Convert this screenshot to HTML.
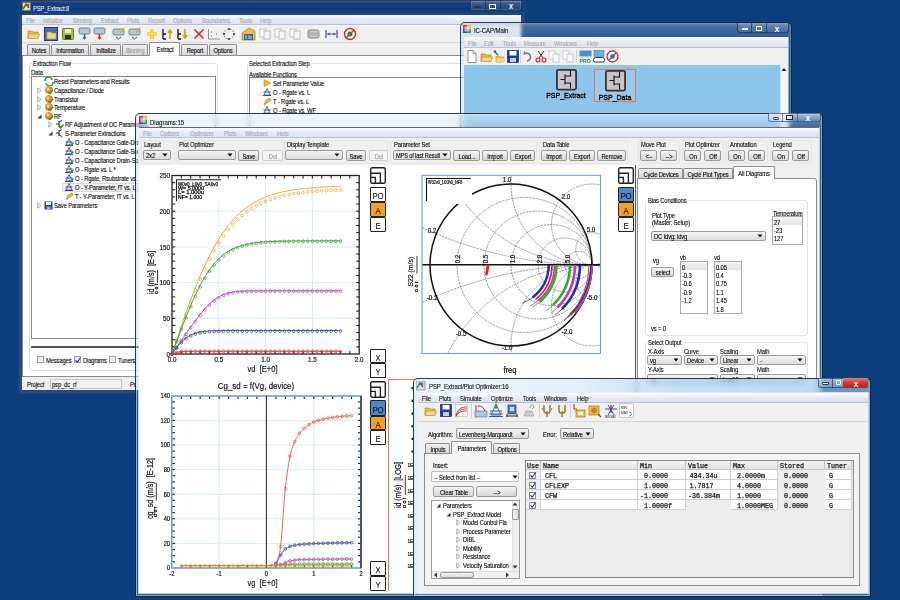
<!DOCTYPE html>
<html><head><meta charset="utf-8"><style>
*{margin:0;padding:0;box-sizing:border-box}
html,body{width:900px;height:600px;overflow:hidden}
body{position:relative;background:#0c3e7d;font-family:"Liberation Sans", sans-serif;font-size:7px;color:#000}
.a{position:absolute}
.t{position:absolute;white-space:nowrap;line-height:1;-webkit-text-stroke:0.1px currentColor}
</style></head><body>
<div class="a" style="left:0px;top:0px;width:900px;height:600px;background:#0c3e7d;"></div><div class="a" style="left:18px;top:0px;width:507px;height:394px;border:1px solid #2b3e5e;border-radius:5px 5px 0 0;background:linear-gradient(#3a5a8c 0px,#173f7a 2px,#0f3a78 8px,#1a4686 13px,#214b88 16px);"></div><svg class="a" style="left:22px;top:2px;" width="10" height="10" viewBox="0 0 10 10"><rect x="0.5" y="0.5" width="8" height="8" fill="#e8e0c0" stroke="#7a6a40" stroke-width="0.6"/><path d="M1 7 L4 2 L7 6" stroke="#2a7a3a" stroke-width="1.5" fill="none"/><circle cx="6" cy="3" r="1.5" fill="#d04030"/></svg><div class="t" style="left:33.0px;top:5.6px;font-size:6.48px;color:#e8eef8;letter-spacing:-0.05px;transform:scaleX(0.87);transform-origin:0 50%;">PSP_Extract:8</div><div class="a" style="left:470px;top:1px;width:52px;height:10px;border:1px solid rgba(20,40,70,0.7);border-top:none;border-radius:0 0 3px 3px;background:linear-gradient(rgba(255,255,255,0.18),rgba(255,255,255,0.05));box-shadow:inset 0 0 0 0.5px rgba(255,255,255,0.3);"></div><div class="a" style="left:485px;top:1px;width:1px;height:10px;background:rgba(20,40,70,0.6);"></div><div class="a" style="left:500px;top:1px;width:1px;height:10px;background:rgba(20,40,70,0.6);"></div><div class="a" style="left:474px;top:6px;width:7px;height:2px;background:#fff;border:0.5px solid #334;"></div><div class="a" style="left:489px;top:4px;width:7px;height:5px;border:1.5px solid #fff;"></div><div class="t" style="left:311.0px;width:400px;text-align:center;top:4.1px;font-size:6.70px;color:#fff;font-weight:bold;letter-spacing:-0.15px;transform:scaleX(0.87);transform-origin:50% 50%;">X</div><div class="a" style="left:22px;top:15px;width:499px;height:375px;background:#f0f0f0;"></div><div class="a" style="left:22px;top:15px;width:499px;height:10px;background:linear-gradient(#fdfdfe,#e9ecf5 45%,#dce1ee);border-bottom:1px solid #b9c3d6;"></div><div class="t" style="left:26.0px;top:18.1px;font-size:6.70px;color:#a6a8ae;letter-spacing:-0.15px;transform:scaleX(0.87);transform-origin:0 50%;">File</div><div class="t" style="left:43.0px;top:18.1px;font-size:6.70px;color:#a6a8ae;letter-spacing:-0.15px;transform:scaleX(0.87);transform-origin:0 50%;">Initialize</div><div class="t" style="left:73.0px;top:18.1px;font-size:6.70px;color:#a6a8ae;letter-spacing:-0.15px;transform:scaleX(0.87);transform-origin:0 50%;">Binning</div><div class="t" style="left:101.0px;top:18.1px;font-size:6.70px;color:#a6a8ae;letter-spacing:-0.15px;transform:scaleX(0.87);transform-origin:0 50%;">Extract</div><div class="t" style="left:127.0px;top:18.1px;font-size:6.70px;color:#a6a8ae;letter-spacing:-0.15px;transform:scaleX(0.87);transform-origin:0 50%;">Plots</div><div class="t" style="left:148.0px;top:18.1px;font-size:6.70px;color:#a6a8ae;letter-spacing:-0.15px;transform:scaleX(0.87);transform-origin:0 50%;">Report</div><div class="t" style="left:173.0px;top:18.1px;font-size:6.70px;color:#a6a8ae;letter-spacing:-0.15px;transform:scaleX(0.87);transform-origin:0 50%;">Options</div><div class="t" style="left:202.0px;top:18.1px;font-size:6.70px;color:#a6a8ae;letter-spacing:-0.15px;transform:scaleX(0.87);transform-origin:0 50%;">Boundaries</div><div class="t" style="left:239.0px;top:18.1px;font-size:6.70px;color:#a6a8ae;letter-spacing:-0.15px;transform:scaleX(0.87);transform-origin:0 50%;">Tools</div><div class="t" style="left:260.0px;top:18.1px;font-size:6.70px;color:#a6a8ae;letter-spacing:-0.15px;transform:scaleX(0.87);transform-origin:0 50%;">Help</div><svg class="a" style="left:27px;top:28px;" width="13" height="12" viewBox="0 0 13 12"><path d="M1 3 L5 3 L6 4 L11 4 L11 10 L1 10 Z" fill="#e9b94a" stroke="#a87a1e" stroke-width="0.6"/><path d="M2 6 L12.5 6 L11 10.5 L1 10.5 Z" fill="#f6d27a" stroke="#b68a2a" stroke-width="0.6"/></svg><svg class="a" style="left:44px;top:27px;" width="14" height="14" viewBox="0 0 14 14"><rect x="0" y="0" width="14" height="14" fill="#1c3a8a"/><rect x="1" y="1" width="12" height="12" fill="#4a6ab8"/><path d="M3 5 L7 5 L8 6 L12 6 L12 12 L3 12 Z" fill="#f6d27a" stroke="#b68a2a" stroke-width="0.6"/></svg><svg class="a" style="left:62px;top:28px;" width="12" height="12" viewBox="0 0 12 12"><rect x="0.5" y="0.5" width="11" height="11" rx="1" fill="#a8c040" stroke="#4a5a10" stroke-width="0.8"/><rect x="3" y="1" width="6" height="4" fill="#e8f0c0"/><rect x="3" y="7" width="6" height="4" fill="#2a3a10"/></svg><svg class="a" style="left:78px;top:27px;" width="14" height="14" viewBox="0 0 14 14"><rect x="1" y="1" width="11" height="6" rx="1.5" fill="#b8c8d8" stroke="#506070" stroke-width="0.7"/><path d="M6.5 7 L6.5 12" stroke="#2060c0" stroke-width="1.5"/><path d="M4.5 10 L6.5 13 L8.5 10 Z" fill="#2060c0"/></svg><svg class="a" style="left:93px;top:27px;" width="14" height="14" viewBox="0 0 14 14"><rect x="1" y="1" width="11" height="6" rx="1.5" fill="#b8c8d8" stroke="#506070" stroke-width="0.7"/><path d="M6.5 7 L6.5 12" stroke="#d02020" stroke-width="1.5"/><path d="M4.5 10 L6.5 13 L8.5 10 Z" fill="#d02020"/></svg><svg class="a" style="left:112px;top:27px;" width="14" height="14" viewBox="0 0 14 14"><rect x="1" y="2" width="11" height="6" rx="1.5" fill="#b8c8d8" stroke="#506070" stroke-width="0.7"/><path d="M4 10 L6.5 12 L9 10" stroke="#304080" stroke-width="1" fill="none"/><path d="M8 6 L12 1" stroke="#d0b020" stroke-width="1.5"/></svg><svg class="a" style="left:128px;top:27px;" width="14" height="14" viewBox="0 0 14 14"><rect x="1" y="2" width="11" height="6" rx="1.5" fill="#b8c8d8" stroke="#506070" stroke-width="0.7"/><path d="M4 10 L6.5 12 L9 10" stroke="#304080" stroke-width="1" fill="none"/><path d="M8 6 L12 1" stroke="#d0b020" stroke-width="1.5"/></svg><svg class="a" style="left:146px;top:28px;" width="12" height="12" viewBox="0 0 12 12"><path d="M6 1 L6 11 M1 6 L11 6" stroke="#e8c820" stroke-width="3.5"/><path d="M6 1 L6 11 M1 6 L11 6" stroke="#f8e040" stroke-width="2"/></svg><svg class="a" style="left:161px;top:28px;" width="13" height="13" viewBox="0 0 13 13"><path d="M2 1 L2 11 M2 6 L5 6 M2 11 L5 11" stroke="#111" stroke-width="1.3" fill="none"/><path d="M9 2 L9 11 M7 5 L9 2 L11 5" stroke="#c8a810" stroke-width="1.6" fill="none"/></svg><svg class="a" style="left:176px;top:28px;" width="13" height="13" viewBox="0 0 13 13"><path d="M2 1 L2 11 M2 6 L5 6 M2 11 L5 11" stroke="#111" stroke-width="1.3" fill="none"/><path d="M9 1 L9 10 M7 7 L9 10 L11 7" stroke="#c8a810" stroke-width="1.6" fill="none"/></svg><svg class="a" style="left:193px;top:28px;" width="12" height="12" viewBox="0 0 12 12"><path d="M1.5 1.5 L10.5 10.5 M10.5 1.5 L1.5 10.5" stroke="#e02020" stroke-width="1.5"/></svg><svg class="a" style="left:207px;top:28px;" width="14" height="12" viewBox="0 0 14 12"><path d="M1.5 1 L1.5 11 L13 11" stroke="#777" stroke-width="0.8" fill="none"/><path d="M4 4 L6 4 M4 8 L6 8 M9 6 L11 6" stroke="#555" stroke-width="1" stroke-dasharray="1 1"/></svg><svg class="a" style="left:222px;top:27px;" width="14" height="14" viewBox="0 0 14 14"><circle cx="7" cy="7" r="5" fill="none" stroke="#666" stroke-width="1" stroke-dasharray="1.5 1.5"/><circle cx="7" cy="2" r="1" fill="#333"/><circle cx="2" cy="7" r="1" fill="#333"/><circle cx="12" cy="7" r="1" fill="#333"/><circle cx="7" cy="12" r="1" fill="#333"/></svg><svg class="a" style="left:241px;top:27px;" width="15" height="14" viewBox="0 0 15 14"><path d="M1 6 L8 1 L14 4 L14 13 L1 13 Z" fill="#f0c030" stroke="#8a6a10" stroke-width="0.6"/><rect x="3" y="7" width="9" height="6" fill="#3060b8"/><path d="M5 8 L5 12 M8 8 L8 12 M10 9 L10 12" stroke="#fff" stroke-width="0.8"/></svg><svg class="a" style="left:259px;top:28px;" width="13" height="12" viewBox="0 0 13 12"><rect x="1" y="1" width="6" height="8" fill="#fff" stroke="#aaa" stroke-width="0.7"/><rect x="5" y="3" width="6" height="8" fill="#f4f4f4" stroke="#aaa" stroke-width="0.7"/></svg><svg class="a" style="left:274px;top:28px;" width="13" height="12" viewBox="0 0 13 12"><rect x="1" y="1" width="6" height="8" fill="#fff" stroke="#aaa" stroke-width="0.7"/><rect x="5" y="3" width="6" height="8" fill="#f4f4f4" stroke="#aaa" stroke-width="0.7"/></svg><svg class="a" style="left:289px;top:28px;" width="13" height="12" viewBox="0 0 13 12"><rect x="1" y="1" width="6" height="8" fill="#fff" stroke="#aaa" stroke-width="0.7"/><rect x="5" y="3" width="6" height="8" fill="#f4f4f4" stroke="#aaa" stroke-width="0.7"/></svg><svg class="a" style="left:307px;top:28px;" width="13" height="12" viewBox="0 0 13 12"><rect x="1" y="2" width="11" height="8" rx="2" fill="#c8c8c8" stroke="#777" stroke-width="0.8"/><path d="M2 5 L11 5 M2 7 L11 7" stroke="#888" stroke-width="0.6"/></svg><svg class="a" style="left:325px;top:28px;" width="13" height="12" viewBox="0 0 13 12"><path d="M1 2 L1 10 M12 2 L12 10" stroke="#3050b0" stroke-width="1.2"/><path d="M2 6 L11 6" stroke="#3050b0" stroke-width="0.9"/><path d="M2.5 6 L4.5 4.5 L4.5 7.5 Z M10.5 6 L8.5 4.5 L8.5 7.5 Z" fill="#3050b0"/></svg><svg class="a" style="left:343px;top:27px;" width="14" height="14" viewBox="0 0 14 14"><circle cx="7" cy="7" r="5.5" fill="#fff" stroke="#d82020" stroke-width="1.4"/><path d="M3 11 L11 3" stroke="#d82020" stroke-width="1.4"/><circle cx="7" cy="7" r="2.5" fill="#2a8a3a"/></svg><div class="a" style="left:40px;top:28px;width:1px;height:12px;background:#d8d8d8;border-right:1px solid #fff;"></div><div class="a" style="left:60px;top:28px;width:1px;height:12px;background:#d8d8d8;border-right:1px solid #fff;"></div><div class="a" style="left:109px;top:28px;width:1px;height:12px;background:#d8d8d8;border-right:1px solid #fff;"></div><div class="a" style="left:143px;top:28px;width:1px;height:12px;background:#d8d8d8;border-right:1px solid #fff;"></div><div class="a" style="left:238px;top:28px;width:1px;height:12px;background:#d8d8d8;border-right:1px solid #fff;"></div><div class="a" style="left:257px;top:28px;width:1px;height:12px;background:#d8d8d8;border-right:1px solid #fff;"></div><div class="a" style="left:305px;top:28px;width:1px;height:12px;background:#d8d8d8;border-right:1px solid #fff;"></div><div class="a" style="left:322px;top:28px;width:1px;height:12px;background:#d8d8d8;border-right:1px solid #fff;"></div><div class="a" style="left:341px;top:28px;width:1px;height:12px;background:#d8d8d8;border-right:1px solid #fff;"></div><div class="a" style="left:22px;top:42px;width:499px;height:1px;background:#dadada;"></div><div class="a" style="left:22px;top:55px;width:499px;height:322px;background:#fff;border:1px solid #8c8e94;"></div><div class="a" style="left:27px;top:44px;width:23px;height:11px;background:linear-gradient(#f2f2f2,#e3e3e3 50%,#d7d7d7);border:1px solid #8c8e94;border-bottom:none;border-radius:2px 2px 0 0;"></div><div class="t" style="left:-161.5px;width:400px;text-align:center;top:48.1px;font-size:6.70px;color:#000;letter-spacing:-0.15px;transform:scaleX(0.87);transform-origin:50% 50%;">Notes</div><div class="a" style="left:51px;top:44px;width:38px;height:11px;background:linear-gradient(#f2f2f2,#e3e3e3 50%,#d7d7d7);border:1px solid #8c8e94;border-bottom:none;border-radius:2px 2px 0 0;"></div><div class="t" style="left:-130.0px;width:400px;text-align:center;top:48.1px;font-size:6.70px;color:#000;letter-spacing:-0.15px;transform:scaleX(0.87);transform-origin:50% 50%;">Information</div><div class="a" style="left:90px;top:44px;width:31px;height:11px;background:linear-gradient(#f2f2f2,#e3e3e3 50%,#d7d7d7);border:1px solid #8c8e94;border-bottom:none;border-radius:2px 2px 0 0;"></div><div class="t" style="left:-94.5px;width:400px;text-align:center;top:48.1px;font-size:6.70px;color:#000;letter-spacing:-0.15px;transform:scaleX(0.87);transform-origin:50% 50%;">Initialize</div><div class="a" style="left:122px;top:44px;width:26px;height:11px;background:linear-gradient(#f2f2f2,#e3e3e3 50%,#d7d7d7);border:1px solid #8c8e94;border-bottom:none;border-radius:2px 2px 0 0;"></div><div class="t" style="left:-65.0px;width:400px;text-align:center;top:48.1px;font-size:6.70px;color:#9a9a9a;letter-spacing:-0.15px;transform:scaleX(0.87);transform-origin:50% 50%;">Binning</div><div class="a" style="left:149px;top:42px;width:31px;height:14px;background:#fff;border:1px solid #8c8e94;border-bottom:none;border-radius:2px 2px 0 0;"></div><div class="t" style="left:-35.5px;width:400px;text-align:center;top:47.1px;font-size:6.70px;color:#000;letter-spacing:-0.15px;transform:scaleX(0.87);transform-origin:50% 50%;">Extract</div><div class="a" style="left:181px;top:44px;width:27px;height:11px;background:linear-gradient(#f2f2f2,#e3e3e3 50%,#d7d7d7);border:1px solid #8c8e94;border-bottom:none;border-radius:2px 2px 0 0;"></div><div class="t" style="left:-5.5px;width:400px;text-align:center;top:48.1px;font-size:6.70px;color:#000;letter-spacing:-0.15px;transform:scaleX(0.87);transform-origin:50% 50%;">Report</div><div class="a" style="left:209px;top:44px;width:28px;height:11px;background:linear-gradient(#f2f2f2,#e3e3e3 50%,#d7d7d7);border:1px solid #8c8e94;border-bottom:none;border-radius:2px 2px 0 0;"></div><div class="t" style="left:23.0px;width:400px;text-align:center;top:48.1px;font-size:6.70px;color:#000;letter-spacing:-0.15px;transform:scaleX(0.87);transform-origin:50% 50%;">Options</div><div class="a" style="left:29px;top:63px;width:189px;height:308px;border:1px solid #d5dfe5;border-radius:3px;"></div><div class="a" style="left:32px;top:60px;width:39px;height:6px;background:#fff;"></div><div class="t" style="left:33.0px;top:61.1px;font-size:6.70px;color:#000;letter-spacing:-0.15px;transform:scaleX(0.87);transform-origin:0 50%;">Extraction Flow</div><div class="t" style="left:31.0px;top:70.1px;font-size:6.70px;color:#000;letter-spacing:-0.15px;transform:scaleX(0.87);transform-origin:0 50%;">Data</div><div class="a" style="left:31px;top:76px;width:185px;height:263px;background:#fff;border:1px solid #828790;"></div><svg class="a" style="left:43.5px;top:77px;" width="10" height="9" viewBox="0 0 10 9"><path d="M1 4 A3.5 3.5 0 0 1 8 3" stroke="#30a030" stroke-width="1.6" fill="none"/><path d="M9 5 A3.5 3.5 0 0 1 2 6" stroke="#30a030" stroke-width="1.6" fill="none"/></svg><div class="t" style="left:54.0px;top:79.1px;font-size:6.70px;color:#000;letter-spacing:-0.15px;transform:scaleX(0.87);transform-origin:0 50%;">Reset Parameters and Results</div><svg class="a" style="left:37px;top:87px;" width="5" height="7" viewBox="0 0 5 7"><path d="M0.8 0.8 L4 3.5 L0.8 6.2 Z" fill="none" stroke="#909090" stroke-width="0.8"/></svg><svg class="a" style="left:44.5px;top:86px;" width="9" height="9" viewBox="0 0 9 9"><circle cx="4" cy="4" r="3.6" fill="#f08a30" stroke="#c05a10" stroke-width="0.5"/><circle cx="3" cy="3" r="1.4" fill="#ffd0a0"/><path d="M3.5 6 L5 7.5 L8 4" stroke="#20a020" stroke-width="1.4" fill="none"/></svg><div class="t" style="left:54.0px;top:88.1px;font-size:6.70px;color:#000;letter-spacing:-0.15px;transform:scaleX(0.87);transform-origin:0 50%;">Capacitance / Diode</div><svg class="a" style="left:37px;top:95.5px;" width="5" height="7" viewBox="0 0 5 7"><path d="M0.8 0.8 L4 3.5 L0.8 6.2 Z" fill="none" stroke="#909090" stroke-width="0.8"/></svg><svg class="a" style="left:44.5px;top:94.5px;" width="9" height="9" viewBox="0 0 9 9"><circle cx="4" cy="4" r="3.6" fill="#f08a30" stroke="#c05a10" stroke-width="0.5"/><circle cx="3" cy="3" r="1.4" fill="#ffd0a0"/><path d="M3.5 6 L5 7.5 L8 4" stroke="#20a020" stroke-width="1.4" fill="none"/></svg><div class="t" style="left:54.0px;top:96.6px;font-size:6.70px;color:#000;letter-spacing:-0.15px;transform:scaleX(0.87);transform-origin:0 50%;">Transistor</div><svg class="a" style="left:37px;top:104px;" width="5" height="7" viewBox="0 0 5 7"><path d="M0.8 0.8 L4 3.5 L0.8 6.2 Z" fill="none" stroke="#909090" stroke-width="0.8"/></svg><svg class="a" style="left:44.5px;top:103px;" width="9" height="9" viewBox="0 0 9 9"><circle cx="4" cy="4" r="3.6" fill="#f08a30" stroke="#c05a10" stroke-width="0.5"/><circle cx="3" cy="3" r="1.4" fill="#ffd0a0"/><path d="M3.5 6 L5 7.5 L8 4" stroke="#20a020" stroke-width="1.4" fill="none"/></svg><div class="t" style="left:54.0px;top:105.1px;font-size:6.70px;color:#000;letter-spacing:-0.15px;transform:scaleX(0.87);transform-origin:0 50%;">Temperature</div><svg class="a" style="left:36.5px;top:113.5px;" width="5" height="5" viewBox="0 0 5 5"><path d="M4.5 0.5 L4.5 4.5 L0.5 4.5 Z" fill="#333"/></svg><svg class="a" style="left:44.5px;top:111.5px;" width="9" height="9" viewBox="0 0 9 9"><circle cx="4" cy="4" r="3.6" fill="#f08a30" stroke="#c05a10" stroke-width="0.5"/><circle cx="3" cy="3" r="1.4" fill="#ffd0a0"/><path d="M3.5 6 L5 7.5 L8 4" stroke="#20a020" stroke-width="1.4" fill="none"/></svg><div class="t" style="left:54.0px;top:113.6px;font-size:6.70px;color:#000;letter-spacing:-0.15px;transform:scaleX(0.87);transform-origin:0 50%;">RF</div><svg class="a" style="left:48px;top:121px;" width="5" height="7" viewBox="0 0 5 7"><path d="M0.8 0.8 L4 3.5 L0.8 6.2 Z" fill="none" stroke="#909090" stroke-width="0.8"/></svg><svg class="a" style="left:55px;top:120px;" width="9" height="9" viewBox="0 0 9 9"><path d="M1 4 L4 4 M4 1 L4 7 M4 2 L7 0.5 M4 6 L7 7.5" stroke="#222" stroke-width="1" fill="none"/><path d="M4 6 L5.5 8 L8.5 4.5" stroke="#20a020" stroke-width="1.3" fill="none"/></svg><div class="t" style="left:64.5px;top:122.1px;font-size:6.70px;color:#000;letter-spacing:-0.15px;transform:scaleX(0.87);transform-origin:0 50%;">RF Adjustment of DC Parameters</div><svg class="a" style="left:47.5px;top:130.5px;" width="5" height="5" viewBox="0 0 5 5"><path d="M4.5 0.5 L4.5 4.5 L0.5 4.5 Z" fill="#333"/></svg><svg class="a" style="left:55px;top:128.5px;" width="9" height="9" viewBox="0 0 9 9"><path d="M1 4 L4 4 M4 1 L4 7 M4 2 L7 0.5 M4 6 L7 7.5" stroke="#222" stroke-width="1" fill="none"/></svg><div class="t" style="left:64.5px;top:130.6px;font-size:6.70px;color:#000;letter-spacing:-0.15px;transform:scaleX(0.87);transform-origin:0 50%;">S-Parameter Extractions</div><svg class="a" style="left:65px;top:138px;" width="9" height="9" viewBox="0 0 9 9"><path d="M4 0.5 L1 7 L7 7 Z" fill="none" stroke="#3040b0" stroke-width="0.8"/><path d="M0.5 4 L7.5 4 M0 7.5 L8 7.5" stroke="#3040b0" stroke-width="1"/><path d="M4 6 L5.5 8 L8.5 4.5" stroke="#20a020" stroke-width="1.3" fill="none"/></svg><div class="t" style="left:75.0px;top:140.1px;font-size:6.70px;color:#000;letter-spacing:-0.15px;transform:scaleX(0.87);transform-origin:0 50%;">O - Capacitance Gate-Drain</div><svg class="a" style="left:65px;top:147px;" width="9" height="9" viewBox="0 0 9 9"><path d="M4 0.5 L1 7 L7 7 Z" fill="none" stroke="#3040b0" stroke-width="0.8"/><path d="M0.5 4 L7.5 4 M0 7.5 L8 7.5" stroke="#3040b0" stroke-width="1"/><path d="M4 6 L5.5 8 L8.5 4.5" stroke="#20a020" stroke-width="1.3" fill="none"/></svg><div class="t" style="left:75.0px;top:149.1px;font-size:6.70px;color:#000;letter-spacing:-0.15px;transform:scaleX(0.87);transform-origin:0 50%;">O - Capacitance Gate-Source</div><svg class="a" style="left:65px;top:156px;" width="9" height="9" viewBox="0 0 9 9"><path d="M4 0.5 L1 7 L7 7 Z" fill="none" stroke="#3040b0" stroke-width="0.8"/><path d="M0.5 4 L7.5 4 M0 7.5 L8 7.5" stroke="#3040b0" stroke-width="1"/><path d="M4 6 L5.5 8 L8.5 4.5" stroke="#20a020" stroke-width="1.3" fill="none"/></svg><div class="t" style="left:75.0px;top:158.1px;font-size:6.70px;color:#000;letter-spacing:-0.15px;transform:scaleX(0.87);transform-origin:0 50%;">O - Capacitance Drain-Source</div><svg class="a" style="left:65px;top:165px;" width="9" height="9" viewBox="0 0 9 9"><path d="M4 0.5 L1 7 L7 7 Z" fill="none" stroke="#3040b0" stroke-width="0.8"/><path d="M0.5 4 L7.5 4 M0 7.5 L8 7.5" stroke="#3040b0" stroke-width="1"/><path d="M4 6 L5.5 8 L8.5 4.5" stroke="#20a020" stroke-width="1.3" fill="none"/></svg><div class="t" style="left:75.0px;top:167.1px;font-size:6.70px;color:#000;letter-spacing:-0.15px;transform:scaleX(0.87);transform-origin:0 50%;">O - Rgate vs. L *</div><svg class="a" style="left:65px;top:174px;" width="9" height="9" viewBox="0 0 9 9"><path d="M4 0.5 L1 7 L7 7 Z" fill="none" stroke="#3040b0" stroke-width="0.8"/><path d="M0.5 4 L7.5 4 M0 7.5 L8 7.5" stroke="#3040b0" stroke-width="1"/><path d="M4 6 L5.5 8 L8.5 4.5" stroke="#20a020" stroke-width="1.3" fill="none"/></svg><div class="t" style="left:75.0px;top:176.1px;font-size:6.70px;color:#000;letter-spacing:-0.15px;transform:scaleX(0.87);transform-origin:0 50%;">O - Rgate, Rsubstrate vs. f</div><div class="a" style="left:62px;top:183px;width:78px;height:8.5px;background:#f0f0f0;border:1px solid #d8d8d8;"></div><svg class="a" style="left:65px;top:183px;" width="9" height="9" viewBox="0 0 9 9"><path d="M4 0.5 L1 7 L7 7 Z" fill="none" stroke="#3040b0" stroke-width="0.8"/><path d="M0.5 4 L7.5 4 M0 7.5 L8 7.5" stroke="#3040b0" stroke-width="1"/></svg><div class="t" style="left:75.0px;top:185.1px;font-size:6.70px;color:#000;letter-spacing:-0.15px;transform:scaleX(0.87);transform-origin:0 50%;">O - Y-Parameter, fT vs. L</div><svg class="a" style="left:65px;top:192px;" width="9" height="9" viewBox="0 0 9 9"><path d="M1 8 L3 3 L7 1 L8 3 L4 6 Z" fill="#e8c030" stroke="#a08010" stroke-width="0.6"/></svg><div class="t" style="left:75.0px;top:194.1px;font-size:6.70px;color:#000;letter-spacing:-0.15px;transform:scaleX(0.87);transform-origin:0 50%;">T - Y-Parameter, fT vs. L</div><svg class="a" style="left:37px;top:202px;" width="5" height="7" viewBox="0 0 5 7"><path d="M0.8 0.8 L4 3.5 L0.8 6.2 Z" fill="none" stroke="#909090" stroke-width="0.8"/></svg><svg class="a" style="left:44px;top:201px;" width="9" height="9" viewBox="0 0 9 9"><rect x="0.5" y="0.5" width="8" height="8" fill="#2040a0"/><rect x="2" y="1" width="5" height="3" fill="#fff"/><rect x="2.5" y="5.5" width="4" height="3" fill="#a0b0d0"/></svg><div class="t" style="left:54.0px;top:203.1px;font-size:6.70px;color:#000;letter-spacing:-0.15px;transform:scaleX(0.87);transform-origin:0 50%;">Save Parameters</div><div class="a" style="left:31px;top:346px;width:185px;height:1.5px;background:#5a5050;"></div><div class="a" style="left:37px;top:356.0px;width:7px;height:7.0px;border:1px solid #9a9a9a;background:linear-gradient(#e8e8e8,#fafafa);"></div><div class="t" style="left:46.0px;top:357.6px;font-size:6.70px;color:#000;letter-spacing:-0.15px;transform:scaleX(0.87);transform-origin:0 50%;">Messages</div><div class="a" style="left:74px;top:356.0px;width:7px;height:7.0px;border:1px solid #9a9a9a;background:linear-gradient(#e8e8e8,#fafafa);"></div><svg class="a" style="left:74px;top:355.5px;" width="8" height="8" viewBox="0 0 8 8"><path d="M1.5 4 L3.2 6.2 L6.5 1.5" stroke="#2a3a8a" stroke-width="1.1" fill="none"/></svg><div class="t" style="left:82.5px;top:357.6px;font-size:6.70px;color:#000;letter-spacing:-0.15px;transform:scaleX(0.87);transform-origin:0 50%;">Diagrams</div><div class="a" style="left:108.5px;top:356.0px;width:7.0px;height:7.0px;border:1px solid #9a9a9a;background:linear-gradient(#e8e8e8,#fafafa);"></div><div class="t" style="left:117.5px;top:357.6px;font-size:6.70px;color:#000;letter-spacing:-0.15px;transform:scaleX(0.87);transform-origin:0 50%;">Tuners</div><div class="a" style="left:247px;top:63px;width:268px;height:308px;border:1px solid #d5dfe5;border-radius:3px;"></div><div class="a" style="left:248px;top:60px;width:64px;height:6px;background:#fff;"></div><div class="t" style="left:249.0px;top:61.1px;font-size:6.70px;color:#000;letter-spacing:-0.15px;transform:scaleX(0.87);transform-origin:0 50%;">Selected Extraction Step</div><div class="t" style="left:249.0px;top:72.1px;font-size:6.70px;color:#000;letter-spacing:-0.15px;transform:scaleX(0.87);transform-origin:0 50%;">Available Functions</div><div class="a" style="left:249px;top:77px;width:266px;height:262px;background:#fff;border:1px solid #828790;"></div><svg class="a" style="left:263px;top:79px;" width="9" height="8" viewBox="0 0 9 8"><path d="M1 0.5 L8 4 L1 7.5 Z" fill="#e8c020" stroke="#a08010" stroke-width="0.5"/></svg><div class="t" style="left:272.5px;top:81.1px;font-size:6.70px;color:#000;letter-spacing:-0.15px;transform:scaleX(0.87);transform-origin:0 50%;">Set Parameter Value</div><svg class="a" style="left:262.5px;top:88px;" width="9" height="9" viewBox="0 0 9 9"><path d="M4 0.5 L1 7 L7 7 Z" fill="none" stroke="#3040b0" stroke-width="0.8"/><path d="M0.5 4 L7.5 4 M0 7.5 L8 7.5" stroke="#3040b0" stroke-width="1"/></svg><div class="t" style="left:272.5px;top:90.1px;font-size:6.70px;color:#000;letter-spacing:-0.15px;transform:scaleX(0.87);transform-origin:0 50%;">O - Rgate vs. L</div><svg class="a" style="left:262.5px;top:97px;" width="9" height="9" viewBox="0 0 9 9"><path d="M1 8 L3 3 L7 1 L8 3 L4 6 Z" fill="#e8c030" stroke="#a08010" stroke-width="0.6"/></svg><div class="t" style="left:272.5px;top:99.1px;font-size:6.70px;color:#000;letter-spacing:-0.15px;transform:scaleX(0.87);transform-origin:0 50%;">T - Rgate vs. L</div><svg class="a" style="left:262.5px;top:106px;" width="9" height="9" viewBox="0 0 9 9"><path d="M4 0.5 L1 7 L7 7 Z" fill="none" stroke="#3040b0" stroke-width="0.8"/><path d="M0.5 4 L7.5 4 M0 7.5 L8 7.5" stroke="#3040b0" stroke-width="1"/></svg><div class="t" style="left:272.5px;top:108.1px;font-size:6.70px;color:#000;letter-spacing:-0.15px;transform:scaleX(0.87);transform-origin:0 50%;">O - Rgate vs. WF</div><div class="t" style="left:27.0px;top:381.6px;font-size:6.70px;color:#000;letter-spacing:-0.15px;transform:scaleX(0.87);transform-origin:0 50%;">Project</div><div class="a" style="left:50px;top:379px;width:72px;height:10px;background:#f4f4f4;border:1px solid #c8c8c8;"></div><div class="t" style="left:52.0px;top:382.1px;font-size:6.70px;color:#000;letter-spacing:-0.15px;transform:scaleX(0.87);transform-origin:0 50%;">psp_dc_rf</div><div class="t" style="left:130.0px;top:381.6px;font-size:6.70px;color:#000;letter-spacing:-0.15px;transform:scaleX(0.87);transform-origin:0 50%;">Pr</div><div class="a" style="left:460px;top:22px;width:332px;height:118px;border:1px solid rgba(15,25,45,0.8);border-radius:5px 5px 0 0;background:rgba(120,170,225,0.2);box-shadow:inset 0 0 0 1px rgba(200,225,250,0.35);"></div><div class="a" style="left:461px;top:23px;width:330px;height:14px;backdrop-filter:blur(1.5px);-webkit-backdrop-filter:blur(1.5px);background:linear-gradient(rgba(255,255,255,0.2),rgba(255,255,255,0.05));border-radius:4px 4px 0 0;"></div><div class="a" style="left:463px;top:36.5px;width:326px;height:103.5px;border:1px solid rgba(230,240,250,0.6);"></div><svg class="a" style="left:463px;top:25px;" width="10" height="10" viewBox="0 0 10 10"><rect x="0" y="0" width="4" height="4" fill="#e03030"/><rect x="4" y="0" width="4" height="4" fill="#f0c020"/><rect x="0" y="4" width="4" height="4" fill="#3050c0"/><rect x="4" y="4" width="4" height="4" fill="#30a040"/><rect x="1.5" y="1.5" width="5" height="5" fill="#fff" opacity="0.6"/></svg><div class="t" style="left:474.0px;top:28.0px;font-size:6.93px;color:#111;letter-spacing:-0.1px;transform:scaleX(0.87);transform-origin:0 50%;">IC-CAP/Main</div><div class="a" style="left:737px;top:23px;width:52px;height:10px;border:1px solid rgba(20,40,70,0.7);border-top:none;border-radius:0 0 3px 3px;background:linear-gradient(rgba(255,255,255,0.18),rgba(255,255,255,0.05));"></div><div class="a" style="left:751px;top:23px;width:1px;height:10px;background:rgba(20,40,70,0.6);"></div><div class="a" style="left:766px;top:23px;width:1px;height:10px;background:rgba(20,40,70,0.6);"></div><div class="a" style="left:742px;top:28px;width:6px;height:2px;background:#fff;"></div><div class="a" style="left:756px;top:25.5px;width:6px;height:5.0px;border:1.5px solid #fff;"></div><div class="t" style="left:577.0px;width:400px;text-align:center;top:25.7px;font-size:7.82px;color:#fff;font-weight:bold;letter-spacing:-0.15px;transform:scaleX(0.87);transform-origin:50% 50%;">X</div><div class="a" style="left:464px;top:37px;width:324px;height:103px;background:#f0f0f0;"></div><div class="a" style="left:464px;top:37px;width:324px;height:11px;background:linear-gradient(#fdfdfe,#e9ecf5 45%,#dce1ee);border-bottom:1px solid #b9c3d6;"></div><div class="t" style="left:468.0px;top:40.6px;font-size:6.70px;color:#a6a8ae;letter-spacing:-0.15px;transform:scaleX(0.87);transform-origin:0 50%;">File</div><div class="t" style="left:484.0px;top:40.6px;font-size:6.70px;color:#a6a8ae;letter-spacing:-0.15px;transform:scaleX(0.87);transform-origin:0 50%;">Edit</div><div class="t" style="left:503.0px;top:40.6px;font-size:6.70px;color:#a6a8ae;letter-spacing:-0.15px;transform:scaleX(0.87);transform-origin:0 50%;">Tools</div><div class="t" style="left:524.0px;top:40.6px;font-size:6.70px;color:#a6a8ae;letter-spacing:-0.15px;transform:scaleX(0.87);transform-origin:0 50%;">Measure</div><div class="t" style="left:554.0px;top:40.6px;font-size:6.70px;color:#a6a8ae;letter-spacing:-0.15px;transform:scaleX(0.87);transform-origin:0 50%;">Windows</div><div class="t" style="left:587.0px;top:40.6px;font-size:6.70px;color:#a6a8ae;letter-spacing:-0.15px;transform:scaleX(0.87);transform-origin:0 50%;">Help</div><svg class="a" style="left:467px;top:50px;" width="10" height="13" viewBox="0 0 10 13"><path d="M1 0.5 L6 0.5 L9 3.5 L9 12.5 L1 12.5 Z" fill="#fff" stroke="#666" stroke-width="0.7"/><path d="M6 0.5 L6 3.5 L9 3.5" fill="none" stroke="#666" stroke-width="0.6"/></svg><svg class="a" style="left:480px;top:51px;" width="13" height="12" viewBox="0 0 13 12"><path d="M1 3 L5 3 L6 4 L11 4 L11 10 L1 10 Z" fill="#e9b94a" stroke="#a87a1e" stroke-width="0.6"/><path d="M2 6 L12.5 6 L11 10.5 L1 10.5 Z" fill="#f6d27a" stroke="#b68a2a" stroke-width="0.6"/></svg><svg class="a" style="left:493px;top:50px;" width="13" height="13" viewBox="0 0 13 13"><path d="M3 6 L6 6 L7 7 L11 7 L11 12 L3 12 Z" fill="#e9b94a" stroke="#a87a1e" stroke-width="0.5"/><path d="M4 8 L12.5 8 L11 12.5 L3 12.5 Z" fill="#f6d27a"/><path d="M1 1 L5 5" stroke="#208040" stroke-width="1.2"/><circle cx="2" cy="1.5" r="1.2" fill="#d03030"/></svg><svg class="a" style="left:507px;top:50px;" width="12" height="13" viewBox="0 0 12 13"><rect x="0.5" y="0.5" width="11" height="12" fill="#1c3aa0" stroke="#0a1a60" stroke-width="0.6"/><rect x="2.5" y="1" width="7" height="4.5" fill="#fff"/><rect x="3" y="8" width="6" height="4" fill="#c8d0e0"/></svg><div class="a" style="left:520px;top:50px;width:1px;height:13px;background:#d0d0d0;"></div><svg class="a" style="left:523px;top:50px;" width="11" height="13" viewBox="0 0 11 13"><path d="M3 3 A4 4 0 1 1 4 11" fill="none" stroke="#708090" stroke-width="1.6"/><path d="M1 1 L4 4 L0.5 5 Z" fill="#708090"/></svg><svg class="a" style="left:535px;top:50px;" width="12" height="13" viewBox="0 0 12 13"><path d="M3 1 L8 8 M9 1 L4 8" stroke="#333" stroke-width="1"/><circle cx="3" cy="10" r="2" fill="none" stroke="#d02020" stroke-width="1.1"/><circle cx="9" cy="10" r="2" fill="none" stroke="#d02020" stroke-width="1.1"/></svg><svg class="a" style="left:548px;top:50px;" width="13" height="13" viewBox="0 0 13 13"><rect x="1" y="1" width="6" height="8" fill="#fff" stroke="#bbb" stroke-width="0.7"/><rect x="5" y="4" width="6" height="8" fill="#f6f6f6" stroke="#bbb" stroke-width="0.7"/></svg><svg class="a" style="left:562px;top:50px;" width="13" height="13" viewBox="0 0 13 13"><rect x="1" y="1" width="6" height="8" fill="#fff" stroke="#bbb" stroke-width="0.7"/><rect x="5" y="4" width="6" height="8" fill="#f6f6f6" stroke="#bbb" stroke-width="0.7"/></svg><div class="a" style="left:576px;top:50px;width:1px;height:13px;background:#d0d0d0;"></div><svg class="a" style="left:579px;top:50px;" width="13" height="13" viewBox="0 0 13 13"><rect x="0.5" y="0.5" width="12" height="6" fill="#4a90d0"/><text transform="translate(0.5,12.5) scale(0.86,1)" font-size="6" font-weight="bold" fill="#208a30" font-family="Liberation Sans">PRO</text></svg><svg class="a" style="left:593px;top:50px;" width="12" height="13" viewBox="0 0 12 13"><rect x="1" y="0.5" width="10" height="6" fill="#6ab0e0" stroke="#3a6a9a" stroke-width="0.5"/><rect x="0.5" y="7.5" width="11" height="4.5" rx="2" fill="#fff" stroke="#222" stroke-width="0.9"/></svg><svg class="a" style="left:606px;top:50px;" width="13" height="13" viewBox="0 0 13 13"><circle cx="6.5" cy="6.5" r="5.5" fill="#fff" stroke="#d82020" stroke-width="1.3"/><path d="M3 10 L10 3" stroke="#d82020" stroke-width="1.3"/><circle cx="6.5" cy="6.5" r="2.3" fill="#3060c0"/></svg><div class="a" style="left:464px;top:65px;width:316px;height:75px;background:#8dc4ea;"></div><div class="a" style="left:780px;top:65px;width:8px;height:75px;background:#f4f4f4;border-left:1px solid #e0e0e0;"></div><svg class="a" style="left:781px;top:67px;" width="6" height="5" viewBox="0 0 6 5"><path d="M0.5 4 L3 1 L5.5 4 Z" fill="#222"/></svg><svg class="a" style="left:556px;top:69px;" width="21" height="22" viewBox="0 0 21 22"><rect x="0.9" y="0.9" width="19.2" height="19.7" rx="1.5" fill="#c6c6c6" stroke="#3a3030" stroke-width="1.8"/><path d="M4.5 10.5 L9 10.5 M9 5.5 L9 15.5 M9 7 L14.5 7 L14.5 1.5 M9 14 L14.5 14 L14.5 19.5" stroke="#111" stroke-width="1.1" fill="none"/></svg><div class="t" style="left:366.0px;width:400px;text-align:center;top:91.9px;font-size:8.04px;color:#000;letter-spacing:0.0px;transform:scaleX(0.87);transform-origin:50% 50%;-webkit-text-stroke:0.35px #000;">PSP_Extract</div><div class="a" style="left:594px;top:69px;width:42px;height:33px;border:1px solid #e07a5a;background:#98cbee;"></div><svg class="a" style="left:605px;top:70px;" width="21" height="22" viewBox="0 0 21 22"><rect x="0.9" y="0.9" width="19.2" height="19.7" rx="1.5" fill="#c6c6c6" stroke="#3a3030" stroke-width="1.8"/><path d="M4.5 10.5 L9 10.5 M9 5.5 L9 15.5 M9 7 L14.5 7 L14.5 1.5 M9 14 L14.5 14 L14.5 19.5" stroke="#111" stroke-width="1.1" fill="none"/></svg><div class="t" style="left:415.0px;width:400px;text-align:center;top:93.9px;font-size:8.04px;color:#000;letter-spacing:0.0px;transform:scaleX(0.87);transform-origin:50% 50%;-webkit-text-stroke:0.35px #000;">PSP_Data</div><div class="a" style="left:135px;top:113px;width:688px;height:483.5px;border:1px solid rgba(15,25,45,0.85);border-radius:5px 5px 0 0;background:rgba(150,195,235,0.22);box-shadow:inset 0 0 0 1px rgba(220,235,250,0.55);"></div><div class="a" style="left:136px;top:114px;width:686px;height:13px;backdrop-filter:blur(2.5px);-webkit-backdrop-filter:blur(2.5px);background:linear-gradient(rgba(255,255,255,0.35),rgba(255,255,255,0.1));border-radius:4px 4px 0 0;"></div><div class="a" style="left:138px;top:127px;width:682px;height:467px;border:1px solid rgba(230,240,250,0.8);"></div><svg class="a" style="left:139px;top:116px;" width="10" height="10" viewBox="0 0 10 10"><rect x="0" y="0" width="4" height="4" fill="#e03030"/><rect x="4" y="0" width="4" height="4" fill="#f0c020"/><rect x="0" y="4" width="4" height="4" fill="#3050c0"/><rect x="4" y="4" width="4" height="4" fill="#30a040"/><rect x="1.5" y="1.5" width="5" height="5" fill="#fff" opacity="0.6"/></svg><div class="t" style="left:150.0px;top:118.5px;font-size:7.04px;color:#111;letter-spacing:-0.05px;transform:scaleX(0.87);transform-origin:0 50%;">Diagrams:15</div><div class="a" style="left:768px;top:113px;width:53px;height:9px;border:1px solid rgba(30,50,80,0.6);border-top:none;border-radius:0 0 3px 3px;background:linear-gradient(rgba(255,255,255,0.35),rgba(255,255,255,0.08));"></div><div class="a" style="left:782px;top:113px;width:1px;height:9px;background:rgba(30,50,80,0.5);"></div><div class="a" style="left:797px;top:113px;width:1px;height:9px;background:rgba(30,50,80,0.5);"></div><div class="a" style="left:773px;top:117px;width:6px;height:2.5px;background:#fff;border:0.5px solid #445;border-radius:1px;"></div><div class="a" style="left:786px;top:115px;width:7px;height:5px;border:1.3px solid #223;background:rgba(255,255,255,0.5);"></div><div class="t" style="left:608.0px;width:400px;text-align:center;top:115.2px;font-size:7.82px;color:#fff;font-weight:bold;letter-spacing:-0.15px;transform:scaleX(0.87);transform-origin:50% 50%;">X</div><div class="a" style="left:139px;top:127px;width:680px;height:466px;background:#fff;border-top:1px solid #6a6a6a;"></div><div class="a" style="left:139px;top:128px;width:680px;height:10px;background:linear-gradient(#fdfdfe,#e9ecf5 45%,#dce1ee);border-bottom:1px solid #b9c3d6;"></div><div class="t" style="left:143.0px;top:131.1px;font-size:6.70px;color:#a6a8ae;letter-spacing:-0.15px;transform:scaleX(0.87);transform-origin:0 50%;">File</div><div class="t" style="left:160.0px;top:131.1px;font-size:6.70px;color:#a6a8ae;letter-spacing:-0.15px;transform:scaleX(0.87);transform-origin:0 50%;">Options</div><div class="t" style="left:190.0px;top:131.1px;font-size:6.70px;color:#a6a8ae;letter-spacing:-0.15px;transform:scaleX(0.87);transform-origin:0 50%;">Optimizer</div><div class="t" style="left:224.0px;top:131.1px;font-size:6.70px;color:#a6a8ae;letter-spacing:-0.15px;transform:scaleX(0.87);transform-origin:0 50%;">Plots</div><div class="t" style="left:245.0px;top:131.1px;font-size:6.70px;color:#a6a8ae;letter-spacing:-0.15px;transform:scaleX(0.87);transform-origin:0 50%;">Windows</div><div class="t" style="left:277.0px;top:131.1px;font-size:6.70px;color:#a6a8ae;letter-spacing:-0.15px;transform:scaleX(0.87);transform-origin:0 50%;">Help</div><div class="a" style="left:139px;top:138px;width:680px;height:27px;background:#f0f0f0;"></div><div class="a" style="left:141px;top:140px;width:34px;height:24px;border:1px solid #e4e4e4;border-radius:3px;"></div><div class="t" style="left:144.0px;top:141.7px;font-size:6.70px;color:#000;letter-spacing:-0.15px;transform:scaleX(0.87);transform-origin:0 50%;">Layout</div><div class="a" style="left:143px;top:150px;width:28px;height:10px;border:1px solid #9a9a9a;border-radius:2px;background:linear-gradient(#f6f6f6,#e8e8e8 50%,#dcdcdc);"></div><div class="t" style="left:146.0px;top:153.1px;font-size:6.70px;color:#000;letter-spacing:-0.15px;transform:scaleX(0.87);transform-origin:0 50%;">2x2</div><svg class="a" style="left:162px;top:153.0px" width="6" height="4"><path d="M0.5 0.5 L5.5 0.5 L3 3.5 Z" fill="#000"/></svg><div class="a" style="left:176px;top:140px;width:107px;height:24px;border:1px solid #e4e4e4;border-radius:3px;"></div><div class="t" style="left:179.0px;top:141.7px;font-size:6.70px;color:#000;letter-spacing:-0.15px;transform:scaleX(0.87);transform-origin:0 50%;">Plot Optimizer</div><div class="a" style="left:178px;top:150px;width:58px;height:10px;border:1px solid #9a9a9a;border-radius:2px;background:linear-gradient(#f6f6f6,#e8e8e8 50%,#dcdcdc);"></div><svg class="a" style="left:227px;top:153.0px" width="6" height="4"><path d="M0.5 0.5 L5.5 0.5 L3 3.5 Z" fill="#000"/></svg><div class="a" style="left:238px;top:150px;width:21px;height:11px;border:1px solid #9a9a9a;border-radius:2px;background:linear-gradient(#f4f4f4,#e6e6e6 50%,#d8d8d8);"></div><div class="t" style="left:48.5px;width:400px;text-align:center;top:153.6px;font-size:6.70px;color:#000;letter-spacing:-0.15px;transform:scaleX(0.87);transform-origin:50% 50%;">Save</div><div class="a" style="left:262px;top:150px;width:21px;height:11px;border:1px solid #cfcfcf;border-radius:2px;background:#f4f4f4;"></div><div class="t" style="left:72.5px;width:400px;text-align:center;top:153.6px;font-size:6.70px;color:#9a9a9a;letter-spacing:-0.15px;transform:scaleX(0.87);transform-origin:50% 50%;">Del</div><div class="a" style="left:284px;top:140px;width:104px;height:24px;border:1px solid #e4e4e4;border-radius:3px;"></div><div class="t" style="left:287.0px;top:141.7px;font-size:6.70px;color:#000;letter-spacing:-0.15px;transform:scaleX(0.87);transform-origin:0 50%;">Display Template</div><div class="a" style="left:285px;top:150px;width:58px;height:10px;border:1px solid #9a9a9a;border-radius:2px;background:linear-gradient(#f6f6f6,#e8e8e8 50%,#dcdcdc);"></div><svg class="a" style="left:334px;top:153.0px" width="6" height="4"><path d="M0.5 0.5 L5.5 0.5 L3 3.5 Z" fill="#000"/></svg><div class="a" style="left:346px;top:150px;width:20px;height:11px;border:1px solid #9a9a9a;border-radius:2px;background:linear-gradient(#f4f4f4,#e6e6e6 50%,#d8d8d8);"></div><div class="t" style="left:156.0px;width:400px;text-align:center;top:153.6px;font-size:6.70px;color:#000;letter-spacing:-0.15px;transform:scaleX(0.87);transform-origin:50% 50%;">Save</div><div class="a" style="left:369px;top:150px;width:19px;height:11px;border:1px solid #cfcfcf;border-radius:2px;background:#f4f4f4;"></div><div class="t" style="left:178.5px;width:400px;text-align:center;top:153.6px;font-size:6.70px;color:#9a9a9a;letter-spacing:-0.15px;transform:scaleX(0.87);transform-origin:50% 50%;">Del</div><div class="a" style="left:390px;top:140px;width:147px;height:24px;border:1px solid #e4e4e4;border-radius:3px;"></div><div class="t" style="left:394.0px;top:141.7px;font-size:6.70px;color:#000;letter-spacing:-0.15px;transform:scaleX(0.87);transform-origin:0 50%;">Parameter Set</div><div class="a" style="left:393px;top:150px;width:58px;height:10px;border:1px solid #9a9a9a;border-radius:2px;background:linear-gradient(#f6f6f6,#e8e8e8 50%,#dcdcdc);"></div><svg class="a" style="left:442px;top:153.0px" width="6" height="4"><path d="M0.5 0.5 L5.5 0.5 L3 3.5 Z" fill="#000"/></svg><div class="t" style="left:395.5px;top:153.1px;font-size:6.48px;color:#000;letter-spacing:-0.15px;transform:scaleX(0.87);transform-origin:0 50%;">MPS of last Result</div><div class="a" style="left:453px;top:150px;width:27px;height:11px;border:1px solid #9a9a9a;border-radius:2px;background:linear-gradient(#f4f4f4,#e6e6e6 50%,#d8d8d8);"></div><div class="t" style="left:266.5px;width:400px;text-align:center;top:153.6px;font-size:6.70px;color:#000;letter-spacing:-0.15px;transform:scaleX(0.87);transform-origin:50% 50%;">Load...</div><div class="a" style="left:482px;top:150px;width:26px;height:11px;border:1px solid #9a9a9a;border-radius:2px;background:linear-gradient(#f4f4f4,#e6e6e6 50%,#d8d8d8);"></div><div class="t" style="left:295.0px;width:400px;text-align:center;top:153.6px;font-size:6.70px;color:#000;letter-spacing:-0.15px;transform:scaleX(0.87);transform-origin:50% 50%;">Import</div><div class="a" style="left:510px;top:150px;width:25px;height:11px;border:1px solid #9a9a9a;border-radius:2px;background:linear-gradient(#f4f4f4,#e6e6e6 50%,#d8d8d8);"></div><div class="t" style="left:322.5px;width:400px;text-align:center;top:153.6px;font-size:6.70px;color:#000;letter-spacing:-0.15px;transform:scaleX(0.87);transform-origin:50% 50%;">Export</div><div class="a" style="left:539px;top:140px;width:89px;height:24px;border:1px solid #e4e4e4;border-radius:3px;"></div><div class="t" style="left:543.0px;top:141.7px;font-size:6.70px;color:#000;letter-spacing:-0.15px;transform:scaleX(0.87);transform-origin:0 50%;">Data Table</div><div class="a" style="left:541px;top:150px;width:26px;height:11px;border:1px solid #9a9a9a;border-radius:2px;background:linear-gradient(#f4f4f4,#e6e6e6 50%,#d8d8d8);"></div><div class="t" style="left:354.0px;width:400px;text-align:center;top:153.6px;font-size:6.70px;color:#000;letter-spacing:-0.15px;transform:scaleX(0.87);transform-origin:50% 50%;">Import</div><div class="a" style="left:569px;top:150px;width:26px;height:11px;border:1px solid #9a9a9a;border-radius:2px;background:linear-gradient(#f4f4f4,#e6e6e6 50%,#d8d8d8);"></div><div class="t" style="left:382.0px;width:400px;text-align:center;top:153.6px;font-size:6.70px;color:#000;letter-spacing:-0.15px;transform:scaleX(0.87);transform-origin:50% 50%;">Export</div><div class="a" style="left:597px;top:150px;width:29px;height:11px;border:1px solid #9a9a9a;border-radius:2px;background:linear-gradient(#f4f4f4,#e6e6e6 50%,#d8d8d8);"></div><div class="t" style="left:411.5px;width:400px;text-align:center;top:153.6px;font-size:6.70px;color:#000;letter-spacing:-0.15px;transform:scaleX(0.87);transform-origin:50% 50%;">Remove</div><div class="a" style="left:638px;top:140px;width:42px;height:24px;border:1px solid #e4e4e4;border-radius:3px;"></div><div class="t" style="left:641.0px;top:141.7px;font-size:6.70px;color:#000;letter-spacing:-0.15px;transform:scaleX(0.87);transform-origin:0 50%;">Move Plot</div><div class="a" style="left:640px;top:150px;width:17px;height:11px;border:1px solid #9a9a9a;border-radius:2px;background:linear-gradient(#f4f4f4,#e6e6e6 50%,#d8d8d8);"></div><div class="t" style="left:448.5px;width:400px;text-align:center;top:153.6px;font-size:6.70px;color:#000;letter-spacing:-0.15px;transform:scaleX(0.87);transform-origin:50% 50%;">&lt;--</div><div class="a" style="left:660px;top:150px;width:17px;height:11px;border:1px solid #9a9a9a;border-radius:2px;background:linear-gradient(#f4f4f4,#e6e6e6 50%,#d8d8d8);"></div><div class="t" style="left:468.5px;width:400px;text-align:center;top:153.6px;font-size:6.70px;color:#000;letter-spacing:-0.15px;transform:scaleX(0.87);transform-origin:50% 50%;">--&gt;</div><div class="a" style="left:682px;top:140px;width:42px;height:24px;border:1px solid #e4e4e4;border-radius:3px;"></div><div class="t" style="left:685.0px;top:141.7px;font-size:6.70px;color:#000;letter-spacing:-0.15px;transform:scaleX(0.87);transform-origin:0 50%;">Plot Optimizer</div><div class="a" style="left:684px;top:150px;width:17px;height:11px;border:1px solid #9a9a9a;border-radius:2px;background:linear-gradient(#f4f4f4,#e6e6e6 50%,#d8d8d8);"></div><div class="t" style="left:492.5px;width:400px;text-align:center;top:153.6px;font-size:6.70px;color:#000;letter-spacing:-0.15px;transform:scaleX(0.87);transform-origin:50% 50%;">On</div><div class="a" style="left:704px;top:150px;width:17px;height:11px;border:1px solid #9a9a9a;border-radius:2px;background:linear-gradient(#f4f4f4,#e6e6e6 50%,#d8d8d8);"></div><div class="t" style="left:512.5px;width:400px;text-align:center;top:153.6px;font-size:6.70px;color:#000;letter-spacing:-0.15px;transform:scaleX(0.87);transform-origin:50% 50%;">Off</div><div class="a" style="left:726px;top:140px;width:42px;height:24px;border:1px solid #e4e4e4;border-radius:3px;"></div><div class="t" style="left:730.0px;top:141.7px;font-size:6.70px;color:#000;letter-spacing:-0.15px;transform:scaleX(0.87);transform-origin:0 50%;">Annotation</div><div class="a" style="left:728px;top:150px;width:17px;height:11px;border:1px solid #9a9a9a;border-radius:2px;background:linear-gradient(#f4f4f4,#e6e6e6 50%,#d8d8d8);"></div><div class="t" style="left:536.5px;width:400px;text-align:center;top:153.6px;font-size:6.70px;color:#000;letter-spacing:-0.15px;transform:scaleX(0.87);transform-origin:50% 50%;">On</div><div class="a" style="left:748px;top:150px;width:17px;height:11px;border:1px solid #9a9a9a;border-radius:2px;background:linear-gradient(#f4f4f4,#e6e6e6 50%,#d8d8d8);"></div><div class="t" style="left:556.5px;width:400px;text-align:center;top:153.6px;font-size:6.70px;color:#000;letter-spacing:-0.15px;transform:scaleX(0.87);transform-origin:50% 50%;">Off</div><div class="a" style="left:770px;top:140px;width:42px;height:24px;border:1px solid #e4e4e4;border-radius:3px;"></div><div class="t" style="left:773.0px;top:141.7px;font-size:6.70px;color:#000;letter-spacing:-0.15px;transform:scaleX(0.87);transform-origin:0 50%;">Legend</div><div class="a" style="left:772px;top:150px;width:17px;height:11px;border:1px solid #9a9a9a;border-radius:2px;background:linear-gradient(#f4f4f4,#e6e6e6 50%,#d8d8d8);"></div><div class="t" style="left:580.5px;width:400px;text-align:center;top:153.6px;font-size:6.70px;color:#000;letter-spacing:-0.15px;transform:scaleX(0.87);transform-origin:50% 50%;">On</div><div class="a" style="left:792px;top:150px;width:17px;height:11px;border:1px solid #9a9a9a;border-radius:2px;background:linear-gradient(#f4f4f4,#e6e6e6 50%,#d8d8d8);"></div><div class="t" style="left:600.5px;width:400px;text-align:center;top:153.6px;font-size:6.70px;color:#000;letter-spacing:-0.15px;transform:scaleX(0.87);transform-origin:50% 50%;">Off</div><svg class="a" style="left:0;top:0" width="900" height="600" viewBox="0 0 900 600"><line x1="218.80" y1="175.5" x2="218.80" y2="354" stroke="#a9d3f2" stroke-width="0.8" stroke-dasharray="1.5 1"/><line x1="265.60" y1="175.5" x2="265.60" y2="354" stroke="#a9d3f2" stroke-width="0.8" stroke-dasharray="1.5 1"/><line x1="312.40" y1="175.5" x2="312.40" y2="354" stroke="#a9d3f2" stroke-width="0.8" stroke-dasharray="1.5 1"/><line x1="172" y1="318.30" x2="359.2" y2="318.30" stroke="#a9d3f2" stroke-width="0.8" stroke-dasharray="1.5 1"/><line x1="172" y1="282.60" x2="359.2" y2="282.60" stroke="#a9d3f2" stroke-width="0.8" stroke-dasharray="1.5 1"/><line x1="172" y1="246.90" x2="359.2" y2="246.90" stroke="#a9d3f2" stroke-width="0.8" stroke-dasharray="1.5 1"/><line x1="172" y1="211.20" x2="359.2" y2="211.20" stroke="#a9d3f2" stroke-width="0.8" stroke-dasharray="1.5 1"/><line x1="181.36" y1="175.5" x2="181.36" y2="178.5" stroke="#222" stroke-width="1.1"/><line x1="181.36" y1="354" x2="181.36" y2="351" stroke="#222" stroke-width="1.1"/><line x1="190.72" y1="175.5" x2="190.72" y2="178.5" stroke="#222" stroke-width="1.1"/><line x1="190.72" y1="354" x2="190.72" y2="351" stroke="#222" stroke-width="1.1"/><line x1="200.08" y1="175.5" x2="200.08" y2="178.5" stroke="#222" stroke-width="1.1"/><line x1="200.08" y1="354" x2="200.08" y2="351" stroke="#222" stroke-width="1.1"/><line x1="209.44" y1="175.5" x2="209.44" y2="178.5" stroke="#222" stroke-width="1.1"/><line x1="209.44" y1="354" x2="209.44" y2="351" stroke="#222" stroke-width="1.1"/><line x1="218.80" y1="175.5" x2="218.80" y2="178.5" stroke="#222" stroke-width="1.1"/><line x1="218.80" y1="354" x2="218.80" y2="351" stroke="#222" stroke-width="1.1"/><line x1="228.16" y1="175.5" x2="228.16" y2="178.5" stroke="#222" stroke-width="1.1"/><line x1="228.16" y1="354" x2="228.16" y2="351" stroke="#222" stroke-width="1.1"/><line x1="237.52" y1="175.5" x2="237.52" y2="178.5" stroke="#222" stroke-width="1.1"/><line x1="237.52" y1="354" x2="237.52" y2="351" stroke="#222" stroke-width="1.1"/><line x1="246.88" y1="175.5" x2="246.88" y2="178.5" stroke="#222" stroke-width="1.1"/><line x1="246.88" y1="354" x2="246.88" y2="351" stroke="#222" stroke-width="1.1"/><line x1="256.24" y1="175.5" x2="256.24" y2="178.5" stroke="#222" stroke-width="1.1"/><line x1="256.24" y1="354" x2="256.24" y2="351" stroke="#222" stroke-width="1.1"/><line x1="265.60" y1="175.5" x2="265.60" y2="178.5" stroke="#222" stroke-width="1.1"/><line x1="265.60" y1="354" x2="265.60" y2="351" stroke="#222" stroke-width="1.1"/><line x1="274.96" y1="175.5" x2="274.96" y2="178.5" stroke="#222" stroke-width="1.1"/><line x1="274.96" y1="354" x2="274.96" y2="351" stroke="#222" stroke-width="1.1"/><line x1="284.32" y1="175.5" x2="284.32" y2="178.5" stroke="#222" stroke-width="1.1"/><line x1="284.32" y1="354" x2="284.32" y2="351" stroke="#222" stroke-width="1.1"/><line x1="293.68" y1="175.5" x2="293.68" y2="178.5" stroke="#222" stroke-width="1.1"/><line x1="293.68" y1="354" x2="293.68" y2="351" stroke="#222" stroke-width="1.1"/><line x1="303.04" y1="175.5" x2="303.04" y2="178.5" stroke="#222" stroke-width="1.1"/><line x1="303.04" y1="354" x2="303.04" y2="351" stroke="#222" stroke-width="1.1"/><line x1="312.40" y1="175.5" x2="312.40" y2="178.5" stroke="#222" stroke-width="1.1"/><line x1="312.40" y1="354" x2="312.40" y2="351" stroke="#222" stroke-width="1.1"/><line x1="321.76" y1="175.5" x2="321.76" y2="178.5" stroke="#222" stroke-width="1.1"/><line x1="321.76" y1="354" x2="321.76" y2="351" stroke="#222" stroke-width="1.1"/><line x1="331.12" y1="175.5" x2="331.12" y2="178.5" stroke="#222" stroke-width="1.1"/><line x1="331.12" y1="354" x2="331.12" y2="351" stroke="#222" stroke-width="1.1"/><line x1="340.48" y1="175.5" x2="340.48" y2="178.5" stroke="#222" stroke-width="1.1"/><line x1="340.48" y1="354" x2="340.48" y2="351" stroke="#222" stroke-width="1.1"/><line x1="349.84" y1="175.5" x2="349.84" y2="178.5" stroke="#222" stroke-width="1.1"/><line x1="349.84" y1="354" x2="349.84" y2="351" stroke="#222" stroke-width="1.1"/><line x1="172" y1="346.86" x2="175.2" y2="346.86" stroke="#222" stroke-width="1.1"/><line x1="359.2" y1="346.86" x2="356.2" y2="346.86" stroke="#222" stroke-width="1.1"/><line x1="172" y1="339.72" x2="175.2" y2="339.72" stroke="#222" stroke-width="1.1"/><line x1="359.2" y1="339.72" x2="356.2" y2="339.72" stroke="#222" stroke-width="1.1"/><line x1="172" y1="332.58" x2="175.2" y2="332.58" stroke="#222" stroke-width="1.1"/><line x1="359.2" y1="332.58" x2="356.2" y2="332.58" stroke="#222" stroke-width="1.1"/><line x1="172" y1="325.44" x2="175.2" y2="325.44" stroke="#222" stroke-width="1.1"/><line x1="359.2" y1="325.44" x2="356.2" y2="325.44" stroke="#222" stroke-width="1.1"/><line x1="172" y1="318.30" x2="175.2" y2="318.30" stroke="#222" stroke-width="1.1"/><line x1="359.2" y1="318.30" x2="356.2" y2="318.30" stroke="#222" stroke-width="1.1"/><line x1="172" y1="311.16" x2="175.2" y2="311.16" stroke="#222" stroke-width="1.1"/><line x1="359.2" y1="311.16" x2="356.2" y2="311.16" stroke="#222" stroke-width="1.1"/><line x1="172" y1="304.02" x2="175.2" y2="304.02" stroke="#222" stroke-width="1.1"/><line x1="359.2" y1="304.02" x2="356.2" y2="304.02" stroke="#222" stroke-width="1.1"/><line x1="172" y1="296.88" x2="175.2" y2="296.88" stroke="#222" stroke-width="1.1"/><line x1="359.2" y1="296.88" x2="356.2" y2="296.88" stroke="#222" stroke-width="1.1"/><line x1="172" y1="289.74" x2="175.2" y2="289.74" stroke="#222" stroke-width="1.1"/><line x1="359.2" y1="289.74" x2="356.2" y2="289.74" stroke="#222" stroke-width="1.1"/><line x1="172" y1="282.60" x2="175.2" y2="282.60" stroke="#222" stroke-width="1.1"/><line x1="359.2" y1="282.60" x2="356.2" y2="282.60" stroke="#222" stroke-width="1.1"/><line x1="172" y1="275.46" x2="175.2" y2="275.46" stroke="#222" stroke-width="1.1"/><line x1="359.2" y1="275.46" x2="356.2" y2="275.46" stroke="#222" stroke-width="1.1"/><line x1="172" y1="268.32" x2="175.2" y2="268.32" stroke="#222" stroke-width="1.1"/><line x1="359.2" y1="268.32" x2="356.2" y2="268.32" stroke="#222" stroke-width="1.1"/><line x1="172" y1="261.18" x2="175.2" y2="261.18" stroke="#222" stroke-width="1.1"/><line x1="359.2" y1="261.18" x2="356.2" y2="261.18" stroke="#222" stroke-width="1.1"/><line x1="172" y1="254.04" x2="175.2" y2="254.04" stroke="#222" stroke-width="1.1"/><line x1="359.2" y1="254.04" x2="356.2" y2="254.04" stroke="#222" stroke-width="1.1"/><line x1="172" y1="246.90" x2="175.2" y2="246.90" stroke="#222" stroke-width="1.1"/><line x1="359.2" y1="246.90" x2="356.2" y2="246.90" stroke="#222" stroke-width="1.1"/><line x1="172" y1="239.76" x2="175.2" y2="239.76" stroke="#222" stroke-width="1.1"/><line x1="359.2" y1="239.76" x2="356.2" y2="239.76" stroke="#222" stroke-width="1.1"/><line x1="172" y1="232.62" x2="175.2" y2="232.62" stroke="#222" stroke-width="1.1"/><line x1="359.2" y1="232.62" x2="356.2" y2="232.62" stroke="#222" stroke-width="1.1"/><line x1="172" y1="225.48" x2="175.2" y2="225.48" stroke="#222" stroke-width="1.1"/><line x1="359.2" y1="225.48" x2="356.2" y2="225.48" stroke="#222" stroke-width="1.1"/><line x1="172" y1="218.34" x2="175.2" y2="218.34" stroke="#222" stroke-width="1.1"/><line x1="359.2" y1="218.34" x2="356.2" y2="218.34" stroke="#222" stroke-width="1.1"/><line x1="172" y1="211.20" x2="175.2" y2="211.20" stroke="#222" stroke-width="1.1"/><line x1="359.2" y1="211.20" x2="356.2" y2="211.20" stroke="#222" stroke-width="1.1"/><line x1="172" y1="204.06" x2="175.2" y2="204.06" stroke="#222" stroke-width="1.1"/><line x1="359.2" y1="204.06" x2="356.2" y2="204.06" stroke="#222" stroke-width="1.1"/><line x1="172" y1="196.92" x2="175.2" y2="196.92" stroke="#222" stroke-width="1.1"/><line x1="359.2" y1="196.92" x2="356.2" y2="196.92" stroke="#222" stroke-width="1.1"/><line x1="172" y1="189.78" x2="175.2" y2="189.78" stroke="#222" stroke-width="1.1"/><line x1="359.2" y1="189.78" x2="356.2" y2="189.78" stroke="#222" stroke-width="1.1"/><line x1="172" y1="182.64" x2="175.2" y2="182.64" stroke="#222" stroke-width="1.1"/><line x1="359.2" y1="182.64" x2="356.2" y2="182.64" stroke="#222" stroke-width="1.1"/><rect x="172" y="175.5" width="187.2" height="178.5" fill="none" stroke="#222" stroke-width="1.3"/><polyline points="172.00,354.00 173.87,348.39 175.74,342.78 177.62,337.21 179.49,331.66 181.36,326.17 183.23,320.74 185.10,315.38 186.98,310.10 188.85,304.91 190.72,299.82 192.59,294.84 194.46,289.98 196.34,285.23 198.21,280.62 200.08,276.13 201.95,271.78 203.82,267.57 205.70,263.50 207.57,259.58 209.44,255.80 211.31,252.16 213.18,248.67 215.06,245.32 216.93,242.11 218.80,239.04 220.67,236.10 222.54,233.30 224.42,230.63 226.29,228.09 228.16,225.67 230.03,223.37 231.90,221.18 233.78,219.11 235.65,217.15 237.52,215.29 239.39,213.53 241.26,211.86 243.14,210.28 245.01,208.80 246.88,207.39 248.75,206.07 250.62,204.81 252.50,203.64 254.37,202.53 256.24,201.48 258.11,200.49 259.98,199.57 261.86,198.70 263.73,197.88 265.60,197.10 267.47,196.38 269.34,195.70 271.22,195.06 273.09,194.46 274.96,193.90 276.83,193.37 278.70,192.87 280.58,192.40 282.45,191.97 284.32,191.56 286.19,191.17 288.06,190.81 289.94,190.47 291.81,190.16 293.68,189.86 295.55,189.58 297.42,189.32 299.30,189.08 301.17,188.85 303.04,188.64 304.91,188.43 306.78,188.25 308.66,188.07 310.53,187.91 312.40,187.75 314.27,187.61 316.14,187.47 318.02,187.34 319.89,187.23 321.76,187.12 323.63,187.01 325.50,186.91 327.38,186.82 329.25,186.74 331.12,186.66 332.99,186.58 334.86,186.51 336.74,186.45 338.61,186.39 340.48,186.33" fill="none" stroke="#f39a1e" stroke-width="0.9"/><circle cx="172.00" cy="354.00" r="1.4" fill="none" stroke="#f39a1e" stroke-width="0.7"/><circle cx="176.68" cy="340.55" r="1.4" fill="none" stroke="#f39a1e" stroke-width="0.7"/><circle cx="181.36" cy="327.29" r="1.4" fill="none" stroke="#f39a1e" stroke-width="0.7"/><circle cx="186.04" cy="314.37" r="1.4" fill="none" stroke="#f39a1e" stroke-width="0.7"/><circle cx="190.72" cy="301.94" r="1.4" fill="none" stroke="#f39a1e" stroke-width="0.7"/><circle cx="195.40" cy="290.14" r="1.4" fill="none" stroke="#f39a1e" stroke-width="0.7"/><circle cx="200.08" cy="279.06" r="1.4" fill="none" stroke="#f39a1e" stroke-width="0.7"/><circle cx="204.76" cy="268.77" r="1.4" fill="none" stroke="#f39a1e" stroke-width="0.7"/><circle cx="209.44" cy="259.31" r="1.4" fill="none" stroke="#f39a1e" stroke-width="0.7"/><circle cx="214.12" cy="250.70" r="1.4" fill="none" stroke="#f39a1e" stroke-width="0.7"/><circle cx="218.80" cy="242.93" r="1.4" fill="none" stroke="#f39a1e" stroke-width="0.7"/><circle cx="223.48" cy="235.96" r="1.4" fill="none" stroke="#f39a1e" stroke-width="0.7"/><circle cx="228.16" cy="229.77" r="1.4" fill="none" stroke="#f39a1e" stroke-width="0.7"/><circle cx="232.84" cy="224.29" r="1.4" fill="none" stroke="#f39a1e" stroke-width="0.7"/><circle cx="237.52" cy="219.47" r="1.4" fill="none" stroke="#f39a1e" stroke-width="0.7"/><circle cx="242.20" cy="215.25" r="1.4" fill="none" stroke="#f39a1e" stroke-width="0.7"/><circle cx="246.88" cy="211.57" r="1.4" fill="none" stroke="#f39a1e" stroke-width="0.7"/><circle cx="251.56" cy="208.38" r="1.4" fill="none" stroke="#f39a1e" stroke-width="0.7"/><circle cx="256.24" cy="205.61" r="1.4" fill="none" stroke="#f39a1e" stroke-width="0.7"/><circle cx="260.92" cy="203.22" r="1.4" fill="none" stroke="#f39a1e" stroke-width="0.7"/><circle cx="265.60" cy="201.17" r="1.4" fill="none" stroke="#f39a1e" stroke-width="0.7"/><circle cx="270.28" cy="199.40" r="1.4" fill="none" stroke="#f39a1e" stroke-width="0.7"/><circle cx="274.96" cy="197.88" r="1.4" fill="none" stroke="#f39a1e" stroke-width="0.7"/><circle cx="279.64" cy="196.59" r="1.4" fill="none" stroke="#f39a1e" stroke-width="0.7"/><circle cx="284.32" cy="195.47" r="1.4" fill="none" stroke="#f39a1e" stroke-width="0.7"/><circle cx="289.00" cy="194.52" r="1.4" fill="none" stroke="#f39a1e" stroke-width="0.7"/><circle cx="293.68" cy="193.71" r="1.4" fill="none" stroke="#f39a1e" stroke-width="0.7"/><circle cx="298.36" cy="193.02" r="1.4" fill="none" stroke="#f39a1e" stroke-width="0.7"/><circle cx="303.04" cy="192.43" r="1.4" fill="none" stroke="#f39a1e" stroke-width="0.7"/><circle cx="307.72" cy="191.93" r="1.4" fill="none" stroke="#f39a1e" stroke-width="0.7"/><circle cx="312.40" cy="191.50" r="1.4" fill="none" stroke="#f39a1e" stroke-width="0.7"/><circle cx="317.08" cy="191.13" r="1.4" fill="none" stroke="#f39a1e" stroke-width="0.7"/><circle cx="321.76" cy="190.82" r="1.4" fill="none" stroke="#f39a1e" stroke-width="0.7"/><circle cx="326.44" cy="190.56" r="1.4" fill="none" stroke="#f39a1e" stroke-width="0.7"/><circle cx="331.12" cy="190.34" r="1.4" fill="none" stroke="#f39a1e" stroke-width="0.7"/><circle cx="335.80" cy="190.15" r="1.4" fill="none" stroke="#f39a1e" stroke-width="0.7"/><circle cx="340.48" cy="189.98" r="1.4" fill="none" stroke="#f39a1e" stroke-width="0.7"/><polyline points="172.00,354.00 173.87,348.97 175.74,343.95 177.62,338.94 179.49,333.97 181.36,329.04 183.23,324.17 185.10,319.37 186.98,314.67 188.85,310.07 190.72,305.60 192.59,301.26 194.46,297.07 196.34,293.04 198.21,289.18 200.08,285.50 201.95,282.00 203.82,278.69 205.70,275.57 207.57,272.63 209.44,269.88 211.31,267.32 213.18,264.94 215.06,262.72 216.93,260.68 218.80,258.80 220.67,257.07 222.54,255.48 224.42,254.03 226.29,252.70 228.16,251.50 230.03,250.40 231.90,249.41 233.78,248.51 235.65,247.70 237.52,246.96 239.39,246.30 241.26,245.71 243.14,245.18 245.01,244.70 246.88,244.27 248.75,243.89 250.62,243.54 252.50,243.24 254.37,242.96 256.24,242.72 258.11,242.50 259.98,242.31 261.86,242.14 263.73,241.99 265.60,241.85 267.47,241.73 269.34,241.63 271.22,241.53 273.09,241.45 274.96,241.38 276.83,241.31 278.70,241.25 280.58,241.20 282.45,241.16 284.32,241.12 286.19,241.08 288.06,241.05 289.94,241.02 291.81,241.00 293.68,240.98 295.55,240.96 297.42,240.95 299.30,240.93 301.17,240.92 303.04,240.91 304.91,240.90 306.78,240.89 308.66,240.88 310.53,240.88 312.40,240.87 314.27,240.87 316.14,240.86 318.02,240.86 319.89,240.85 321.76,240.85 323.63,240.85 325.50,240.85 327.38,240.84 329.25,240.84 331.12,240.84 332.99,240.84 334.86,240.84 336.74,240.84 338.61,240.84 340.48,240.84" fill="none" stroke="#2f9e2f" stroke-width="0.9"/><circle cx="172.00" cy="354.00" r="1.4" fill="none" stroke="#2f9e2f" stroke-width="0.7"/><circle cx="176.68" cy="341.73" r="1.4" fill="none" stroke="#2f9e2f" stroke-width="0.7"/><circle cx="181.36" cy="329.60" r="1.4" fill="none" stroke="#2f9e2f" stroke-width="0.7"/><circle cx="186.04" cy="317.82" r="1.4" fill="none" stroke="#2f9e2f" stroke-width="0.7"/><circle cx="190.72" cy="306.61" r="1.4" fill="none" stroke="#2f9e2f" stroke-width="0.7"/><circle cx="195.40" cy="296.21" r="1.4" fill="none" stroke="#2f9e2f" stroke-width="0.7"/><circle cx="200.08" cy="286.78" r="1.4" fill="none" stroke="#2f9e2f" stroke-width="0.7"/><circle cx="204.76" cy="278.43" r="1.4" fill="none" stroke="#2f9e2f" stroke-width="0.7"/><circle cx="209.44" cy="271.20" r="1.4" fill="none" stroke="#2f9e2f" stroke-width="0.7"/><circle cx="214.12" cy="265.08" r="1.4" fill="none" stroke="#2f9e2f" stroke-width="0.7"/><circle cx="218.80" cy="260.00" r="1.4" fill="none" stroke="#2f9e2f" stroke-width="0.7"/><circle cx="223.48" cy="255.85" r="1.4" fill="none" stroke="#2f9e2f" stroke-width="0.7"/><circle cx="228.16" cy="252.51" r="1.4" fill="none" stroke="#2f9e2f" stroke-width="0.7"/><circle cx="232.84" cy="249.87" r="1.4" fill="none" stroke="#2f9e2f" stroke-width="0.7"/><circle cx="237.52" cy="247.80" r="1.4" fill="none" stroke="#2f9e2f" stroke-width="0.7"/><circle cx="242.20" cy="246.19" r="1.4" fill="none" stroke="#2f9e2f" stroke-width="0.7"/><circle cx="246.88" cy="244.95" r="1.4" fill="none" stroke="#2f9e2f" stroke-width="0.7"/><circle cx="251.56" cy="244.00" r="1.4" fill="none" stroke="#2f9e2f" stroke-width="0.7"/><circle cx="256.24" cy="243.28" r="1.4" fill="none" stroke="#2f9e2f" stroke-width="0.7"/><circle cx="260.92" cy="242.74" r="1.4" fill="none" stroke="#2f9e2f" stroke-width="0.7"/><circle cx="265.60" cy="242.34" r="1.4" fill="none" stroke="#2f9e2f" stroke-width="0.7"/><circle cx="270.28" cy="242.04" r="1.4" fill="none" stroke="#2f9e2f" stroke-width="0.7"/><circle cx="274.96" cy="241.81" r="1.4" fill="none" stroke="#2f9e2f" stroke-width="0.7"/><circle cx="279.64" cy="241.64" r="1.4" fill="none" stroke="#2f9e2f" stroke-width="0.7"/><circle cx="284.32" cy="241.52" r="1.4" fill="none" stroke="#2f9e2f" stroke-width="0.7"/><circle cx="289.00" cy="241.43" r="1.4" fill="none" stroke="#2f9e2f" stroke-width="0.7"/><circle cx="293.68" cy="241.36" r="1.4" fill="none" stroke="#2f9e2f" stroke-width="0.7"/><circle cx="298.36" cy="241.32" r="1.4" fill="none" stroke="#2f9e2f" stroke-width="0.7"/><circle cx="303.04" cy="241.28" r="1.4" fill="none" stroke="#2f9e2f" stroke-width="0.7"/><circle cx="307.72" cy="241.25" r="1.4" fill="none" stroke="#2f9e2f" stroke-width="0.7"/><circle cx="312.40" cy="241.24" r="1.4" fill="none" stroke="#2f9e2f" stroke-width="0.7"/><circle cx="317.08" cy="241.22" r="1.4" fill="none" stroke="#2f9e2f" stroke-width="0.7"/><circle cx="321.76" cy="241.21" r="1.4" fill="none" stroke="#2f9e2f" stroke-width="0.7"/><circle cx="326.44" cy="241.21" r="1.4" fill="none" stroke="#2f9e2f" stroke-width="0.7"/><circle cx="331.12" cy="241.20" r="1.4" fill="none" stroke="#2f9e2f" stroke-width="0.7"/><circle cx="335.80" cy="241.20" r="1.4" fill="none" stroke="#2f9e2f" stroke-width="0.7"/><circle cx="340.48" cy="241.19" r="1.4" fill="none" stroke="#2f9e2f" stroke-width="0.7"/><polyline points="172.00,354.00 173.87,351.29 175.74,348.59 177.62,345.88 179.49,343.18 181.36,340.47 183.23,337.77 185.10,335.08 186.98,332.40 188.85,329.73 190.72,327.09 192.59,324.47 194.46,321.90 196.34,319.37 198.21,316.90 200.08,314.50 201.95,312.19 203.82,309.97 205.70,307.87 207.57,305.89 209.44,304.03 211.31,302.32 213.18,300.75 215.06,299.32 216.93,298.04 218.80,296.90 220.67,295.90 222.54,295.03 224.42,294.28 226.29,293.64 228.16,293.10 230.03,292.65 231.90,292.27 233.78,291.96 235.65,291.71 237.52,291.51 239.39,291.35 241.26,291.23 243.14,291.13 245.01,291.05 246.88,290.99 248.75,290.94 250.62,290.91 252.50,290.88 254.37,290.86 256.24,290.85 258.11,290.84 259.98,290.83 261.86,290.82 263.73,290.82 265.60,290.82 267.47,290.82 269.34,290.81 271.22,290.81 273.09,290.81 274.96,290.81 276.83,290.81 278.70,290.81 280.58,290.81 282.45,290.81 284.32,290.81 286.19,290.81 288.06,290.81 289.94,290.81 291.81,290.81 293.68,290.81 295.55,290.81 297.42,290.81 299.30,290.81 301.17,290.81 303.04,290.81 304.91,290.81 306.78,290.81 308.66,290.81 310.53,290.81 312.40,290.81 314.27,290.81 316.14,290.81 318.02,290.81 319.89,290.81 321.76,290.81 323.63,290.81 325.50,290.81 327.38,290.81 329.25,290.81 331.12,290.81 332.99,290.81 334.86,290.81 336.74,290.81 338.61,290.81 340.48,290.81" fill="none" stroke="#b03cb0" stroke-width="0.9"/><circle cx="172.00" cy="354.00" r="1.4" fill="none" stroke="#b03cb0" stroke-width="0.7"/><circle cx="176.68" cy="347.40" r="1.4" fill="none" stroke="#b03cb0" stroke-width="0.7"/><circle cx="181.36" cy="340.81" r="1.4" fill="none" stroke="#b03cb0" stroke-width="0.7"/><circle cx="186.04" cy="334.25" r="1.4" fill="none" stroke="#b03cb0" stroke-width="0.7"/><circle cx="190.72" cy="327.75" r="1.4" fill="none" stroke="#b03cb0" stroke-width="0.7"/><circle cx="195.40" cy="321.43" r="1.4" fill="none" stroke="#b03cb0" stroke-width="0.7"/><circle cx="200.08" cy="315.42" r="1.4" fill="none" stroke="#b03cb0" stroke-width="0.7"/><circle cx="204.76" cy="309.89" r="1.4" fill="none" stroke="#b03cb0" stroke-width="0.7"/><circle cx="209.44" cy="305.02" r="1.4" fill="none" stroke="#b03cb0" stroke-width="0.7"/><circle cx="214.12" cy="300.96" r="1.4" fill="none" stroke="#b03cb0" stroke-width="0.7"/><circle cx="218.80" cy="297.76" r="1.4" fill="none" stroke="#b03cb0" stroke-width="0.7"/><circle cx="223.48" cy="295.39" r="1.4" fill="none" stroke="#b03cb0" stroke-width="0.7"/><circle cx="228.16" cy="293.75" r="1.4" fill="none" stroke="#b03cb0" stroke-width="0.7"/><circle cx="232.84" cy="292.67" r="1.4" fill="none" stroke="#b03cb0" stroke-width="0.7"/><circle cx="237.52" cy="292.00" r="1.4" fill="none" stroke="#b03cb0" stroke-width="0.7"/><circle cx="242.20" cy="291.61" r="1.4" fill="none" stroke="#b03cb0" stroke-width="0.7"/><circle cx="246.88" cy="291.39" r="1.4" fill="none" stroke="#b03cb0" stroke-width="0.7"/><circle cx="251.56" cy="291.28" r="1.4" fill="none" stroke="#b03cb0" stroke-width="0.7"/><circle cx="256.24" cy="291.22" r="1.4" fill="none" stroke="#b03cb0" stroke-width="0.7"/><circle cx="260.92" cy="291.19" r="1.4" fill="none" stroke="#b03cb0" stroke-width="0.7"/><circle cx="265.60" cy="291.18" r="1.4" fill="none" stroke="#b03cb0" stroke-width="0.7"/><circle cx="270.28" cy="291.17" r="1.4" fill="none" stroke="#b03cb0" stroke-width="0.7"/><circle cx="274.96" cy="291.17" r="1.4" fill="none" stroke="#b03cb0" stroke-width="0.7"/><circle cx="279.64" cy="291.17" r="1.4" fill="none" stroke="#b03cb0" stroke-width="0.7"/><circle cx="284.32" cy="291.17" r="1.4" fill="none" stroke="#b03cb0" stroke-width="0.7"/><circle cx="289.00" cy="291.17" r="1.4" fill="none" stroke="#b03cb0" stroke-width="0.7"/><circle cx="293.68" cy="291.17" r="1.4" fill="none" stroke="#b03cb0" stroke-width="0.7"/><circle cx="298.36" cy="291.17" r="1.4" fill="none" stroke="#b03cb0" stroke-width="0.7"/><circle cx="303.04" cy="291.17" r="1.4" fill="none" stroke="#b03cb0" stroke-width="0.7"/><circle cx="307.72" cy="291.17" r="1.4" fill="none" stroke="#b03cb0" stroke-width="0.7"/><circle cx="312.40" cy="291.17" r="1.4" fill="none" stroke="#b03cb0" stroke-width="0.7"/><circle cx="317.08" cy="291.17" r="1.4" fill="none" stroke="#b03cb0" stroke-width="0.7"/><circle cx="321.76" cy="291.17" r="1.4" fill="none" stroke="#b03cb0" stroke-width="0.7"/><circle cx="326.44" cy="291.17" r="1.4" fill="none" stroke="#b03cb0" stroke-width="0.7"/><circle cx="331.12" cy="291.17" r="1.4" fill="none" stroke="#b03cb0" stroke-width="0.7"/><circle cx="335.80" cy="291.17" r="1.4" fill="none" stroke="#b03cb0" stroke-width="0.7"/><circle cx="340.48" cy="291.17" r="1.4" fill="none" stroke="#b03cb0" stroke-width="0.7"/><polyline points="172.00,354.00 173.87,351.39 175.74,348.85 177.62,346.42 179.49,344.17 181.36,342.11 183.23,340.27 185.10,338.65 186.98,337.25 188.85,336.06 190.72,335.05 192.59,334.20 194.46,333.50 196.34,332.92 198.21,332.45 200.08,332.06 201.95,331.75 203.82,331.49 205.70,331.29 207.57,331.12 209.44,330.98 211.31,330.88 213.18,330.79 215.06,330.72 216.93,330.66 218.80,330.62 220.67,330.58 222.54,330.55 224.42,330.53 226.29,330.51 228.16,330.50 230.03,330.49 231.90,330.48 233.78,330.47 235.65,330.46 237.52,330.46 239.39,330.45 241.26,330.45 243.14,330.45 245.01,330.45 246.88,330.44 248.75,330.44 250.62,330.44 252.50,330.44 254.37,330.44 256.24,330.44 258.11,330.44 259.98,330.44 261.86,330.44 263.73,330.44 265.60,330.44 267.47,330.44 269.34,330.44 271.22,330.44 273.09,330.44 274.96,330.44 276.83,330.44 278.70,330.44 280.58,330.44 282.45,330.44 284.32,330.44 286.19,330.44 288.06,330.44 289.94,330.44 291.81,330.44 293.68,330.44 295.55,330.44 297.42,330.44 299.30,330.44 301.17,330.44 303.04,330.44 304.91,330.44 306.78,330.44 308.66,330.44 310.53,330.44 312.40,330.44 314.27,330.44 316.14,330.44 318.02,330.44 319.89,330.44 321.76,330.44 323.63,330.44 325.50,330.44 327.38,330.44 329.25,330.44 331.12,330.44 332.99,330.44 334.86,330.44 336.74,330.44 338.61,330.44 340.48,330.44" fill="none" stroke="#2a3aa8" stroke-width="0.9"/><circle cx="172.00" cy="354.00" r="1.4" fill="none" stroke="#2a3aa8" stroke-width="0.7"/><circle cx="176.68" cy="347.93" r="1.4" fill="none" stroke="#2a3aa8" stroke-width="0.7"/><circle cx="181.36" cy="342.66" r="1.4" fill="none" stroke="#2a3aa8" stroke-width="0.7"/><circle cx="186.04" cy="338.61" r="1.4" fill="none" stroke="#2a3aa8" stroke-width="0.7"/><circle cx="190.72" cy="335.80" r="1.4" fill="none" stroke="#2a3aa8" stroke-width="0.7"/><circle cx="195.40" cy="333.97" r="1.4" fill="none" stroke="#2a3aa8" stroke-width="0.7"/><circle cx="200.08" cy="332.83" r="1.4" fill="none" stroke="#2a3aa8" stroke-width="0.7"/><circle cx="204.76" cy="332.14" r="1.4" fill="none" stroke="#2a3aa8" stroke-width="0.7"/><circle cx="209.44" cy="331.73" r="1.4" fill="none" stroke="#2a3aa8" stroke-width="0.7"/><circle cx="214.12" cy="331.49" r="1.4" fill="none" stroke="#2a3aa8" stroke-width="0.7"/><circle cx="218.80" cy="331.35" r="1.4" fill="none" stroke="#2a3aa8" stroke-width="0.7"/><circle cx="223.48" cy="331.27" r="1.4" fill="none" stroke="#2a3aa8" stroke-width="0.7"/><circle cx="228.16" cy="331.22" r="1.4" fill="none" stroke="#2a3aa8" stroke-width="0.7"/><circle cx="232.84" cy="331.19" r="1.4" fill="none" stroke="#2a3aa8" stroke-width="0.7"/><circle cx="237.52" cy="331.17" r="1.4" fill="none" stroke="#2a3aa8" stroke-width="0.7"/><circle cx="242.20" cy="331.16" r="1.4" fill="none" stroke="#2a3aa8" stroke-width="0.7"/><circle cx="246.88" cy="331.16" r="1.4" fill="none" stroke="#2a3aa8" stroke-width="0.7"/><circle cx="251.56" cy="331.16" r="1.4" fill="none" stroke="#2a3aa8" stroke-width="0.7"/><circle cx="256.24" cy="331.15" r="1.4" fill="none" stroke="#2a3aa8" stroke-width="0.7"/><circle cx="260.92" cy="331.15" r="1.4" fill="none" stroke="#2a3aa8" stroke-width="0.7"/><circle cx="265.60" cy="331.15" r="1.4" fill="none" stroke="#2a3aa8" stroke-width="0.7"/><circle cx="270.28" cy="331.15" r="1.4" fill="none" stroke="#2a3aa8" stroke-width="0.7"/><circle cx="274.96" cy="331.15" r="1.4" fill="none" stroke="#2a3aa8" stroke-width="0.7"/><circle cx="279.64" cy="331.15" r="1.4" fill="none" stroke="#2a3aa8" stroke-width="0.7"/><circle cx="284.32" cy="331.15" r="1.4" fill="none" stroke="#2a3aa8" stroke-width="0.7"/><circle cx="289.00" cy="331.15" r="1.4" fill="none" stroke="#2a3aa8" stroke-width="0.7"/><circle cx="293.68" cy="331.15" r="1.4" fill="none" stroke="#2a3aa8" stroke-width="0.7"/><circle cx="298.36" cy="331.15" r="1.4" fill="none" stroke="#2a3aa8" stroke-width="0.7"/><circle cx="303.04" cy="331.15" r="1.4" fill="none" stroke="#2a3aa8" stroke-width="0.7"/><circle cx="307.72" cy="331.15" r="1.4" fill="none" stroke="#2a3aa8" stroke-width="0.7"/><circle cx="312.40" cy="331.15" r="1.4" fill="none" stroke="#2a3aa8" stroke-width="0.7"/><circle cx="317.08" cy="331.15" r="1.4" fill="none" stroke="#2a3aa8" stroke-width="0.7"/><circle cx="321.76" cy="331.15" r="1.4" fill="none" stroke="#2a3aa8" stroke-width="0.7"/><circle cx="326.44" cy="331.15" r="1.4" fill="none" stroke="#2a3aa8" stroke-width="0.7"/><circle cx="331.12" cy="331.15" r="1.4" fill="none" stroke="#2a3aa8" stroke-width="0.7"/><circle cx="335.80" cy="331.15" r="1.4" fill="none" stroke="#2a3aa8" stroke-width="0.7"/><circle cx="340.48" cy="331.15" r="1.4" fill="none" stroke="#2a3aa8" stroke-width="0.7"/><polyline points="172.00,354.00 173.87,353.34 175.74,352.75 177.62,352.28 179.49,351.93 181.36,351.70 183.23,351.54 185.10,351.45 186.98,351.38 188.85,351.35 190.72,351.32 192.59,351.31 194.46,351.30 196.34,351.29 198.21,351.29 200.08,351.29 201.95,351.29 203.82,351.29 205.70,351.29 207.57,351.29 209.44,351.29 211.31,351.29 213.18,351.29 215.06,351.29 216.93,351.29 218.80,351.29 220.67,351.29 222.54,351.29 224.42,351.29 226.29,351.29 228.16,351.29 230.03,351.29 231.90,351.29 233.78,351.29 235.65,351.29 237.52,351.29 239.39,351.29 241.26,351.29 243.14,351.29 245.01,351.29 246.88,351.29 248.75,351.29 250.62,351.29 252.50,351.29 254.37,351.29 256.24,351.29 258.11,351.29 259.98,351.29 261.86,351.29 263.73,351.29 265.60,351.29 267.47,351.29 269.34,351.29 271.22,351.29 273.09,351.29 274.96,351.29 276.83,351.29 278.70,351.29 280.58,351.29 282.45,351.29 284.32,351.29 286.19,351.29 288.06,351.29 289.94,351.29 291.81,351.29 293.68,351.29 295.55,351.29 297.42,351.29 299.30,351.29 301.17,351.29 303.04,351.29 304.91,351.29 306.78,351.29 308.66,351.29 310.53,351.29 312.40,351.29 314.27,351.29 316.14,351.29 318.02,351.29 319.89,351.29 321.76,351.29 323.63,351.29 325.50,351.29 327.38,351.29 329.25,351.29 331.12,351.29 332.99,351.29 334.86,351.29 336.74,351.29 338.61,351.29 340.48,351.29" fill="none" stroke="#e02a2a" stroke-width="0.9"/><circle cx="172.00" cy="354.00" r="1.4" fill="none" stroke="#e02a2a" stroke-width="0.7"/><circle cx="176.68" cy="352.52" r="1.4" fill="none" stroke="#e02a2a" stroke-width="0.7"/><circle cx="181.36" cy="351.72" r="1.4" fill="none" stroke="#e02a2a" stroke-width="0.7"/><circle cx="186.04" cy="351.42" r="1.4" fill="none" stroke="#e02a2a" stroke-width="0.7"/><circle cx="190.72" cy="351.33" r="1.4" fill="none" stroke="#e02a2a" stroke-width="0.7"/><circle cx="195.40" cy="351.30" r="1.4" fill="none" stroke="#e02a2a" stroke-width="0.7"/><circle cx="200.08" cy="351.29" r="1.4" fill="none" stroke="#e02a2a" stroke-width="0.7"/><circle cx="204.76" cy="351.29" r="1.4" fill="none" stroke="#e02a2a" stroke-width="0.7"/><circle cx="209.44" cy="351.29" r="1.4" fill="none" stroke="#e02a2a" stroke-width="0.7"/><circle cx="214.12" cy="351.29" r="1.4" fill="none" stroke="#e02a2a" stroke-width="0.7"/><circle cx="218.80" cy="351.29" r="1.4" fill="none" stroke="#e02a2a" stroke-width="0.7"/><circle cx="223.48" cy="351.29" r="1.4" fill="none" stroke="#e02a2a" stroke-width="0.7"/><circle cx="228.16" cy="351.29" r="1.4" fill="none" stroke="#e02a2a" stroke-width="0.7"/><circle cx="232.84" cy="351.29" r="1.4" fill="none" stroke="#e02a2a" stroke-width="0.7"/><circle cx="237.52" cy="351.29" r="1.4" fill="none" stroke="#e02a2a" stroke-width="0.7"/><circle cx="242.20" cy="351.29" r="1.4" fill="none" stroke="#e02a2a" stroke-width="0.7"/><circle cx="246.88" cy="351.29" r="1.4" fill="none" stroke="#e02a2a" stroke-width="0.7"/><circle cx="251.56" cy="351.29" r="1.4" fill="none" stroke="#e02a2a" stroke-width="0.7"/><circle cx="256.24" cy="351.29" r="1.4" fill="none" stroke="#e02a2a" stroke-width="0.7"/><circle cx="260.92" cy="351.29" r="1.4" fill="none" stroke="#e02a2a" stroke-width="0.7"/><circle cx="265.60" cy="351.29" r="1.4" fill="none" stroke="#e02a2a" stroke-width="0.7"/><circle cx="270.28" cy="351.29" r="1.4" fill="none" stroke="#e02a2a" stroke-width="0.7"/><circle cx="274.96" cy="351.29" r="1.4" fill="none" stroke="#e02a2a" stroke-width="0.7"/><circle cx="279.64" cy="351.29" r="1.4" fill="none" stroke="#e02a2a" stroke-width="0.7"/><circle cx="284.32" cy="351.29" r="1.4" fill="none" stroke="#e02a2a" stroke-width="0.7"/><circle cx="289.00" cy="351.29" r="1.4" fill="none" stroke="#e02a2a" stroke-width="0.7"/><circle cx="293.68" cy="351.29" r="1.4" fill="none" stroke="#e02a2a" stroke-width="0.7"/><circle cx="298.36" cy="351.29" r="1.4" fill="none" stroke="#e02a2a" stroke-width="0.7"/><circle cx="303.04" cy="351.29" r="1.4" fill="none" stroke="#e02a2a" stroke-width="0.7"/><circle cx="307.72" cy="351.29" r="1.4" fill="none" stroke="#e02a2a" stroke-width="0.7"/><circle cx="312.40" cy="351.29" r="1.4" fill="none" stroke="#e02a2a" stroke-width="0.7"/><circle cx="317.08" cy="351.29" r="1.4" fill="none" stroke="#e02a2a" stroke-width="0.7"/><circle cx="321.76" cy="351.29" r="1.4" fill="none" stroke="#e02a2a" stroke-width="0.7"/><circle cx="326.44" cy="351.29" r="1.4" fill="none" stroke="#e02a2a" stroke-width="0.7"/><circle cx="331.12" cy="351.29" r="1.4" fill="none" stroke="#e02a2a" stroke-width="0.7"/><circle cx="335.80" cy="351.29" r="1.4" fill="none" stroke="#e02a2a" stroke-width="0.7"/><circle cx="340.48" cy="351.29" r="1.4" fill="none" stroke="#e02a2a" stroke-width="0.7"/><rect x="176" y="179" width="46" height="22" fill="#fff"/><path d="M176.5 201 L176.5 179.8 L221 179.8" fill="none" stroke="#222" stroke-width="1.1"/><text transform="translate(178,185.5)" font-size="4.8" font-family="Liberation Sans" fill="#111" stroke="#111" stroke-width="0.25" textLength="40" lengthAdjust="spacingAndGlyphs">W0v0_L0v0_SA0v0</text><text transform="translate(178,189.9)" font-size="4.8" font-family="Liberation Sans" fill="#111" stroke="#111" stroke-width="0.25" textLength="26" lengthAdjust="spacingAndGlyphs">W= 5.000u</text><text transform="translate(178,194.3)" font-size="4.8" font-family="Liberation Sans" fill="#111" stroke="#111" stroke-width="0.25" textLength="26" lengthAdjust="spacingAndGlyphs">L= 1.000u</text><text transform="translate(178,198.7)" font-size="4.8" font-family="Liberation Sans" fill="#111" stroke="#111" stroke-width="0.25" textLength="24" lengthAdjust="spacingAndGlyphs">NF= 1.000</text><text transform="translate(170,178.1) scale(0.86,1)" font-size="7.4" text-anchor="end" font-family="Liberation Sans" fill="#111" stroke="#111" stroke-width="0.2">250</text><text transform="translate(170,213.8) scale(0.86,1)" font-size="7.4" text-anchor="end" font-family="Liberation Sans" fill="#111" stroke="#111" stroke-width="0.2">200</text><text transform="translate(170,249.5) scale(0.86,1)" font-size="7.4" text-anchor="end" font-family="Liberation Sans" fill="#111" stroke="#111" stroke-width="0.2">150</text><text transform="translate(170,285.2) scale(0.86,1)" font-size="7.4" text-anchor="end" font-family="Liberation Sans" fill="#111" stroke="#111" stroke-width="0.2">100</text><text transform="translate(170,320.9) scale(0.86,1)" font-size="7.4" text-anchor="end" font-family="Liberation Sans" fill="#111" stroke="#111" stroke-width="0.2">50</text><text transform="translate(170,356.6) scale(0.86,1)" font-size="7.4" text-anchor="end" font-family="Liberation Sans" fill="#111" stroke="#111" stroke-width="0.2">0</text><text transform="translate(172.0,362) scale(0.86,1)" font-size="7.3" text-anchor="middle" font-family="Liberation Sans" fill="#111" stroke="#111" stroke-width="0.2">0.0</text><text transform="translate(218.8,362) scale(0.86,1)" font-size="7.3" text-anchor="middle" font-family="Liberation Sans" fill="#111" stroke="#111" stroke-width="0.2">0.5</text><text transform="translate(265.6,362) scale(0.86,1)" font-size="7.3" text-anchor="middle" font-family="Liberation Sans" fill="#111" stroke="#111" stroke-width="0.2">1.0</text><text transform="translate(312.4,362) scale(0.86,1)" font-size="7.3" text-anchor="middle" font-family="Liberation Sans" fill="#111" stroke="#111" stroke-width="0.2">1.5</text><text transform="translate(359.2,362) scale(0.86,1)" font-size="7.3" text-anchor="middle" font-family="Liberation Sans" fill="#111" stroke="#111" stroke-width="0.2">2.0</text><text transform="translate(262.5,372) scale(0.86,1)" font-size="8.8" text-anchor="middle" font-family="Liberation Sans" fill="#111" stroke="#111" stroke-width="0.15" xml:space="preserve">vd  [E+0]</text><line x1="219.10" y1="396" x2="219.10" y2="568" stroke="#a9d3f2" stroke-width="0.8" stroke-dasharray="1.5 1"/><line x1="313.70" y1="396" x2="313.70" y2="568" stroke="#a9d3f2" stroke-width="0.8" stroke-dasharray="1.5 1"/><line x1="171.8" y1="543.40" x2="361" y2="543.40" stroke="#a9d3f2" stroke-width="0.8" stroke-dasharray="1.5 1"/><line x1="171.8" y1="518.80" x2="361" y2="518.80" stroke="#a9d3f2" stroke-width="0.8" stroke-dasharray="1.5 1"/><line x1="171.8" y1="494.20" x2="361" y2="494.20" stroke="#a9d3f2" stroke-width="0.8" stroke-dasharray="1.5 1"/><line x1="171.8" y1="469.60" x2="361" y2="469.60" stroke="#a9d3f2" stroke-width="0.8" stroke-dasharray="1.5 1"/><line x1="171.8" y1="445.00" x2="361" y2="445.00" stroke="#a9d3f2" stroke-width="0.8" stroke-dasharray="1.5 1"/><line x1="171.8" y1="420.40" x2="361" y2="420.40" stroke="#a9d3f2" stroke-width="0.8" stroke-dasharray="1.5 1"/><line x1="181.26" y1="396" x2="181.26" y2="399" stroke="#222" stroke-width="1.1"/><line x1="181.26" y1="568" x2="181.26" y2="565" stroke="#222" stroke-width="1.1"/><line x1="190.72" y1="396" x2="190.72" y2="399" stroke="#222" stroke-width="1.1"/><line x1="190.72" y1="568" x2="190.72" y2="565" stroke="#222" stroke-width="1.1"/><line x1="200.18" y1="396" x2="200.18" y2="399" stroke="#222" stroke-width="1.1"/><line x1="200.18" y1="568" x2="200.18" y2="565" stroke="#222" stroke-width="1.1"/><line x1="209.64" y1="396" x2="209.64" y2="399" stroke="#222" stroke-width="1.1"/><line x1="209.64" y1="568" x2="209.64" y2="565" stroke="#222" stroke-width="1.1"/><line x1="219.10" y1="396" x2="219.10" y2="399" stroke="#222" stroke-width="1.1"/><line x1="219.10" y1="568" x2="219.10" y2="565" stroke="#222" stroke-width="1.1"/><line x1="228.56" y1="396" x2="228.56" y2="399" stroke="#222" stroke-width="1.1"/><line x1="228.56" y1="568" x2="228.56" y2="565" stroke="#222" stroke-width="1.1"/><line x1="238.02" y1="396" x2="238.02" y2="399" stroke="#222" stroke-width="1.1"/><line x1="238.02" y1="568" x2="238.02" y2="565" stroke="#222" stroke-width="1.1"/><line x1="247.48" y1="396" x2="247.48" y2="399" stroke="#222" stroke-width="1.1"/><line x1="247.48" y1="568" x2="247.48" y2="565" stroke="#222" stroke-width="1.1"/><line x1="256.94" y1="396" x2="256.94" y2="399" stroke="#222" stroke-width="1.1"/><line x1="256.94" y1="568" x2="256.94" y2="565" stroke="#222" stroke-width="1.1"/><line x1="266.40" y1="396" x2="266.40" y2="399" stroke="#222" stroke-width="1.1"/><line x1="266.40" y1="568" x2="266.40" y2="565" stroke="#222" stroke-width="1.1"/><line x1="275.86" y1="396" x2="275.86" y2="399" stroke="#222" stroke-width="1.1"/><line x1="275.86" y1="568" x2="275.86" y2="565" stroke="#222" stroke-width="1.1"/><line x1="285.32" y1="396" x2="285.32" y2="399" stroke="#222" stroke-width="1.1"/><line x1="285.32" y1="568" x2="285.32" y2="565" stroke="#222" stroke-width="1.1"/><line x1="294.78" y1="396" x2="294.78" y2="399" stroke="#222" stroke-width="1.1"/><line x1="294.78" y1="568" x2="294.78" y2="565" stroke="#222" stroke-width="1.1"/><line x1="304.24" y1="396" x2="304.24" y2="399" stroke="#222" stroke-width="1.1"/><line x1="304.24" y1="568" x2="304.24" y2="565" stroke="#222" stroke-width="1.1"/><line x1="313.70" y1="396" x2="313.70" y2="399" stroke="#222" stroke-width="1.1"/><line x1="313.70" y1="568" x2="313.70" y2="565" stroke="#222" stroke-width="1.1"/><line x1="323.16" y1="396" x2="323.16" y2="399" stroke="#222" stroke-width="1.1"/><line x1="323.16" y1="568" x2="323.16" y2="565" stroke="#222" stroke-width="1.1"/><line x1="332.62" y1="396" x2="332.62" y2="399" stroke="#222" stroke-width="1.1"/><line x1="332.62" y1="568" x2="332.62" y2="565" stroke="#222" stroke-width="1.1"/><line x1="342.08" y1="396" x2="342.08" y2="399" stroke="#222" stroke-width="1.1"/><line x1="342.08" y1="568" x2="342.08" y2="565" stroke="#222" stroke-width="1.1"/><line x1="351.54" y1="396" x2="351.54" y2="399" stroke="#222" stroke-width="1.1"/><line x1="351.54" y1="568" x2="351.54" y2="565" stroke="#222" stroke-width="1.1"/><line x1="171.8" y1="561.85" x2="175.0" y2="561.85" stroke="#222" stroke-width="1.1"/><line x1="361" y1="561.85" x2="358" y2="561.85" stroke="#222" stroke-width="1.1"/><line x1="171.8" y1="555.70" x2="175.0" y2="555.70" stroke="#222" stroke-width="1.1"/><line x1="361" y1="555.70" x2="358" y2="555.70" stroke="#222" stroke-width="1.1"/><line x1="171.8" y1="549.55" x2="175.0" y2="549.55" stroke="#222" stroke-width="1.1"/><line x1="361" y1="549.55" x2="358" y2="549.55" stroke="#222" stroke-width="1.1"/><line x1="171.8" y1="543.40" x2="175.0" y2="543.40" stroke="#222" stroke-width="1.1"/><line x1="361" y1="543.40" x2="358" y2="543.40" stroke="#222" stroke-width="1.1"/><line x1="171.8" y1="537.25" x2="175.0" y2="537.25" stroke="#222" stroke-width="1.1"/><line x1="361" y1="537.25" x2="358" y2="537.25" stroke="#222" stroke-width="1.1"/><line x1="171.8" y1="531.10" x2="175.0" y2="531.10" stroke="#222" stroke-width="1.1"/><line x1="361" y1="531.10" x2="358" y2="531.10" stroke="#222" stroke-width="1.1"/><line x1="171.8" y1="524.95" x2="175.0" y2="524.95" stroke="#222" stroke-width="1.1"/><line x1="361" y1="524.95" x2="358" y2="524.95" stroke="#222" stroke-width="1.1"/><line x1="171.8" y1="518.80" x2="175.0" y2="518.80" stroke="#222" stroke-width="1.1"/><line x1="361" y1="518.80" x2="358" y2="518.80" stroke="#222" stroke-width="1.1"/><line x1="171.8" y1="512.65" x2="175.0" y2="512.65" stroke="#222" stroke-width="1.1"/><line x1="361" y1="512.65" x2="358" y2="512.65" stroke="#222" stroke-width="1.1"/><line x1="171.8" y1="506.50" x2="175.0" y2="506.50" stroke="#222" stroke-width="1.1"/><line x1="361" y1="506.50" x2="358" y2="506.50" stroke="#222" stroke-width="1.1"/><line x1="171.8" y1="500.35" x2="175.0" y2="500.35" stroke="#222" stroke-width="1.1"/><line x1="361" y1="500.35" x2="358" y2="500.35" stroke="#222" stroke-width="1.1"/><line x1="171.8" y1="494.20" x2="175.0" y2="494.20" stroke="#222" stroke-width="1.1"/><line x1="361" y1="494.20" x2="358" y2="494.20" stroke="#222" stroke-width="1.1"/><line x1="171.8" y1="488.05" x2="175.0" y2="488.05" stroke="#222" stroke-width="1.1"/><line x1="361" y1="488.05" x2="358" y2="488.05" stroke="#222" stroke-width="1.1"/><line x1="171.8" y1="481.90" x2="175.0" y2="481.90" stroke="#222" stroke-width="1.1"/><line x1="361" y1="481.90" x2="358" y2="481.90" stroke="#222" stroke-width="1.1"/><line x1="171.8" y1="475.75" x2="175.0" y2="475.75" stroke="#222" stroke-width="1.1"/><line x1="361" y1="475.75" x2="358" y2="475.75" stroke="#222" stroke-width="1.1"/><line x1="171.8" y1="469.60" x2="175.0" y2="469.60" stroke="#222" stroke-width="1.1"/><line x1="361" y1="469.60" x2="358" y2="469.60" stroke="#222" stroke-width="1.1"/><line x1="171.8" y1="463.45" x2="175.0" y2="463.45" stroke="#222" stroke-width="1.1"/><line x1="361" y1="463.45" x2="358" y2="463.45" stroke="#222" stroke-width="1.1"/><line x1="171.8" y1="457.30" x2="175.0" y2="457.30" stroke="#222" stroke-width="1.1"/><line x1="361" y1="457.30" x2="358" y2="457.30" stroke="#222" stroke-width="1.1"/><line x1="171.8" y1="451.15" x2="175.0" y2="451.15" stroke="#222" stroke-width="1.1"/><line x1="361" y1="451.15" x2="358" y2="451.15" stroke="#222" stroke-width="1.1"/><line x1="171.8" y1="445.00" x2="175.0" y2="445.00" stroke="#222" stroke-width="1.1"/><line x1="361" y1="445.00" x2="358" y2="445.00" stroke="#222" stroke-width="1.1"/><line x1="171.8" y1="438.85" x2="175.0" y2="438.85" stroke="#222" stroke-width="1.1"/><line x1="361" y1="438.85" x2="358" y2="438.85" stroke="#222" stroke-width="1.1"/><line x1="171.8" y1="432.70" x2="175.0" y2="432.70" stroke="#222" stroke-width="1.1"/><line x1="361" y1="432.70" x2="358" y2="432.70" stroke="#222" stroke-width="1.1"/><line x1="171.8" y1="426.55" x2="175.0" y2="426.55" stroke="#222" stroke-width="1.1"/><line x1="361" y1="426.55" x2="358" y2="426.55" stroke="#222" stroke-width="1.1"/><line x1="171.8" y1="420.40" x2="175.0" y2="420.40" stroke="#222" stroke-width="1.1"/><line x1="361" y1="420.40" x2="358" y2="420.40" stroke="#222" stroke-width="1.1"/><line x1="171.8" y1="414.25" x2="175.0" y2="414.25" stroke="#222" stroke-width="1.1"/><line x1="361" y1="414.25" x2="358" y2="414.25" stroke="#222" stroke-width="1.1"/><line x1="171.8" y1="408.10" x2="175.0" y2="408.10" stroke="#222" stroke-width="1.1"/><line x1="361" y1="408.10" x2="358" y2="408.10" stroke="#222" stroke-width="1.1"/><line x1="171.8" y1="401.95" x2="175.0" y2="401.95" stroke="#222" stroke-width="1.1"/><line x1="361" y1="401.95" x2="358" y2="401.95" stroke="#222" stroke-width="1.1"/><rect x="171.8" y="396" width="189.2" height="172" fill="none" stroke="#6a9ee0" stroke-width="1.6"/><line x1="361" y1="396" x2="361" y2="568" stroke="#333" stroke-width="1.4"/><line x1="266.40" y1="396" x2="266.40" y2="568" stroke="#333" stroke-width="1.1"/><polyline points="181.26,565.54 181.73,565.54 182.21,565.54 182.68,565.54 183.15,565.54 183.62,565.54 184.10,565.54 184.57,565.54 185.04,565.54 185.52,565.54 185.99,565.54 186.46,565.54 186.94,565.54 187.41,565.54 187.88,565.54 188.35,565.54 188.83,565.54 189.30,565.54 189.77,565.54 190.25,565.54 190.72,565.54 191.19,565.54 191.67,565.54 192.14,565.54 192.61,565.54 193.08,565.54 193.56,565.54 194.03,565.54 194.50,565.54 194.98,565.54 195.45,565.54 195.92,565.54 196.40,565.54 196.87,565.54 197.34,565.54 197.81,565.54 198.29,565.54 198.76,565.54 199.23,565.54 199.71,565.54 200.18,565.54 200.65,565.54 201.13,565.54 201.60,565.54 202.07,565.54 202.54,565.54 203.02,565.54 203.49,565.54 203.96,565.54 204.44,565.54 204.91,565.54 205.38,565.54 205.86,565.54 206.33,565.54 206.80,565.54 207.27,565.54 207.75,565.54 208.22,565.54 208.69,565.54 209.17,565.54 209.64,565.54 210.11,565.54 210.59,565.54 211.06,565.54 211.53,565.54 212.00,565.54 212.48,565.54 212.95,565.54 213.42,565.54 213.90,565.54 214.37,565.54 214.84,565.54 215.32,565.54 215.79,565.54 216.26,565.54 216.73,565.54 217.21,565.54 217.68,565.54 218.15,565.54 218.63,565.54 219.10,565.54 219.57,565.54 220.05,565.54 220.52,565.54 220.99,565.54 221.46,565.54 221.94,565.54 222.41,565.54 222.88,565.54 223.36,565.54 223.83,565.54 224.30,565.54 224.78,565.54 225.25,565.54 225.72,565.54 226.19,565.54 226.67,565.54 227.14,565.54 227.61,565.54 228.09,565.54 228.56,565.54 229.03,565.54 229.51,565.54 229.98,565.54 230.45,565.54 230.92,565.54 231.40,565.54 231.87,565.54 232.34,565.54 232.82,565.54 233.29,565.54 233.76,565.54 234.24,565.54 234.71,565.54 235.18,565.54 235.65,565.54 236.13,565.54 236.60,565.54 237.07,565.54 237.55,565.54 238.02,565.54 238.49,565.54 238.97,565.54 239.44,565.54 239.91,565.54 240.38,565.54 240.86,565.54 241.33,565.54 241.80,565.54 242.28,565.54 242.75,565.54 243.22,565.54 243.70,565.54 244.17,565.54 244.64,565.54 245.11,565.54 245.59,565.54 246.06,565.54 246.53,565.54 247.01,565.54 247.48,565.54 247.95,565.54 248.43,565.54 248.90,565.54 249.37,565.54 249.84,565.54 250.32,565.54 250.79,565.54 251.26,565.54 251.74,565.54 252.21,565.54 252.68,565.54 253.16,565.54 253.63,565.54 254.10,565.54 254.57,565.54 255.05,565.54 255.52,565.54 255.99,565.54 256.47,565.54 256.94,565.54 257.41,565.54 257.89,565.54 258.36,565.54 258.83,565.54 259.31,565.54 259.78,565.54 260.25,565.54 260.72,565.54 261.20,565.54 261.67,565.54 262.14,565.54 262.62,565.54 263.09,565.54 263.56,565.54 264.03,565.54 264.51,565.54 264.98,565.54 265.45,565.54 265.93,565.54 266.40,565.54 266.87,565.54 267.35,565.54 267.82,565.54 268.29,565.54 268.76,565.54 269.24,565.54 269.71,565.54 270.18,565.54 270.66,565.54 271.13,565.54 271.60,565.54 272.08,565.54 272.55,565.54 273.02,565.54 273.49,565.54 273.97,565.53 274.44,565.51 274.91,565.47 275.39,565.43 275.86,565.38 276.33,565.32 276.81,565.26 277.28,565.20 277.75,565.13 278.22,565.07 278.70,565.00 279.17,564.94 279.64,564.89 280.12,564.84 280.59,564.80 281.06,564.77 281.54,564.73 282.01,564.70 282.48,564.66 282.95,564.63 283.43,564.60 283.90,564.57 284.37,564.54 284.85,564.51 285.32,564.48 285.79,564.45 286.27,564.43 286.74,564.41 287.21,564.39 287.68,564.37 288.16,564.35 288.63,564.34 289.10,564.33 289.58,564.32 290.05,564.31 290.52,564.31 291.00,564.30 291.47,564.30 291.94,564.29 292.41,564.29 292.89,564.28 293.36,564.28 293.83,564.27 294.31,564.27 294.78,564.26 295.25,564.26 295.73,564.26 296.20,564.25 296.67,564.25 297.14,564.24 297.62,564.24 298.09,564.24 298.56,564.23 299.04,564.23 299.51,564.23 299.98,564.22 300.46,564.22 300.93,564.22 301.40,564.21 301.88,564.21 302.35,564.21 302.82,564.20 303.29,564.20 303.77,564.20 304.24,564.19 304.71,564.19 305.19,564.19 305.66,564.19 306.13,564.18 306.60,564.18 307.08,564.18 307.55,564.18 308.02,564.17 308.50,564.17 308.97,564.17 309.44,564.17 309.92,564.16 310.39,564.16 310.86,564.16 311.33,564.16 311.81,564.15 312.28,564.15 312.75,564.15 313.23,564.15 313.70,564.15 314.17,564.14 314.65,564.14 315.12,564.14 315.59,564.14 316.06,564.14 316.54,564.14 317.01,564.13 317.48,564.13 317.96,564.13 318.43,564.13 318.90,564.13 319.38,564.13 319.85,564.13 320.32,564.12 320.79,564.12 321.27,564.12 321.74,564.12 322.21,564.12 322.69,564.12 323.16,564.12 323.63,564.11 324.11,564.11 324.58,564.11 325.05,564.11 325.52,564.11 326.00,564.11 326.47,564.11 326.94,564.11 327.42,564.11 327.89,564.10 328.36,564.10 328.84,564.10 329.31,564.10 329.78,564.10 330.25,564.10 330.73,564.10 331.20,564.10 331.67,564.10 332.15,564.10 332.62,564.10 333.09,564.09 333.57,564.09 334.04,564.09 334.51,564.09 334.98,564.09 335.46,564.09 335.93,564.09 336.40,564.09 336.88,564.09 337.35,564.09 337.82,564.09 338.30,564.09 338.77,564.09 339.24,564.08 339.71,564.08 340.19,564.08 340.66,564.08 341.13,564.08 341.61,564.08 342.08,564.08 342.55,564.08 343.03,564.08 343.50,564.08 343.97,564.08 344.44,564.08 344.92,564.08 345.39,564.08 345.86,564.07 346.34,564.07 346.81,564.07 347.28,564.07 347.76,564.07 348.23,564.07 348.70,564.07 349.17,564.07 349.65,564.07 350.12,564.07 350.59,564.07 351.07,564.06 351.54,564.06" fill="none" stroke="#2f9e2f" stroke-width="0.9"/><circle cx="275.86" cy="565.38" r="1.4" fill="none" stroke="#2f9e2f" stroke-width="0.7"/><circle cx="280.59" cy="564.80" r="1.4" fill="none" stroke="#2f9e2f" stroke-width="0.7"/><circle cx="285.32" cy="564.48" r="1.4" fill="none" stroke="#2f9e2f" stroke-width="0.7"/><circle cx="290.05" cy="564.31" r="1.4" fill="none" stroke="#2f9e2f" stroke-width="0.7"/><circle cx="294.78" cy="564.26" r="1.4" fill="none" stroke="#2f9e2f" stroke-width="0.7"/><circle cx="299.51" cy="564.23" r="1.4" fill="none" stroke="#2f9e2f" stroke-width="0.7"/><circle cx="304.24" cy="564.19" r="1.4" fill="none" stroke="#2f9e2f" stroke-width="0.7"/><circle cx="308.97" cy="564.17" r="1.4" fill="none" stroke="#2f9e2f" stroke-width="0.7"/><circle cx="313.70" cy="564.15" r="1.4" fill="none" stroke="#2f9e2f" stroke-width="0.7"/><circle cx="318.43" cy="564.13" r="1.4" fill="none" stroke="#2f9e2f" stroke-width="0.7"/><circle cx="323.16" cy="564.12" r="1.4" fill="none" stroke="#2f9e2f" stroke-width="0.7"/><circle cx="327.89" cy="564.10" r="1.4" fill="none" stroke="#2f9e2f" stroke-width="0.7"/><circle cx="332.62" cy="564.10" r="1.4" fill="none" stroke="#2f9e2f" stroke-width="0.7"/><circle cx="337.35" cy="564.09" r="1.4" fill="none" stroke="#2f9e2f" stroke-width="0.7"/><circle cx="342.08" cy="564.08" r="1.4" fill="none" stroke="#2f9e2f" stroke-width="0.7"/><circle cx="346.81" cy="564.07" r="1.4" fill="none" stroke="#2f9e2f" stroke-width="0.7"/><circle cx="351.54" cy="564.06" r="1.4" fill="none" stroke="#2f9e2f" stroke-width="0.7"/><polyline points="181.26,565.54 181.73,565.54 182.21,565.54 182.68,565.54 183.15,565.54 183.62,565.54 184.10,565.54 184.57,565.54 185.04,565.54 185.52,565.54 185.99,565.54 186.46,565.54 186.94,565.54 187.41,565.54 187.88,565.54 188.35,565.54 188.83,565.54 189.30,565.54 189.77,565.54 190.25,565.54 190.72,565.54 191.19,565.54 191.67,565.54 192.14,565.54 192.61,565.54 193.08,565.54 193.56,565.54 194.03,565.54 194.50,565.54 194.98,565.54 195.45,565.54 195.92,565.54 196.40,565.54 196.87,565.54 197.34,565.54 197.81,565.54 198.29,565.54 198.76,565.54 199.23,565.54 199.71,565.54 200.18,565.54 200.65,565.54 201.13,565.54 201.60,565.54 202.07,565.54 202.54,565.54 203.02,565.54 203.49,565.54 203.96,565.54 204.44,565.54 204.91,565.54 205.38,565.54 205.86,565.54 206.33,565.54 206.80,565.54 207.27,565.54 207.75,565.54 208.22,565.54 208.69,565.54 209.17,565.54 209.64,565.54 210.11,565.54 210.59,565.54 211.06,565.54 211.53,565.54 212.00,565.54 212.48,565.54 212.95,565.54 213.42,565.54 213.90,565.54 214.37,565.54 214.84,565.54 215.32,565.54 215.79,565.54 216.26,565.54 216.73,565.54 217.21,565.54 217.68,565.54 218.15,565.54 218.63,565.54 219.10,565.54 219.57,565.54 220.05,565.54 220.52,565.54 220.99,565.54 221.46,565.54 221.94,565.54 222.41,565.54 222.88,565.54 223.36,565.54 223.83,565.54 224.30,565.54 224.78,565.54 225.25,565.54 225.72,565.54 226.19,565.54 226.67,565.54 227.14,565.54 227.61,565.54 228.09,565.54 228.56,565.54 229.03,565.54 229.51,565.54 229.98,565.54 230.45,565.54 230.92,565.54 231.40,565.54 231.87,565.54 232.34,565.54 232.82,565.54 233.29,565.54 233.76,565.54 234.24,565.54 234.71,565.54 235.18,565.54 235.65,565.54 236.13,565.54 236.60,565.54 237.07,565.54 237.55,565.54 238.02,565.54 238.49,565.54 238.97,565.54 239.44,565.54 239.91,565.54 240.38,565.54 240.86,565.54 241.33,565.54 241.80,565.54 242.28,565.54 242.75,565.54 243.22,565.54 243.70,565.54 244.17,565.54 244.64,565.54 245.11,565.54 245.59,565.54 246.06,565.54 246.53,565.54 247.01,565.54 247.48,565.54 247.95,565.54 248.43,565.54 248.90,565.54 249.37,565.54 249.84,565.54 250.32,565.54 250.79,565.54 251.26,565.54 251.74,565.54 252.21,565.54 252.68,565.54 253.16,565.54 253.63,565.54 254.10,565.54 254.57,565.54 255.05,565.54 255.52,565.54 255.99,565.54 256.47,565.54 256.94,565.54 257.41,565.54 257.89,565.54 258.36,565.54 258.83,565.54 259.31,565.54 259.78,565.54 260.25,565.54 260.72,565.54 261.20,565.54 261.67,565.54 262.14,565.54 262.62,565.54 263.09,565.54 263.56,565.54 264.03,565.54 264.51,565.54 264.98,565.54 265.45,565.54 265.93,565.54 266.40,565.54 266.87,565.54 267.35,565.54 267.82,565.54 268.29,565.54 268.76,565.54 269.24,565.54 269.71,565.54 270.18,565.54 270.66,565.54 271.13,565.54 271.60,565.54 272.08,565.54 272.55,565.54 273.02,565.54 273.49,565.54 273.97,565.54 274.44,565.54 274.91,565.54 275.39,565.54 275.86,565.54 276.33,565.53 276.81,565.50 277.28,565.46 277.75,565.41 278.22,565.34 278.70,565.25 279.17,565.16 279.64,565.05 280.12,564.93 280.59,564.80 281.06,564.66 281.54,564.49 282.01,564.30 282.48,564.10 282.95,563.89 283.43,563.68 283.90,563.46 284.37,563.25 284.85,563.04 285.32,562.83 285.79,562.63 286.27,562.41 286.74,562.18 287.21,561.96 287.68,561.73 288.16,561.52 288.63,561.32 289.10,561.14 289.58,560.99 290.05,560.87 290.52,560.77 291.00,560.67 291.47,560.59 291.94,560.51 292.41,560.43 292.89,560.36 293.36,560.30 293.83,560.24 294.31,560.18 294.78,560.13 295.25,560.08 295.73,560.04 296.20,559.99 296.67,559.96 297.14,559.92 297.62,559.88 298.09,559.85 298.56,559.82 299.04,559.79 299.51,559.76 299.98,559.73 300.46,559.70 300.93,559.68 301.40,559.66 301.88,559.63 302.35,559.61 302.82,559.60 303.29,559.58 303.77,559.56 304.24,559.55 304.71,559.53 305.19,559.52 305.66,559.51 306.13,559.50 306.60,559.49 307.08,559.48 307.55,559.47 308.02,559.46 308.50,559.46 308.97,559.45 309.44,559.44 309.92,559.44 310.39,559.43 310.86,559.43 311.33,559.42 311.81,559.41 312.28,559.41 312.75,559.40 313.23,559.40 313.70,559.39 314.17,559.38 314.65,559.38 315.12,559.37 315.59,559.36 316.06,559.36 316.54,559.35 317.01,559.34 317.48,559.34 317.96,559.33 318.43,559.33 318.90,559.32 319.38,559.31 319.85,559.31 320.32,559.30 320.79,559.29 321.27,559.29 321.74,559.28 322.21,559.28 322.69,559.27 323.16,559.27 323.63,559.26 324.11,559.25 324.58,559.25 325.05,559.24 325.52,559.24 326.00,559.23 326.47,559.23 326.94,559.22 327.42,559.22 327.89,559.21 328.36,559.21 328.84,559.20 329.31,559.20 329.78,559.19 330.25,559.19 330.73,559.18 331.20,559.18 331.67,559.17 332.15,559.17 332.62,559.16 333.09,559.16 333.57,559.15 334.04,559.15 334.51,559.14 334.98,559.14 335.46,559.13 335.93,559.13 336.40,559.13 336.88,559.12 337.35,559.12 337.82,559.11 338.30,559.11 338.77,559.11 339.24,559.10 339.71,559.10 340.19,559.09 340.66,559.09 341.13,559.09 341.61,559.08 342.08,559.08 342.55,559.08 343.03,559.07 343.50,559.07 343.97,559.07 344.44,559.06 344.92,559.06 345.39,559.06 345.86,559.05 346.34,559.05 346.81,559.05 347.28,559.04 347.76,559.04 348.23,559.04 348.70,559.04 349.17,559.03 349.65,559.03 350.12,559.03 350.59,559.03 351.07,559.02 351.54,559.02" fill="none" stroke="#b03cb0" stroke-width="0.9"/><circle cx="275.86" cy="565.54" r="1.4" fill="none" stroke="#b03cb0" stroke-width="0.7"/><circle cx="280.59" cy="564.80" r="1.4" fill="none" stroke="#b03cb0" stroke-width="0.7"/><circle cx="285.32" cy="562.83" r="1.4" fill="none" stroke="#b03cb0" stroke-width="0.7"/><circle cx="290.05" cy="560.87" r="1.4" fill="none" stroke="#b03cb0" stroke-width="0.7"/><circle cx="294.78" cy="560.13" r="1.4" fill="none" stroke="#b03cb0" stroke-width="0.7"/><circle cx="299.51" cy="559.76" r="1.4" fill="none" stroke="#b03cb0" stroke-width="0.7"/><circle cx="304.24" cy="559.55" r="1.4" fill="none" stroke="#b03cb0" stroke-width="0.7"/><circle cx="308.97" cy="559.45" r="1.4" fill="none" stroke="#b03cb0" stroke-width="0.7"/><circle cx="313.70" cy="559.39" r="1.4" fill="none" stroke="#b03cb0" stroke-width="0.7"/><circle cx="318.43" cy="559.33" r="1.4" fill="none" stroke="#b03cb0" stroke-width="0.7"/><circle cx="323.16" cy="559.27" r="1.4" fill="none" stroke="#b03cb0" stroke-width="0.7"/><circle cx="327.89" cy="559.21" r="1.4" fill="none" stroke="#b03cb0" stroke-width="0.7"/><circle cx="332.62" cy="559.16" r="1.4" fill="none" stroke="#b03cb0" stroke-width="0.7"/><circle cx="337.35" cy="559.12" r="1.4" fill="none" stroke="#b03cb0" stroke-width="0.7"/><circle cx="342.08" cy="559.08" r="1.4" fill="none" stroke="#b03cb0" stroke-width="0.7"/><circle cx="346.81" cy="559.05" r="1.4" fill="none" stroke="#b03cb0" stroke-width="0.7"/><circle cx="351.54" cy="559.02" r="1.4" fill="none" stroke="#b03cb0" stroke-width="0.7"/><polyline points="181.26,565.54 181.73,565.54 182.21,565.54 182.68,565.54 183.15,565.54 183.62,565.54 184.10,565.54 184.57,565.54 185.04,565.54 185.52,565.54 185.99,565.54 186.46,565.54 186.94,565.54 187.41,565.54 187.88,565.54 188.35,565.54 188.83,565.54 189.30,565.54 189.77,565.54 190.25,565.54 190.72,565.54 191.19,565.54 191.67,565.54 192.14,565.54 192.61,565.54 193.08,565.54 193.56,565.54 194.03,565.54 194.50,565.54 194.98,565.54 195.45,565.54 195.92,565.54 196.40,565.54 196.87,565.54 197.34,565.54 197.81,565.54 198.29,565.54 198.76,565.54 199.23,565.54 199.71,565.54 200.18,565.54 200.65,565.54 201.13,565.54 201.60,565.54 202.07,565.54 202.54,565.54 203.02,565.54 203.49,565.54 203.96,565.54 204.44,565.54 204.91,565.54 205.38,565.54 205.86,565.54 206.33,565.54 206.80,565.54 207.27,565.54 207.75,565.54 208.22,565.54 208.69,565.54 209.17,565.54 209.64,565.54 210.11,565.54 210.59,565.54 211.06,565.54 211.53,565.54 212.00,565.54 212.48,565.54 212.95,565.54 213.42,565.54 213.90,565.54 214.37,565.54 214.84,565.54 215.32,565.54 215.79,565.54 216.26,565.54 216.73,565.54 217.21,565.54 217.68,565.54 218.15,565.54 218.63,565.54 219.10,565.54 219.57,565.54 220.05,565.54 220.52,565.54 220.99,565.54 221.46,565.54 221.94,565.54 222.41,565.54 222.88,565.54 223.36,565.54 223.83,565.54 224.30,565.54 224.78,565.54 225.25,565.54 225.72,565.54 226.19,565.54 226.67,565.54 227.14,565.54 227.61,565.54 228.09,565.54 228.56,565.54 229.03,565.54 229.51,565.54 229.98,565.54 230.45,565.54 230.92,565.54 231.40,565.54 231.87,565.54 232.34,565.54 232.82,565.54 233.29,565.54 233.76,565.54 234.24,565.54 234.71,565.54 235.18,565.54 235.65,565.54 236.13,565.54 236.60,565.54 237.07,565.54 237.55,565.54 238.02,565.54 238.49,565.54 238.97,565.54 239.44,565.54 239.91,565.54 240.38,565.54 240.86,565.54 241.33,565.54 241.80,565.54 242.28,565.54 242.75,565.54 243.22,565.54 243.70,565.54 244.17,565.54 244.64,565.54 245.11,565.54 245.59,565.54 246.06,565.54 246.53,565.54 247.01,565.54 247.48,565.54 247.95,565.54 248.43,565.54 248.90,565.54 249.37,565.54 249.84,565.54 250.32,565.54 250.79,565.54 251.26,565.54 251.74,565.54 252.21,565.54 252.68,565.54 253.16,565.54 253.63,565.54 254.10,565.54 254.57,565.54 255.05,565.54 255.52,565.54 255.99,565.54 256.47,565.54 256.94,565.54 257.41,565.54 257.89,565.54 258.36,565.54 258.83,565.54 259.31,565.54 259.78,565.54 260.25,565.54 260.72,565.54 261.20,565.54 261.67,565.54 262.14,565.54 262.62,565.54 263.09,565.54 263.56,565.54 264.03,565.54 264.51,565.54 264.98,565.54 265.45,565.54 265.93,565.54 266.40,565.54 266.87,565.54 267.35,565.54 267.82,565.54 268.29,565.54 268.76,565.54 269.24,565.54 269.71,565.54 270.18,565.54 270.66,565.54 271.13,565.54 271.60,565.54 272.08,565.54 272.55,565.53 273.02,565.51 273.49,565.45 273.97,565.35 274.44,565.17 274.91,564.91 275.39,564.55 275.86,564.06 276.33,563.41 276.81,562.63 277.28,561.75 277.75,560.79 278.22,559.79 278.70,558.78 279.17,557.77 279.64,556.80 280.12,555.90 280.59,555.09 281.06,554.34 281.54,553.62 282.01,552.92 282.48,552.25 282.95,551.61 283.43,551.00 283.90,550.43 284.37,549.89 284.85,549.39 285.32,548.93 285.79,548.53 286.27,548.17 286.74,547.85 287.21,547.57 287.68,547.33 288.16,547.11 288.63,546.91 289.10,546.72 289.58,546.53 290.05,546.35 290.52,546.18 291.00,546.02 291.47,545.89 291.94,545.77 292.41,545.66 292.89,545.56 293.36,545.48 293.83,545.40 294.31,545.32 294.78,545.25 295.25,545.17 295.73,545.10 296.20,545.03 296.67,544.96 297.14,544.90 297.62,544.83 298.09,544.77 298.56,544.71 299.04,544.65 299.51,544.59 299.98,544.53 300.46,544.48 300.93,544.43 301.40,544.38 301.88,544.33 302.35,544.29 302.82,544.25 303.29,544.21 303.77,544.17 304.24,544.14 304.71,544.11 305.19,544.07 305.66,544.04 306.13,544.01 306.60,543.98 307.08,543.95 307.55,543.93 308.02,543.90 308.50,543.87 308.97,543.85 309.44,543.82 309.92,543.80 310.39,543.77 310.86,543.75 311.33,543.73 311.81,543.70 312.28,543.68 312.75,543.66 313.23,543.64 313.70,543.62 314.17,543.60 314.65,543.58 315.12,543.56 315.59,543.54 316.06,543.52 316.54,543.50 317.01,543.48 317.48,543.47 317.96,543.45 318.43,543.43 318.90,543.42 319.38,543.40 319.85,543.38 320.32,543.37 320.79,543.35 321.27,543.34 321.74,543.32 322.21,543.31 322.69,543.29 323.16,543.28 323.63,543.26 324.11,543.25 324.58,543.23 325.05,543.22 325.52,543.20 326.00,543.19 326.47,543.18 326.94,543.16 327.42,543.15 327.89,543.14 328.36,543.12 328.84,543.11 329.31,543.10 329.78,543.08 330.25,543.07 330.73,543.06 331.20,543.05 331.67,543.03 332.15,543.02 332.62,543.01 333.09,543.00 333.57,542.99 334.04,542.97 334.51,542.96 334.98,542.95 335.46,542.94 335.93,542.93 336.40,542.92 336.88,542.91 337.35,542.90 337.82,542.89 338.30,542.88 338.77,542.87 339.24,542.86 339.71,542.85 340.19,542.84 340.66,542.83 341.13,542.82 341.61,542.81 342.08,542.80 342.55,542.79 343.03,542.78 343.50,542.78 343.97,542.77 344.44,542.76 344.92,542.75 345.39,542.74 345.86,542.74 346.34,542.73 346.81,542.72 347.28,542.72 347.76,542.71 348.23,542.70 348.70,542.70 349.17,542.69 349.65,542.68 350.12,542.68 350.59,542.67 351.07,542.67 351.54,542.66" fill="none" stroke="#2a3aa8" stroke-width="0.9"/><circle cx="275.86" cy="564.06" r="1.4" fill="none" stroke="#2a3aa8" stroke-width="0.7"/><circle cx="280.59" cy="555.09" r="1.4" fill="none" stroke="#2a3aa8" stroke-width="0.7"/><circle cx="285.32" cy="548.93" r="1.4" fill="none" stroke="#2a3aa8" stroke-width="0.7"/><circle cx="290.05" cy="546.35" r="1.4" fill="none" stroke="#2a3aa8" stroke-width="0.7"/><circle cx="294.78" cy="545.25" r="1.4" fill="none" stroke="#2a3aa8" stroke-width="0.7"/><circle cx="299.51" cy="544.59" r="1.4" fill="none" stroke="#2a3aa8" stroke-width="0.7"/><circle cx="304.24" cy="544.14" r="1.4" fill="none" stroke="#2a3aa8" stroke-width="0.7"/><circle cx="308.97" cy="543.85" r="1.4" fill="none" stroke="#2a3aa8" stroke-width="0.7"/><circle cx="313.70" cy="543.62" r="1.4" fill="none" stroke="#2a3aa8" stroke-width="0.7"/><circle cx="318.43" cy="543.43" r="1.4" fill="none" stroke="#2a3aa8" stroke-width="0.7"/><circle cx="323.16" cy="543.28" r="1.4" fill="none" stroke="#2a3aa8" stroke-width="0.7"/><circle cx="327.89" cy="543.14" r="1.4" fill="none" stroke="#2a3aa8" stroke-width="0.7"/><circle cx="332.62" cy="543.01" r="1.4" fill="none" stroke="#2a3aa8" stroke-width="0.7"/><circle cx="337.35" cy="542.90" r="1.4" fill="none" stroke="#2a3aa8" stroke-width="0.7"/><circle cx="342.08" cy="542.80" r="1.4" fill="none" stroke="#2a3aa8" stroke-width="0.7"/><circle cx="346.81" cy="542.72" r="1.4" fill="none" stroke="#2a3aa8" stroke-width="0.7"/><circle cx="351.54" cy="542.66" r="1.4" fill="none" stroke="#2a3aa8" stroke-width="0.7"/><polyline points="181.26,565.54 181.73,565.54 182.21,565.54 182.68,565.54 183.15,565.54 183.62,565.54 184.10,565.54 184.57,565.54 185.04,565.54 185.52,565.54 185.99,565.54 186.46,565.54 186.94,565.54 187.41,565.54 187.88,565.54 188.35,565.54 188.83,565.54 189.30,565.54 189.77,565.54 190.25,565.54 190.72,565.54 191.19,565.54 191.67,565.54 192.14,565.54 192.61,565.54 193.08,565.54 193.56,565.54 194.03,565.54 194.50,565.54 194.98,565.54 195.45,565.54 195.92,565.54 196.40,565.54 196.87,565.54 197.34,565.54 197.81,565.54 198.29,565.54 198.76,565.54 199.23,565.54 199.71,565.54 200.18,565.54 200.65,565.54 201.13,565.54 201.60,565.54 202.07,565.54 202.54,565.54 203.02,565.54 203.49,565.54 203.96,565.54 204.44,565.54 204.91,565.54 205.38,565.54 205.86,565.54 206.33,565.54 206.80,565.54 207.27,565.54 207.75,565.54 208.22,565.54 208.69,565.54 209.17,565.54 209.64,565.54 210.11,565.54 210.59,565.54 211.06,565.54 211.53,565.54 212.00,565.54 212.48,565.54 212.95,565.54 213.42,565.54 213.90,565.54 214.37,565.54 214.84,565.54 215.32,565.54 215.79,565.54 216.26,565.54 216.73,565.54 217.21,565.54 217.68,565.54 218.15,565.54 218.63,565.54 219.10,565.54 219.57,565.54 220.05,565.54 220.52,565.54 220.99,565.54 221.46,565.54 221.94,565.54 222.41,565.54 222.88,565.54 223.36,565.54 223.83,565.54 224.30,565.54 224.78,565.54 225.25,565.54 225.72,565.54 226.19,565.54 226.67,565.54 227.14,565.54 227.61,565.54 228.09,565.54 228.56,565.54 229.03,565.54 229.51,565.54 229.98,565.54 230.45,565.54 230.92,565.54 231.40,565.54 231.87,565.54 232.34,565.54 232.82,565.54 233.29,565.54 233.76,565.54 234.24,565.54 234.71,565.54 235.18,565.54 235.65,565.54 236.13,565.54 236.60,565.54 237.07,565.54 237.55,565.54 238.02,565.54 238.49,565.54 238.97,565.54 239.44,565.54 239.91,565.54 240.38,565.54 240.86,565.54 241.33,565.54 241.80,565.54 242.28,565.54 242.75,565.54 243.22,565.54 243.70,565.54 244.17,565.54 244.64,565.54 245.11,565.54 245.59,565.54 246.06,565.54 246.53,565.54 247.01,565.54 247.48,565.54 247.95,565.54 248.43,565.54 248.90,565.54 249.37,565.54 249.84,565.54 250.32,565.54 250.79,565.54 251.26,565.54 251.74,565.54 252.21,565.54 252.68,565.54 253.16,565.54 253.63,565.54 254.10,565.54 254.57,565.54 255.05,565.54 255.52,565.54 255.99,565.54 256.47,565.54 256.94,565.54 257.41,565.54 257.89,565.54 258.36,565.54 258.83,565.54 259.31,565.54 259.78,565.54 260.25,565.54 260.72,565.54 261.20,565.54 261.67,565.54 262.14,565.54 262.62,565.54 263.09,565.54 263.56,565.54 264.03,565.54 264.51,565.54 264.98,565.54 265.45,565.54 265.93,565.54 266.40,565.54 266.87,565.54 267.35,565.54 267.82,565.54 268.29,565.54 268.76,565.54 269.24,565.54 269.71,565.54 270.18,565.54 270.66,565.54 271.13,565.54 271.60,565.53 272.08,565.50 272.55,565.46 273.02,565.36 273.49,565.22 273.97,565.00 274.44,564.69 274.91,564.28 275.39,563.75 275.86,563.08 276.33,562.18 276.81,561.33 277.28,560.44 277.75,559.44 278.22,558.24 278.70,556.77 279.17,554.94 279.64,552.67 280.12,549.87 280.59,546.48 281.06,542.24 281.54,537.13 282.01,531.33 282.48,525.06 282.95,518.50 283.43,511.87 283.90,505.35 284.37,499.16 284.85,493.49 285.32,488.54 285.79,484.18 286.27,480.13 286.74,476.36 287.21,472.86 287.68,469.59 288.16,466.54 288.63,463.69 289.10,461.01 289.58,458.48 290.05,456.07 290.52,453.86 291.00,451.92 291.47,450.20 291.94,448.67 292.41,447.30 292.89,446.05 293.36,444.88 293.83,443.77 294.31,442.67 294.78,441.56 295.25,440.46 295.73,439.45 296.20,438.51 296.67,437.64 297.14,436.83 297.62,436.06 298.09,435.34 298.56,434.64 299.04,433.97 299.51,433.31 299.98,432.69 300.46,432.12 300.93,431.59 301.40,431.10 301.88,430.64 302.35,430.20 302.82,429.78 303.29,429.36 303.77,428.94 304.24,428.52 304.71,428.09 305.19,427.67 305.66,427.26 306.13,426.86 306.60,426.47 307.08,426.09 307.55,425.73 308.02,425.37 308.50,425.03 308.97,424.70 309.44,424.39 309.92,424.09 310.39,423.79 310.86,423.51 311.33,423.24 311.81,422.99 312.28,422.75 312.75,422.52 313.23,422.31 313.70,422.12 314.17,421.94 314.65,421.76 315.12,421.58 315.59,421.41 316.06,421.24 316.54,421.08 317.01,420.91 317.48,420.75 317.96,420.60 318.43,420.45 318.90,420.30 319.38,420.16 319.85,420.02 320.32,419.89 320.79,419.76 321.27,419.63 321.74,419.51 322.21,419.39 322.69,419.28 323.16,419.17 323.63,419.07 324.11,418.96 324.58,418.86 325.05,418.77 325.52,418.67 326.00,418.58 326.47,418.48 326.94,418.39 327.42,418.31 327.89,418.22 328.36,418.14 328.84,418.06 329.31,417.98 329.78,417.90 330.25,417.82 330.73,417.74 331.20,417.67 331.67,417.60 332.15,417.53 332.62,417.46 333.09,417.39 333.57,417.32 334.04,417.26 334.51,417.19 334.98,417.13 335.46,417.07 335.93,417.01 336.40,416.95 336.88,416.89 337.35,416.83 337.82,416.78 338.30,416.72 338.77,416.67 339.24,416.62 339.71,416.56 340.19,416.52 340.66,416.47 341.13,416.42 341.61,416.38 342.08,416.33 342.55,416.29 343.03,416.25 343.50,416.21 343.97,416.17 344.44,416.13 344.92,416.10 345.39,416.06 345.86,416.03 346.34,416.00 346.81,415.97 347.28,415.94 347.76,415.91 348.23,415.88 348.70,415.86 349.17,415.83 349.65,415.81 350.12,415.79 350.59,415.77 351.07,415.74 351.54,415.73" fill="none" stroke="#f0502a" stroke-width="0.9"/><circle cx="271.13" cy="565.54" r="1.4" fill="none" stroke="#f0502a" stroke-width="0.7"/><circle cx="275.86" cy="563.08" r="1.4" fill="none" stroke="#f0502a" stroke-width="0.7"/><circle cx="280.59" cy="546.48" r="1.4" fill="none" stroke="#f0502a" stroke-width="0.7"/><circle cx="285.32" cy="488.54" r="1.4" fill="none" stroke="#f0502a" stroke-width="0.7"/><circle cx="290.05" cy="456.07" r="1.4" fill="none" stroke="#f0502a" stroke-width="0.7"/><circle cx="294.78" cy="441.56" r="1.4" fill="none" stroke="#f0502a" stroke-width="0.7"/><circle cx="299.51" cy="433.31" r="1.4" fill="none" stroke="#f0502a" stroke-width="0.7"/><circle cx="304.24" cy="428.52" r="1.4" fill="none" stroke="#f0502a" stroke-width="0.7"/><circle cx="308.97" cy="424.70" r="1.4" fill="none" stroke="#f0502a" stroke-width="0.7"/><circle cx="313.70" cy="422.12" r="1.4" fill="none" stroke="#f0502a" stroke-width="0.7"/><circle cx="318.43" cy="420.45" r="1.4" fill="none" stroke="#f0502a" stroke-width="0.7"/><circle cx="323.16" cy="419.17" r="1.4" fill="none" stroke="#f0502a" stroke-width="0.7"/><circle cx="327.89" cy="418.22" r="1.4" fill="none" stroke="#f0502a" stroke-width="0.7"/><circle cx="332.62" cy="417.46" r="1.4" fill="none" stroke="#f0502a" stroke-width="0.7"/><circle cx="337.35" cy="416.83" r="1.4" fill="none" stroke="#f0502a" stroke-width="0.7"/><circle cx="342.08" cy="416.33" r="1.4" fill="none" stroke="#f0502a" stroke-width="0.7"/><circle cx="346.81" cy="415.97" r="1.4" fill="none" stroke="#f0502a" stroke-width="0.7"/><circle cx="351.54" cy="415.73" r="1.4" fill="none" stroke="#f0502a" stroke-width="0.7"/><polyline points="181.26,565.79 181.73,565.79 182.21,565.79 182.68,565.79 183.15,565.79 183.62,565.79 184.10,565.79 184.57,565.79 185.04,565.79 185.52,565.79 185.99,565.79 186.46,565.79 186.94,565.79 187.41,565.79 187.88,565.79 188.35,565.79 188.83,565.79 189.30,565.79 189.77,565.79 190.25,565.79 190.72,565.79 191.19,565.79 191.67,565.79 192.14,565.79 192.61,565.79 193.08,565.79 193.56,565.79 194.03,565.79 194.50,565.79 194.98,565.79 195.45,565.79 195.92,565.79 196.40,565.79 196.87,565.79 197.34,565.79 197.81,565.79 198.29,565.79 198.76,565.79 199.23,565.79 199.71,565.79 200.18,565.79 200.65,565.79 201.13,565.79 201.60,565.79 202.07,565.79 202.54,565.79 203.02,565.79 203.49,565.79 203.96,565.79 204.44,565.79 204.91,565.79 205.38,565.79 205.86,565.79 206.33,565.79 206.80,565.79 207.27,565.79 207.75,565.79 208.22,565.79 208.69,565.79 209.17,565.79 209.64,565.79 210.11,565.79 210.59,565.79 211.06,565.79 211.53,565.79 212.00,565.79 212.48,565.79 212.95,565.79 213.42,565.79 213.90,565.79 214.37,565.79 214.84,565.79 215.32,565.79 215.79,565.79 216.26,565.79 216.73,565.79 217.21,565.79 217.68,565.79 218.15,565.79 218.63,565.79 219.10,565.79 219.57,565.79 220.05,565.79 220.52,565.79 220.99,565.79 221.46,565.79 221.94,565.79 222.41,565.79 222.88,565.79 223.36,565.79 223.83,565.79 224.30,565.79 224.78,565.79 225.25,565.79 225.72,565.79 226.19,565.79 226.67,565.79 227.14,565.79 227.61,565.79 228.09,565.79 228.56,565.79 229.03,565.79 229.51,565.79 229.98,565.79 230.45,565.79 230.92,565.79 231.40,565.79 231.87,565.79 232.34,565.79 232.82,565.79 233.29,565.79 233.76,565.79 234.24,565.79 234.71,565.79 235.18,565.79 235.65,565.79 236.13,565.79 236.60,565.79 237.07,565.79 237.55,565.79 238.02,565.79 238.49,565.79 238.97,565.79 239.44,565.79 239.91,565.79 240.38,565.79 240.86,565.79 241.33,565.79 241.80,565.79 242.28,565.79 242.75,565.79 243.22,565.79 243.70,565.79 244.17,565.79 244.64,565.79 245.11,565.79 245.59,565.79 246.06,565.79 246.53,565.79 247.01,565.79 247.48,565.79 247.95,565.79 248.43,565.79 248.90,565.79 249.37,565.79 249.84,565.79 250.32,565.79 250.79,565.79 251.26,565.79 251.74,565.79 252.21,565.79 252.68,565.79 253.16,565.79 253.63,565.79 254.10,565.79 254.57,565.79 255.05,565.79 255.52,565.79 255.99,565.79 256.47,565.79 256.94,565.79 257.41,565.79 257.89,565.79 258.36,565.79 258.83,565.79 259.31,565.79 259.78,565.79 260.25,565.79 260.72,565.79 261.20,565.79 261.67,565.79 262.14,565.79 262.62,565.79 263.09,565.79 263.56,565.79 264.03,565.79 264.51,565.79 264.98,565.79 265.45,565.79 265.93,565.79 266.40,565.79 266.87,565.79 267.35,565.79 267.82,565.79 268.29,565.79 268.76,565.79 269.24,565.79 269.71,565.79 270.18,565.79 270.66,565.79 271.13,565.79 271.60,565.79 272.08,565.79 272.55,565.79 273.02,565.79 273.49,565.79 273.97,565.79 274.44,565.79 274.91,565.79 275.39,565.79 275.86,565.79 276.33,565.79 276.81,565.79 277.28,565.79 277.75,565.79 278.22,565.79 278.70,565.79 279.17,565.79 279.64,565.79 280.12,565.79 280.59,565.79 281.06,565.79 281.54,565.79 282.01,565.79 282.48,565.79 282.95,565.79 283.43,565.79 283.90,565.79 284.37,565.79 284.85,565.79 285.32,565.79 285.79,565.79 286.27,565.79 286.74,565.79 287.21,565.79 287.68,565.79 288.16,565.79 288.63,565.79 289.10,565.79 289.58,565.79 290.05,565.79 290.52,565.79 291.00,565.79 291.47,565.79 291.94,565.79 292.41,565.79 292.89,565.79 293.36,565.79 293.83,565.79 294.31,565.79 294.78,565.79 295.25,565.79 295.73,565.79 296.20,565.79 296.67,565.79 297.14,565.79 297.62,565.79 298.09,565.79 298.56,565.79 299.04,565.79 299.51,565.79 299.98,565.79 300.46,565.79 300.93,565.79 301.40,565.79 301.88,565.79 302.35,565.79 302.82,565.79 303.29,565.79 303.77,565.79 304.24,565.79 304.71,565.79 305.19,565.79 305.66,565.79 306.13,565.79 306.60,565.79 307.08,565.79 307.55,565.79 308.02,565.79 308.50,565.79 308.97,565.79 309.44,565.79 309.92,565.79 310.39,565.79 310.86,565.79 311.33,565.79 311.81,565.79 312.28,565.79 312.75,565.79 313.23,565.79 313.70,565.79 314.17,565.79 314.65,565.79 315.12,565.79 315.59,565.79 316.06,565.79 316.54,565.79 317.01,565.79 317.48,565.79 317.96,565.79 318.43,565.79 318.90,565.79 319.38,565.79 319.85,565.79 320.32,565.79 320.79,565.79 321.27,565.79 321.74,565.79 322.21,565.79 322.69,565.79 323.16,565.79 323.63,565.79 324.11,565.79 324.58,565.79 325.05,565.79 325.52,565.79 326.00,565.79 326.47,565.79 326.94,565.79 327.42,565.79 327.89,565.79 328.36,565.79 328.84,565.79 329.31,565.79 329.78,565.79 330.25,565.79 330.73,565.79 331.20,565.79 331.67,565.79 332.15,565.79 332.62,565.79 333.09,565.79 333.57,565.79 334.04,565.79 334.51,565.79 334.98,565.79 335.46,565.79 335.93,565.79 336.40,565.79 336.88,565.79 337.35,565.79 337.82,565.79 338.30,565.79 338.77,565.79 339.24,565.79 339.71,565.79 340.19,565.79 340.66,565.79 341.13,565.79 341.61,565.79 342.08,565.79 342.55,565.79 343.03,565.79 343.50,565.79 343.97,565.79 344.44,565.79 344.92,565.79 345.39,565.79 345.86,565.79 346.34,565.79 346.81,565.79 347.28,565.79 347.76,565.79 348.23,565.79 348.70,565.79 349.17,565.79 349.65,565.79 350.12,565.79 350.59,565.79 351.07,565.79 351.54,565.79" fill="none" stroke="#eaa81a" stroke-width="0.9"/><circle cx="181.26" cy="565.79" r="1.4" fill="none" stroke="#eaa81a" stroke-width="0.7"/><circle cx="185.99" cy="565.79" r="1.4" fill="none" stroke="#eaa81a" stroke-width="0.7"/><circle cx="190.72" cy="565.79" r="1.4" fill="none" stroke="#eaa81a" stroke-width="0.7"/><circle cx="195.45" cy="565.79" r="1.4" fill="none" stroke="#eaa81a" stroke-width="0.7"/><circle cx="200.18" cy="565.79" r="1.4" fill="none" stroke="#eaa81a" stroke-width="0.7"/><circle cx="204.91" cy="565.79" r="1.4" fill="none" stroke="#eaa81a" stroke-width="0.7"/><circle cx="209.64" cy="565.79" r="1.4" fill="none" stroke="#eaa81a" stroke-width="0.7"/><circle cx="214.37" cy="565.79" r="1.4" fill="none" stroke="#eaa81a" stroke-width="0.7"/><circle cx="219.10" cy="565.79" r="1.4" fill="none" stroke="#eaa81a" stroke-width="0.7"/><circle cx="223.83" cy="565.79" r="1.4" fill="none" stroke="#eaa81a" stroke-width="0.7"/><circle cx="228.56" cy="565.79" r="1.4" fill="none" stroke="#eaa81a" stroke-width="0.7"/><circle cx="233.29" cy="565.79" r="1.4" fill="none" stroke="#eaa81a" stroke-width="0.7"/><circle cx="238.02" cy="565.79" r="1.4" fill="none" stroke="#eaa81a" stroke-width="0.7"/><circle cx="242.75" cy="565.79" r="1.4" fill="none" stroke="#eaa81a" stroke-width="0.7"/><circle cx="247.48" cy="565.79" r="1.4" fill="none" stroke="#eaa81a" stroke-width="0.7"/><circle cx="252.21" cy="565.79" r="1.4" fill="none" stroke="#eaa81a" stroke-width="0.7"/><circle cx="256.94" cy="565.79" r="1.4" fill="none" stroke="#eaa81a" stroke-width="0.7"/><circle cx="261.67" cy="565.79" r="1.4" fill="none" stroke="#eaa81a" stroke-width="0.7"/><circle cx="266.40" cy="565.79" r="1.4" fill="none" stroke="#eaa81a" stroke-width="0.7"/><circle cx="271.13" cy="565.79" r="1.4" fill="none" stroke="#eaa81a" stroke-width="0.7"/><circle cx="275.86" cy="565.79" r="1.4" fill="none" stroke="#eaa81a" stroke-width="0.7"/><circle cx="280.59" cy="565.79" r="1.4" fill="none" stroke="#eaa81a" stroke-width="0.7"/><circle cx="285.32" cy="565.79" r="1.4" fill="none" stroke="#eaa81a" stroke-width="0.7"/><circle cx="290.05" cy="565.79" r="1.4" fill="none" stroke="#eaa81a" stroke-width="0.7"/><circle cx="294.78" cy="565.79" r="1.4" fill="none" stroke="#eaa81a" stroke-width="0.7"/><circle cx="299.51" cy="565.79" r="1.4" fill="none" stroke="#eaa81a" stroke-width="0.7"/><circle cx="304.24" cy="565.79" r="1.4" fill="none" stroke="#eaa81a" stroke-width="0.7"/><circle cx="308.97" cy="565.79" r="1.4" fill="none" stroke="#eaa81a" stroke-width="0.7"/><circle cx="313.70" cy="565.79" r="1.4" fill="none" stroke="#eaa81a" stroke-width="0.7"/><circle cx="318.43" cy="565.79" r="1.4" fill="none" stroke="#eaa81a" stroke-width="0.7"/><circle cx="323.16" cy="565.79" r="1.4" fill="none" stroke="#eaa81a" stroke-width="0.7"/><circle cx="327.89" cy="565.79" r="1.4" fill="none" stroke="#eaa81a" stroke-width="0.7"/><circle cx="332.62" cy="565.79" r="1.4" fill="none" stroke="#eaa81a" stroke-width="0.7"/><circle cx="337.35" cy="565.79" r="1.4" fill="none" stroke="#eaa81a" stroke-width="0.7"/><circle cx="342.08" cy="565.79" r="1.4" fill="none" stroke="#eaa81a" stroke-width="0.7"/><circle cx="346.81" cy="565.79" r="1.4" fill="none" stroke="#eaa81a" stroke-width="0.7"/><circle cx="351.54" cy="565.79" r="1.4" fill="none" stroke="#eaa81a" stroke-width="0.7"/><text transform="translate(170,570.3) scale(0.86,1)" font-size="6.6" text-anchor="end" font-family="Liberation Sans" fill="#111" stroke="#111" stroke-width="0.2">0</text><text transform="translate(170,545.7) scale(0.86,1)" font-size="6.6" text-anchor="end" font-family="Liberation Sans" fill="#111" stroke="#111" stroke-width="0.2">20</text><text transform="translate(170,521.1) scale(0.86,1)" font-size="6.6" text-anchor="end" font-family="Liberation Sans" fill="#111" stroke="#111" stroke-width="0.2">40</text><text transform="translate(170,496.5) scale(0.86,1)" font-size="6.6" text-anchor="end" font-family="Liberation Sans" fill="#111" stroke="#111" stroke-width="0.2">60</text><text transform="translate(170,471.9) scale(0.86,1)" font-size="6.6" text-anchor="end" font-family="Liberation Sans" fill="#111" stroke="#111" stroke-width="0.2">80</text><text transform="translate(170,447.3) scale(0.86,1)" font-size="6.6" text-anchor="end" font-family="Liberation Sans" fill="#111" stroke="#111" stroke-width="0.2">100</text><text transform="translate(170,422.7) scale(0.86,1)" font-size="6.6" text-anchor="end" font-family="Liberation Sans" fill="#111" stroke="#111" stroke-width="0.2">120</text><text transform="translate(170,398.1) scale(0.86,1)" font-size="6.6" text-anchor="end" font-family="Liberation Sans" fill="#111" stroke="#111" stroke-width="0.2">140</text><text transform="translate(171.8,576) scale(0.86,1)" font-size="6.6" text-anchor="middle" font-family="Liberation Sans" fill="#111" stroke="#111" stroke-width="0.2">-2</text><text transform="translate(219.1,576) scale(0.86,1)" font-size="6.6" text-anchor="middle" font-family="Liberation Sans" fill="#111" stroke="#111" stroke-width="0.2">-1</text><text transform="translate(266.4,576) scale(0.86,1)" font-size="6.6" text-anchor="middle" font-family="Liberation Sans" fill="#111" stroke="#111" stroke-width="0.2">0</text><text transform="translate(313.7,576) scale(0.86,1)" font-size="6.6" text-anchor="middle" font-family="Liberation Sans" fill="#111" stroke="#111" stroke-width="0.2">1</text><text transform="translate(361.0,576) scale(0.86,1)" font-size="6.6" text-anchor="middle" font-family="Liberation Sans" fill="#111" stroke="#111" stroke-width="0.2">2</text><text transform="translate(262.5,586) scale(0.86,1)" font-size="8.8" text-anchor="middle" font-family="Liberation Sans" fill="#111" stroke="#111" stroke-width="0.15" xml:space="preserve">vg  [E+0]</text><text transform="translate(256,388.5) scale(0.86,1)" font-size="9.2" text-anchor="middle" font-family="Liberation Sans" fill="#111" stroke="#111" stroke-width="0.2">Cg_sd = f(Vg, device)</text><path d="M388.5 590.5 L388.5 379.5 L420 379.5" fill="none" stroke="#f07050" stroke-width="1"/><text transform="translate(407.5,467.3) scale(0.86,1)" font-size="5.5" font-family="Liberation Sans" fill="#111" stroke="#111" stroke-width="0.2">1E</text><text transform="translate(407.5,479.9) scale(0.86,1)" font-size="5.5" font-family="Liberation Sans" fill="#111" stroke="#111" stroke-width="0.2">1E</text><text transform="translate(407.5,492.5) scale(0.86,1)" font-size="5.5" font-family="Liberation Sans" fill="#111" stroke="#111" stroke-width="0.2">1E</text><text transform="translate(407.5,505.1) scale(0.86,1)" font-size="5.5" font-family="Liberation Sans" fill="#111" stroke="#111" stroke-width="0.2">1E</text><text transform="translate(407.5,517.7) scale(0.86,1)" font-size="5.5" font-family="Liberation Sans" fill="#111" stroke="#111" stroke-width="0.2">1E</text><text transform="translate(407.5,530.3) scale(0.86,1)" font-size="5.5" font-family="Liberation Sans" fill="#111" stroke="#111" stroke-width="0.2">1E</text><text transform="translate(407.5,542.9) scale(0.86,1)" font-size="5.5" font-family="Liberation Sans" fill="#111" stroke="#111" stroke-width="0.2">1E</text><text transform="translate(407.5,555.5) scale(0.86,1)" font-size="5.5" font-family="Liberation Sans" fill="#111" stroke="#111" stroke-width="0.2">1E</text><text transform="translate(407.5,568.1) scale(0.86,1)" font-size="5.5" font-family="Liberation Sans" fill="#111" stroke="#111" stroke-width="0.2">1E</text><rect x="411.5" y="387.0" width="1.6" height="2.2" fill="#222"/><rect x="411.5" y="399.7" width="1.6" height="2.2" fill="#222"/><rect x="411.5" y="412.4" width="1.6" height="2.2" fill="#222"/><rect x="411.5" y="425.1" width="1.6" height="2.2" fill="#222"/><rect x="411.5" y="437.8" width="1.6" height="2.2" fill="#222"/><rect x="411.5" y="450.5" width="1.6" height="2.2" fill="#222"/><clipPath id="smc"><rect x="422" y="175.3" width="178.5" height="178.2"/></clipPath><clipPath id="ucc"><circle cx="511" cy="265" r="81"/></clipPath><g clip-path="url(#smc)"><circle cx="524.50" cy="265" r="67.50" stroke="#6e6e6e" stroke-width="0.7" stroke-dasharray="2.2 0.9" fill="none"/><circle cx="538.00" cy="265" r="54.00" stroke="#6e6e6e" stroke-width="0.7" stroke-dasharray="2.2 0.9" fill="none"/><circle cx="551.50" cy="265" r="40.50" stroke="#6e6e6e" stroke-width="0.7" stroke-dasharray="2.2 0.9" fill="none"/><circle cx="565.00" cy="265" r="27.00" stroke="#6e6e6e" stroke-width="0.7" stroke-dasharray="2.2 0.9" fill="none"/><circle cx="578.50" cy="265" r="13.50" stroke="#6e6e6e" stroke-width="0.7" stroke-dasharray="2.2 0.9" fill="none"/><circle cx="592" cy="-140.00" r="405.00" stroke="#6e6e6e" stroke-width="0.7" stroke-dasharray="2.2 0.9" fill="none"/><circle cx="592" cy="670.00" r="405.00" stroke="#6e6e6e" stroke-width="0.7" stroke-dasharray="2.2 0.9" fill="none"/><circle cx="592" cy="103.00" r="162.00" stroke="#6e6e6e" stroke-width="0.7" stroke-dasharray="2.2 0.9" fill="none"/><circle cx="592" cy="427.00" r="162.00" stroke="#6e6e6e" stroke-width="0.7" stroke-dasharray="2.2 0.9" fill="none"/><circle cx="592" cy="184.00" r="81.00" stroke="#6e6e6e" stroke-width="0.7" stroke-dasharray="2.2 0.9" fill="none"/><circle cx="592" cy="346.00" r="81.00" stroke="#6e6e6e" stroke-width="0.7" stroke-dasharray="2.2 0.9" fill="none"/><circle cx="592" cy="224.50" r="40.50" stroke="#6e6e6e" stroke-width="0.7" stroke-dasharray="2.2 0.9" fill="none"/><circle cx="592" cy="305.50" r="40.50" stroke="#6e6e6e" stroke-width="0.7" stroke-dasharray="2.2 0.9" fill="none"/><circle cx="592" cy="248.80" r="16.20" stroke="#6e6e6e" stroke-width="0.7" stroke-dasharray="2.2 0.9" fill="none"/><circle cx="592" cy="281.20" r="16.20" stroke="#6e6e6e" stroke-width="0.7" stroke-dasharray="2.2 0.9" fill="none"/></g><circle cx="511" cy="265" r="81" fill="none" stroke="#111" stroke-width="1.5"/><line x1="422" y1="264.7" x2="600.5" y2="264.7" stroke="#111" stroke-width="1.4"/><rect x="422" y="175.3" width="178.5" height="178.2" fill="none" stroke="#6a9ad8" stroke-width="1.1"/><rect x="425" y="177" width="47" height="27" fill="#fff"/><path d="M426.5 201 L426.5 178.5 L471 178.5" fill="none" stroke="#111" stroke-width="1.1"/><text transform="translate(428,184) scale(0.86,1)" font-size="4.5" font-family="Liberation Sans" fill="#111" stroke="#111" stroke-width="0.2">W32v0_L00h0_NF8</text><text transform="translate(507,182) scale(0.86,1)" font-size="7.2" text-anchor="middle" font-family="Liberation Sans" fill="#111" stroke="#111" stroke-width="0.2">1.0</text><text transform="translate(566,199) scale(0.86,1)" font-size="7.2" text-anchor="middle" font-family="Liberation Sans" fill="#111" stroke="#111" stroke-width="0.2">2.0</text><text transform="translate(591,232) scale(0.86,1)" font-size="7.2" text-anchor="middle" font-family="Liberation Sans" fill="#111" stroke="#111" stroke-width="0.2">5.0</text><text transform="translate(432,233) scale(0.86,1)" font-size="7.2" text-anchor="middle" font-family="Liberation Sans" fill="#111" stroke="#111" stroke-width="0.2">0.2</text><text transform="translate(432,300) scale(0.86,1)" font-size="7.2" text-anchor="middle" font-family="Liberation Sans" fill="#111" stroke="#111" stroke-width="0.2">-0.2</text><text transform="translate(461,336) scale(0.86,1)" font-size="7.2" text-anchor="middle" font-family="Liberation Sans" fill="#111" stroke="#111" stroke-width="0.2">-0.5</text><text transform="translate(507,350) scale(0.86,1)" font-size="7.2" text-anchor="middle" font-family="Liberation Sans" fill="#111" stroke="#111" stroke-width="0.2">-1.0</text><text transform="translate(567,334) scale(0.86,1)" font-size="7.2" text-anchor="middle" font-family="Liberation Sans" fill="#111" stroke="#111" stroke-width="0.2">-2.0</text><text transform="translate(592,300) scale(0.86,1)" font-size="7.2" text-anchor="middle" font-family="Liberation Sans" fill="#111" stroke="#111" stroke-width="0.2">-5.0</text><g transform="translate(459.5,259) rotate(-90)"><text transform="translate(0,0) scale(0.86,1)" font-size="7.2" text-anchor="middle" font-family="Liberation Sans" fill="#111" stroke="#111" stroke-width="0.2">0.2</text></g><g transform="translate(488,259) rotate(-90)"><text transform="translate(0,0) scale(0.86,1)" font-size="7.2" text-anchor="middle" font-family="Liberation Sans" fill="#111" stroke="#111" stroke-width="0.2">0.5</text></g><g transform="translate(514.5,259) rotate(-90)"><text transform="translate(0,0) scale(0.86,1)" font-size="7.2" text-anchor="middle" font-family="Liberation Sans" fill="#111" stroke="#111" stroke-width="0.2">1.0</text></g><g transform="translate(541.5,259) rotate(-90)"><text transform="translate(0,0) scale(0.86,1)" font-size="7.2" text-anchor="middle" font-family="Liberation Sans" fill="#111" stroke="#111" stroke-width="0.2">2.0</text></g><g transform="translate(569.5,259) rotate(-90)"><text transform="translate(0,0) scale(0.86,1)" font-size="7.2" text-anchor="middle" font-family="Liberation Sans" fill="#111" stroke="#111" stroke-width="0.2">5.0</text></g><path d="M532.50 297.50 A40.70 40.70 0 0 1 522.58 303.00" fill="none" stroke="#1f2fb0" stroke-width="0.8"/><path d="M548.7 265 A40.70 40.70 0 0 1 532.5 297.5" fill="none" stroke="#1f2fb0" stroke-width="2.6"/><path d="M539.50 302.00 A48.76 48.76 0 0 1 532.51 307.00" fill="none" stroke="#2eae2e" stroke-width="0.8"/><path d="M556.5 265 A48.76 48.76 0 0 1 539.5 302" fill="none" stroke="#2eae2e" stroke-width="2.6"/><path d="M537.50 301.00 A46.62 46.62 0 0 1 530.07 306.00" fill="none" stroke="#c03ac0" stroke-width="0.8"/><path d="M554.5 265 A46.62 46.62 0 0 1 537.5 301" fill="none" stroke="#c03ac0" stroke-width="1.6"/><path d="M552 265 A44.32 44.32 0 0 1 535.5 299.5" fill="none" stroke="#e8202a" stroke-width="1.6"/><path d="M553.00 305.00 A55.56 55.56 0 0 1 545.60 311.00" fill="none" stroke="#2eae2e" stroke-width="0.8"/><path d="M570 265 A55.56 55.56 0 0 1 553 305" fill="none" stroke="#2eae2e" stroke-width="2.6"/><path d="M557.50 307.50 A60.36 60.36 0 0 1 551.23 313.00" fill="none" stroke="#c03ac0" stroke-width="0.8"/><path d="M575 265 A60.36 60.36 0 0 1 557.5 307.5" fill="none" stroke="#c03ac0" stroke-width="2.6"/><path d="M562.00 309.00 A62.78 62.78 0 0 1 555.18 315.00" fill="none" stroke="#1f2fb0" stroke-width="0.8"/><path d="M580 265 A62.78 62.78 0 0 1 562 309" fill="none" stroke="#1f2fb0" stroke-width="2.6"/><path d="M570.00 315.00 A68.89 68.89 0 0 1 564.09 320.00" fill="none" stroke="#2eae2e" stroke-width="0.8"/><path d="M591.5 265 A68.89 68.89 0 0 1 570 315" fill="none" stroke="#2eae2e" stroke-width="2.8"/><path d="M592 265 A76.26 76.26 0 0 1 575 313" fill="none" stroke="#c03ac0" stroke-width="1.8"/><path d="M590.8 265 A70.70 70.70 0 0 1 568 317" fill="none" stroke="#1f2fb0" stroke-width="1.3"/><path d="M569.00 316.00 A75.03 75.03 0 0 1 563.90 321.00" fill="none" stroke="#e8202a" stroke-width="0.8"/><path d="M589 265 A75.03 75.03 0 0 1 569 316" fill="none" stroke="#e8202a" stroke-width="1.0"/><path d="M488 266 L486.5 274" stroke="#e82020" stroke-width="2.8" stroke-linecap="round"/><text transform="translate(510,372.5) scale(0.86,1)" font-size="8.9" text-anchor="middle" font-family="Liberation Sans" fill="#111" stroke="#111" stroke-width="0.2">freq</text><g transform="translate(153.5,272.5) rotate(-90)"><text transform="scale(0.86,1)" font-size="8.4" text-anchor="middle" font-family="Liberation Sans" fill="#111" stroke="#111" stroke-width="0.2" xml:space="preserve">id (m/s)  [E-6]</text><text transform="translate(-21.5,4.5) scale(0.86,1)" font-size="6.2" font-family="Liberation Sans" fill="#111" stroke="#111" stroke-width="0.3" xml:space="preserve">o o r</text><line x1="-10" y1="4.0" x2="2.5" y2="4.0" stroke="#222" stroke-width="0.9"/></g><g transform="translate(152.8,488.5) rotate(-90)"><text transform="scale(0.86,1)" font-size="8.4" text-anchor="middle" font-family="Liberation Sans" fill="#111" stroke="#111" stroke-width="0.2" xml:space="preserve">cg_sd (m/s)  [E-12]</text><text transform="translate(-28.5,4.0) scale(0.86,1)" font-size="6.2" font-family="Liberation Sans" fill="#111" stroke="#111" stroke-width="0.3" xml:space="preserve">o o r</text><line x1="-12" y1="3.5" x2="5.5" y2="3.5" stroke="#222" stroke-width="0.9"/></g><g transform="translate(413.3,271.7) rotate(-90)"><text transform="scale(0.86,1)" font-size="8.0" text-anchor="middle" font-family="Liberation Sans" fill="#111" stroke="#111" stroke-width="0.2" xml:space="preserve">S22 (m/s)</text><text transform="translate(-20.3,4.2) scale(0.86,1)" font-size="6.2" font-family="Liberation Sans" fill="#111" stroke="#111" stroke-width="0.3" xml:space="preserve">o o r</text><line x1="-2" y1="3.7" x2="15.7" y2="3.7" stroke="#222" stroke-width="0.9"/></g><g transform="translate(401.3,485) rotate(-90)"><text transform="scale(0.86,1)" font-size="8.2" text-anchor="middle" font-family="Liberation Sans" fill="#111" stroke="#111" stroke-width="0.2" xml:space="preserve">id (m/s)  [LOG]</text><text transform="translate(-23,4.5) scale(0.86,1)" font-size="6.2" font-family="Liberation Sans" fill="#111" stroke="#111" stroke-width="0.3" xml:space="preserve">o o r</text><line x1="-10" y1="4.0" x2="10" y2="4.0" stroke="#222" stroke-width="0.9"/></g></svg><svg class="a" style="left:370px;top:167px;" width="16" height="17" viewBox="0 0 16 17"><rect x="0.7" y="0.7" width="14.6" height="15.6" rx="1.5" fill="#fff" stroke="#222" stroke-width="1.4"/><path d="M0.7 6.2 L10.4 6.2 L10.4 16.3 M0.7 10.4 L5.4 10.4 L5.4 16.3" fill="none" stroke="#222" stroke-width="1.4"/></svg><div class="a" style="left:370px;top:186.5px;width:15.600000000000023px;height:15.5px;border:1.3px solid #222;border-radius:1px;background:#fff;"></div><div class="t" style="left:177.8px;width:400px;text-align:center;top:192.0px;font-size:8.94px;color:#111;letter-spacing:-0.2px;transform:scaleX(0.87);transform-origin:50% 50%;">PO</div><div class="a" style="left:370px;top:202.0px;width:15.600000000000023px;height:14.599999999999994px;border:1.3px solid #222;border-radius:1px;background:#f4a024;"></div><div class="t" style="left:177.8px;width:400px;text-align:center;top:207.0px;font-size:8.94px;color:#111;letter-spacing:-0.2px;transform:scaleX(0.87);transform-origin:50% 50%;">A</div><div class="a" style="left:370px;top:216.6px;width:15.600000000000023px;height:15.0px;border:1.3px solid #222;border-radius:1px;background:#fff;"></div><div class="t" style="left:177.8px;width:400px;text-align:center;top:221.8px;font-size:8.94px;color:#111;letter-spacing:-0.2px;transform:scaleX(0.87);transform-origin:50% 50%;">E</div><svg class="a" style="left:618px;top:167.3px;" width="16" height="17" viewBox="0 0 16 17"><rect x="0.7" y="0.7" width="14.6" height="15.6" rx="1.5" fill="#fff" stroke="#222" stroke-width="1.4"/><path d="M0.7 6.2 L10.4 6.2 L10.4 16.3 M0.7 10.4 L5.4 10.4 L5.4 16.3" fill="none" stroke="#222" stroke-width="1.4"/></svg><div class="a" style="left:618px;top:186.8px;width:15.600000000000023px;height:15.5px;border:1.3px solid #222;border-radius:1px;background:#4a88c8;"></div><div class="t" style="left:425.8px;width:400px;text-align:center;top:192.3px;font-size:8.94px;color:#111;letter-spacing:-0.2px;transform:scaleX(0.87);transform-origin:50% 50%;">PO</div><div class="a" style="left:618px;top:202.3px;width:15.600000000000023px;height:14.599999999999994px;border:1.3px solid #222;border-radius:1px;background:#f4a024;"></div><div class="t" style="left:425.8px;width:400px;text-align:center;top:207.3px;font-size:8.94px;color:#111;letter-spacing:-0.2px;transform:scaleX(0.87);transform-origin:50% 50%;">A</div><div class="a" style="left:618px;top:216.9px;width:15.600000000000023px;height:15.0px;border:1.3px solid #222;border-radius:1px;background:#fff;"></div><div class="t" style="left:425.8px;width:400px;text-align:center;top:222.1px;font-size:8.94px;color:#111;letter-spacing:-0.2px;transform:scaleX(0.87);transform-origin:50% 50%;">E</div><svg class="a" style="left:370px;top:380.5px;" width="16" height="17" viewBox="0 0 16 17"><rect x="0.7" y="0.7" width="14.6" height="15.6" rx="1.5" fill="#fff" stroke="#222" stroke-width="1.4"/><path d="M0.7 6.2 L10.4 6.2 L10.4 16.3 M0.7 10.4 L5.4 10.4 L5.4 16.3" fill="none" stroke="#222" stroke-width="1.4"/></svg><div class="a" style="left:370px;top:400.0px;width:15.600000000000023px;height:15.5px;border:1.3px solid #222;border-radius:1px;background:#4a88c8;"></div><div class="t" style="left:177.8px;width:400px;text-align:center;top:405.5px;font-size:8.94px;color:#111;letter-spacing:-0.2px;transform:scaleX(0.87);transform-origin:50% 50%;">PO</div><div class="a" style="left:370px;top:415.5px;width:15.600000000000023px;height:14.600000000000023px;border:1.3px solid #222;border-radius:1px;background:#f4a024;"></div><div class="t" style="left:177.8px;width:400px;text-align:center;top:420.5px;font-size:8.94px;color:#111;letter-spacing:-0.2px;transform:scaleX(0.87);transform-origin:50% 50%;">A</div><div class="a" style="left:370px;top:430.1px;width:15.600000000000023px;height:15.0px;border:1.3px solid #222;border-radius:1px;background:#fff;"></div><div class="t" style="left:177.8px;width:400px;text-align:center;top:435.3px;font-size:8.94px;color:#111;letter-spacing:-0.2px;transform:scaleX(0.87);transform-origin:50% 50%;">E</div><div class="a" style="left:370px;top:374px;width:15.600000000000023px;height:4px;border:1.3px solid #222;border-top:none;background:#fff;"></div><div class="a" style="left:370px;top:348.5px;width:15.600000000000023px;height:14.5px;border:1.3px solid #222;border-radius:1px;background:#fff;"></div><div class="t" style="left:177.8px;width:400px;text-align:center;top:353.5px;font-size:8.94px;color:#111;letter-spacing:-0.2px;transform:scaleX(0.87);transform-origin:50% 50%;">X</div><div class="a" style="left:370px;top:363.0px;width:15.600000000000023px;height:14.5px;border:1.3px solid #222;border-radius:1px;background:#fff;"></div><div class="t" style="left:177.8px;width:400px;text-align:center;top:368.0px;font-size:8.94px;color:#111;letter-spacing:-0.2px;transform:scaleX(0.87);transform-origin:50% 50%;">Y</div><div class="a" style="left:370px;top:561px;width:15.600000000000023px;height:15px;border:1.3px solid #222;border-radius:1px;background:#fff;"></div><div class="t" style="left:177.8px;width:400px;text-align:center;top:566.2px;font-size:8.94px;color:#111;letter-spacing:-0.2px;transform:scaleX(0.87);transform-origin:50% 50%;">X</div><div class="a" style="left:370px;top:576px;width:15.600000000000023px;height:15px;border:1.3px solid #222;border-radius:1px;background:#fff;"></div><div class="t" style="left:177.8px;width:400px;text-align:center;top:581.2px;font-size:8.94px;color:#111;letter-spacing:-0.2px;transform:scaleX(0.87);transform-origin:50% 50%;">Y</div><div class="a" style="left:635px;top:165px;width:184px;height:428px;background:#f0f0f0;border-left:1px solid #555;"></div><div class="a" style="left:637px;top:178px;width:180px;height:414px;background:#fff;border:1px solid #8c8e94;border-radius:0 3px 0 0;"></div><div class="a" style="left:638px;top:168px;width:45px;height:10px;background:linear-gradient(#f2f2f2,#e3e3e3 50%,#d7d7d7);border:1px solid #8c8e94;border-bottom:none;border-radius:2px 2px 0 0;"></div><div class="t" style="left:460.5px;width:400px;text-align:center;top:171.6px;font-size:6.70px;color:#000;letter-spacing:-0.15px;transform:scaleX(0.87);transform-origin:50% 50%;">Cycle Devices</div><div class="a" style="left:683px;top:168px;width:50px;height:10px;background:linear-gradient(#f2f2f2,#e3e3e3 50%,#d7d7d7);border:1px solid #8c8e94;border-bottom:none;border-radius:2px 2px 0 0;"></div><div class="t" style="left:508.0px;width:400px;text-align:center;top:171.6px;font-size:6.70px;color:#000;letter-spacing:-0.15px;transform:scaleX(0.87);transform-origin:50% 50%;">Cycle Plot Types</div><div class="a" style="left:733px;top:166px;width:42px;height:13px;background:#fff;border:1px solid #8c8e94;border-bottom:none;border-radius:2px 2px 0 0;"></div><div class="t" style="left:554.0px;width:400px;text-align:center;top:170.6px;font-size:6.70px;color:#000;letter-spacing:-0.15px;transform:scaleX(0.87);transform-origin:50% 50%;">All Diagrams</div><div class="a" style="left:645px;top:200px;width:163px;height:136px;border:1px solid #dde3ea;border-radius:3px;"></div><div class="a" style="left:647px;top:197px;width:39px;height:6px;background:#fff;"></div><div class="t" style="left:648.0px;top:198.1px;font-size:6.70px;color:#000;letter-spacing:-0.15px;transform:scaleX(0.87);transform-origin:0 50%;">Bias Conditions</div><div class="t" style="left:652.0px;top:213.1px;font-size:6.70px;color:#000;letter-spacing:-0.15px;transform:scaleX(0.87);transform-origin:0 50%;">Plot Type</div><div class="t" style="left:652.0px;top:220.1px;font-size:6.70px;color:#000;letter-spacing:-0.15px;transform:scaleX(0.87);transform-origin:0 50%;">(Master: Setup)</div><div class="a" style="left:651px;top:231px;width:115px;height:10px;border:1px solid #9a9a9a;border-radius:2px;background:linear-gradient(#f6f6f6,#e8e8e8 50%,#dcdcdc);"></div><div class="t" style="left:654.0px;top:234.1px;font-size:6.70px;color:#000;letter-spacing:-0.15px;transform:scaleX(0.87);transform-origin:0 50%;">DC Idvg: idvg</div><svg class="a" style="left:757px;top:234.0px" width="6" height="4"><path d="M0.5 0.5 L5.5 0.5 L3 3.5 Z" fill="#000"/></svg><div class="t" style="left:773.0px;top:211.1px;font-size:6.70px;color:#000;letter-spacing:-0.3px;transform:scaleX(0.87);transform-origin:0 50%;">Temperature</div><div class="a" style="left:772px;top:216px;width:31px;height:29px;background:#fff;border:1px solid #ababab;"></div><div class="a" style="left:773px;top:217px;width:29px;height:8px;background:linear-gradient(#f4f4f4,#e4e4e4);"></div><div class="t" style="left:774.0px;top:219.6px;font-size:6.70px;color:#000;letter-spacing:-0.15px;transform:scaleX(0.87);transform-origin:0 50%;">27</div><div class="t" style="left:774.0px;top:228.0px;font-size:6.70px;color:#000;letter-spacing:-0.15px;transform:scaleX(0.87);transform-origin:0 50%;">-23</div><div class="t" style="left:774.0px;top:236.4px;font-size:6.70px;color:#000;letter-spacing:-0.15px;transform:scaleX(0.87);transform-origin:0 50%;">127</div><div class="t" style="left:653.0px;top:258.1px;font-size:6.70px;color:#000;letter-spacing:-0.15px;transform:scaleX(0.87);transform-origin:0 50%;">vg</div><div class="a" style="left:651px;top:267px;width:23px;height:10px;border:1px solid #9a9a9a;border-radius:2px;background:linear-gradient(#f4f4f4,#e6e6e6 50%,#d8d8d8);"></div><div class="t" style="left:462.5px;width:400px;text-align:center;top:270.1px;font-size:6.70px;color:#000;letter-spacing:-0.15px;transform:scaleX(0.87);transform-origin:50% 50%;">select</div><div class="t" style="left:680.0px;top:255.1px;font-size:6.70px;color:#000;letter-spacing:-0.15px;transform:scaleX(0.87);transform-origin:0 50%;">vb</div><div class="a" style="left:680px;top:261px;width:28px;height:53px;background:#fff;border:1px solid #ababab;"></div><div class="a" style="left:681px;top:262px;width:26px;height:8px;background:linear-gradient(#f4f4f4,#e4e4e4);"></div><div class="t" style="left:682.0px;top:264.6px;font-size:6.70px;color:#000;letter-spacing:-0.15px;transform:scaleX(0.87);transform-origin:0 50%;">0</div><div class="t" style="left:682.0px;top:273.0px;font-size:6.70px;color:#000;letter-spacing:-0.15px;transform:scaleX(0.87);transform-origin:0 50%;">-0.3</div><div class="t" style="left:682.0px;top:281.4px;font-size:6.70px;color:#000;letter-spacing:-0.15px;transform:scaleX(0.87);transform-origin:0 50%;">-0.6</div><div class="t" style="left:682.0px;top:289.8px;font-size:6.70px;color:#000;letter-spacing:-0.15px;transform:scaleX(0.87);transform-origin:0 50%;">-0.9</div><div class="t" style="left:682.0px;top:298.2px;font-size:6.70px;color:#000;letter-spacing:-0.15px;transform:scaleX(0.87);transform-origin:0 50%;">-1.2</div><div class="t" style="left:714.0px;top:255.1px;font-size:6.70px;color:#000;letter-spacing:-0.15px;transform:scaleX(0.87);transform-origin:0 50%;">vd</div><div class="a" style="left:714px;top:261px;width:28px;height:53px;background:#fff;border:1px solid #ababab;"></div><div class="a" style="left:715px;top:262px;width:26px;height:8px;background:linear-gradient(#f4f4f4,#e4e4e4);"></div><div class="t" style="left:716.0px;top:264.6px;font-size:6.70px;color:#000;letter-spacing:-0.15px;transform:scaleX(0.87);transform-origin:0 50%;">0.05</div><div class="t" style="left:716.0px;top:273.0px;font-size:6.70px;color:#000;letter-spacing:-0.15px;transform:scaleX(0.87);transform-origin:0 50%;">0.4</div><div class="t" style="left:716.0px;top:281.4px;font-size:6.70px;color:#000;letter-spacing:-0.15px;transform:scaleX(0.87);transform-origin:0 50%;">0.75</div><div class="t" style="left:716.0px;top:289.8px;font-size:6.70px;color:#000;letter-spacing:-0.15px;transform:scaleX(0.87);transform-origin:0 50%;">1.1</div><div class="t" style="left:716.0px;top:298.2px;font-size:6.70px;color:#000;letter-spacing:-0.15px;transform:scaleX(0.87);transform-origin:0 50%;">1.45</div><div class="t" style="left:716.0px;top:306.6px;font-size:6.70px;color:#000;letter-spacing:-0.15px;transform:scaleX(0.87);transform-origin:0 50%;">1.8</div><div class="t" style="left:651.0px;top:326.1px;font-size:6.70px;color:#000;letter-spacing:-0.15px;transform:scaleX(0.87);transform-origin:0 50%;">vs = 0</div><div class="a" style="left:645px;top:342px;width:163px;height:251px;border:1px solid #dde3ea;border-radius:3px;border-bottom:none;"></div><div class="a" style="left:647px;top:339px;width:36px;height:6px;background:#fff;"></div><div class="t" style="left:648.0px;top:340.1px;font-size:6.70px;color:#000;letter-spacing:-0.15px;transform:scaleX(0.87);transform-origin:0 50%;">Select Output</div><div class="t" style="left:648.0px;top:349.1px;font-size:6.70px;color:#000;letter-spacing:-0.15px;transform:scaleX(0.87);transform-origin:0 50%;">X-Axis</div><div class="t" style="left:684.0px;top:349.1px;font-size:6.70px;color:#000;letter-spacing:-0.15px;transform:scaleX(0.87);transform-origin:0 50%;">Curve</div><div class="t" style="left:720.0px;top:349.1px;font-size:6.70px;color:#000;letter-spacing:-0.15px;transform:scaleX(0.87);transform-origin:0 50%;">Scaling</div><div class="t" style="left:757.0px;top:349.1px;font-size:6.70px;color:#000;letter-spacing:-0.15px;transform:scaleX(0.87);transform-origin:0 50%;">Math</div><div class="a" style="left:647px;top:355px;width:35px;height:10px;border:1px solid #9a9a9a;border-radius:2px;background:linear-gradient(#f6f6f6,#e8e8e8 50%,#dcdcdc);"></div><div class="t" style="left:650.0px;top:358.1px;font-size:6.70px;color:#000;letter-spacing:-0.15px;transform:scaleX(0.87);transform-origin:0 50%;">vg</div><svg class="a" style="left:673px;top:358.0px" width="6" height="4"><path d="M0.5 0.5 L5.5 0.5 L3 3.5 Z" fill="#000"/></svg><div class="a" style="left:684px;top:355px;width:34px;height:10px;border:1px solid #9a9a9a;border-radius:2px;background:linear-gradient(#f6f6f6,#e8e8e8 50%,#dcdcdc);"></div><div class="t" style="left:687.0px;top:358.1px;font-size:6.70px;color:#000;letter-spacing:-0.15px;transform:scaleX(0.87);transform-origin:0 50%;">Device</div><svg class="a" style="left:709px;top:358.0px" width="6" height="4"><path d="M0.5 0.5 L5.5 0.5 L3 3.5 Z" fill="#000"/></svg><div class="a" style="left:720px;top:355px;width:35px;height:10px;border:1px solid #9a9a9a;border-radius:2px;background:linear-gradient(#f6f6f6,#e8e8e8 50%,#dcdcdc);"></div><div class="t" style="left:723.0px;top:358.1px;font-size:6.70px;color:#000;letter-spacing:-0.15px;transform:scaleX(0.87);transform-origin:0 50%;">Linear</div><svg class="a" style="left:746px;top:358.0px" width="6" height="4"><path d="M0.5 0.5 L5.5 0.5 L3 3.5 Z" fill="#000"/></svg><div class="a" style="left:757px;top:355px;width:49px;height:10px;border:1px solid #9a9a9a;border-radius:2px;background:linear-gradient(#f6f6f6,#e8e8e8 50%,#dcdcdc);"></div><div class="t" style="left:760.0px;top:358.1px;font-size:6.70px;color:#000;letter-spacing:-0.15px;transform:scaleX(0.87);transform-origin:0 50%;">-</div><svg class="a" style="left:797px;top:358.0px" width="6" height="4"><path d="M0.5 0.5 L5.5 0.5 L3 3.5 Z" fill="#000"/></svg><div class="t" style="left:648.0px;top:367.1px;font-size:6.70px;color:#000;letter-spacing:-0.15px;transform:scaleX(0.87);transform-origin:0 50%;">Y-Axis</div><div class="t" style="left:720.0px;top:367.1px;font-size:6.70px;color:#000;letter-spacing:-0.15px;transform:scaleX(0.87);transform-origin:0 50%;">Scaling</div><div class="t" style="left:757.0px;top:367.1px;font-size:6.70px;color:#000;letter-spacing:-0.15px;transform:scaleX(0.87);transform-origin:0 50%;">Math</div><div class="a" style="left:647px;top:374px;width:71px;height:10px;border:1px solid #9a9a9a;border-radius:2px;background:linear-gradient(#f6f6f6,#e8e8e8 50%,#dcdcdc);"></div><div class="t" style="left:650.0px;top:377.1px;font-size:6.70px;color:#000;letter-spacing:-0.15px;transform:scaleX(0.87);transform-origin:0 50%;">cg</div><svg class="a" style="left:709px;top:377.0px" width="6" height="4"><path d="M0.5 0.5 L5.5 0.5 L3 3.5 Z" fill="#000"/></svg><div class="a" style="left:720px;top:374px;width:35px;height:10px;border:1px solid #9a9a9a;border-radius:2px;background:linear-gradient(#f6f6f6,#e8e8e8 50%,#dcdcdc);"></div><div class="t" style="left:723.0px;top:377.1px;font-size:6.70px;color:#000;letter-spacing:-0.15px;transform:scaleX(0.87);transform-origin:0 50%;">Log10</div><svg class="a" style="left:746px;top:377.0px" width="6" height="4"><path d="M0.5 0.5 L5.5 0.5 L3 3.5 Z" fill="#000"/></svg><div class="a" style="left:757px;top:374px;width:49px;height:10px;border:1px solid #9a9a9a;border-radius:2px;background:linear-gradient(#f6f6f6,#e8e8e8 50%,#dcdcdc);"></div><svg class="a" style="left:797px;top:377.0px" width="6" height="4"><path d="M0.5 0.5 L5.5 0.5 L3 3.5 Z" fill="#000"/></svg><div class="a" style="left:413px;top:378px;width:458px;height:219px;border:1px solid rgba(15,25,45,0.85);border-radius:5px 5px 0 0;background:rgba(150,195,235,0.3);box-shadow:inset 0 0 0 1px rgba(220,235,250,0.55);"></div><div class="a" style="left:414px;top:379px;width:456px;height:14px;backdrop-filter:blur(2.5px);-webkit-backdrop-filter:blur(2.5px);background:linear-gradient(90deg,rgba(245,248,252,0.6),rgba(235,242,250,0.5) 35%,rgba(170,210,240,0.55) 60%,rgba(150,195,235,0.5));border-radius:4px 4px 0 0;"></div><div class="a" style="left:417px;top:392px;width:452px;height:202px;border:1px solid rgba(230,240,250,0.8);"></div><svg class="a" style="left:416px;top:381px;" width="10" height="10" viewBox="0 0 10 10"><rect x="0" y="0" width="9" height="9" fill="#d0e0f0" stroke="#557" stroke-width="0.5"/><path d="M1 7 L4 2 L7 6" stroke="#2a7a3a" stroke-width="1.4" fill="none"/><circle cx="6" cy="3" r="1.4" fill="#d04030"/></svg><div class="t" style="left:429.0px;top:383.5px;font-size:6.93px;color:#111;letter-spacing:-0.1px;transform:scaleX(0.87);transform-origin:0 50%;">PSP_Extract/Plot Optimizer:16</div><div class="a" style="left:818px;top:378px;width:50px;height:10px;border:1px solid rgba(30,50,80,0.7);border-top:none;border-radius:0 0 3px 3px;background:linear-gradient(rgba(255,255,255,0.3),rgba(255,255,255,0.05));"></div><div class="a" style="left:843px;top:378px;width:25px;height:10px;background:linear-gradient(#e08070,#c83a2a 50%,#b02818);border-radius:0 0 3px 0;"></div><div class="a" style="left:832px;top:378px;width:1px;height:10px;background:rgba(30,50,80,0.6);"></div><div class="a" style="left:822px;top:382px;width:7px;height:2.5px;background:#fff;border:0.5px solid #334;border-radius:1px;"></div><div class="a" style="left:835.5px;top:380px;width:5.0px;height:5px;border:1.4px solid #fff;border-radius:1px;"></div><div class="t" style="left:655.5px;width:400px;text-align:center;top:380.7px;font-size:7.82px;color:#fff;font-weight:bold;letter-spacing:-0.15px;transform:scaleX(0.87);transform-origin:50% 50%;">X</div><div class="a" style="left:418px;top:393px;width:450px;height:200px;background:#f0f0f0;"></div><div class="a" style="left:418px;top:393px;width:450px;height:10px;background:linear-gradient(#fdfdfe,#e9ecf5 45%,#dce1ee);border-bottom:1px solid #b9c3d6;"></div><div class="t" style="left:422.0px;top:396.1px;font-size:6.70px;color:#111;letter-spacing:-0.15px;transform:scaleX(0.87);transform-origin:0 50%;">File</div><div class="t" style="left:439.0px;top:396.1px;font-size:6.70px;color:#111;letter-spacing:-0.15px;transform:scaleX(0.87);transform-origin:0 50%;">Plots</div><div class="t" style="left:460.0px;top:396.1px;font-size:6.70px;color:#111;letter-spacing:-0.15px;transform:scaleX(0.87);transform-origin:0 50%;">Simulate</div><div class="t" style="left:491.0px;top:396.1px;font-size:6.70px;color:#111;letter-spacing:-0.15px;transform:scaleX(0.87);transform-origin:0 50%;">Optimize</div><div class="t" style="left:523.0px;top:396.1px;font-size:6.70px;color:#111;letter-spacing:-0.15px;transform:scaleX(0.87);transform-origin:0 50%;">Tools</div><div class="t" style="left:544.0px;top:396.1px;font-size:6.70px;color:#111;letter-spacing:-0.15px;transform:scaleX(0.87);transform-origin:0 50%;">Windows</div><div class="t" style="left:577.0px;top:396.1px;font-size:6.70px;color:#111;letter-spacing:-0.15px;transform:scaleX(0.87);transform-origin:0 50%;">Help</div><svg class="a" style="left:424px;top:405px;" width="13" height="12" viewBox="0 0 13 12"><path d="M1 3 L5 3 L6 4 L11 4 L11 10 L1 10 Z" fill="#e9b94a" stroke="#a87a1e" stroke-width="0.6"/><path d="M2 6 L12.5 6 L11 10.5 L1 10.5 Z" fill="#f6d27a" stroke="#b68a2a" stroke-width="0.6"/></svg><svg class="a" style="left:440px;top:404px;" width="12" height="13" viewBox="0 0 12 13"><rect x="0.5" y="0.5" width="11" height="12" fill="#1c3aa0" stroke="#0a1a60" stroke-width="0.6"/><rect x="2.5" y="1" width="7" height="4.5" fill="#fff"/><rect x="3" y="8" width="6" height="4" fill="#c8d0e0"/></svg><svg class="a" style="left:455px;top:404px;" width="13" height="13" viewBox="0 0 13 13"><rect x="0.5" y="0.5" width="12" height="12" fill="#fff" stroke="#aaa" stroke-width="0.5"/><path d="M1 11 C4 3 8 3 12 3 M1 12 C4 5 8 5 12 5 M1 12.5 C4 7 8 7 12 7" stroke="#d03030" stroke-width="1" fill="none"/></svg><div class="a" style="left:471px;top:404px;width:1px;height:14px;background:#d0d0d0;"></div><svg class="a" style="left:474px;top:404px;" width="14" height="14" viewBox="0 0 14 14"><path d="M2 1 L2 12" stroke="#c02020" stroke-width="1"/><rect x="1" y="7" width="12" height="6" fill="#a8c8e8" stroke="#456" stroke-width="0.5"/><path d="M4 2 C8 2 10 4 11 7" stroke="#333" stroke-width="0.8" fill="none"/></svg><svg class="a" style="left:489px;top:403px;" width="14" height="15" viewBox="0 0 14 15"><path d="M7 1 L2 12 L12 12 Z" fill="none" stroke="#2a5ab8" stroke-width="0.9"/><path d="M1 8 L13 8 M0.5 11 L13.5 11 M0 13.5 L14 13.5" stroke="#2a5ab8" stroke-width="1.2"/><circle cx="7" cy="4" r="1.5" fill="#30a030"/></svg><svg class="a" style="left:505px;top:403px;" width="14" height="15" viewBox="0 0 14 15"><rect x="3" y="2" width="8" height="9" fill="#4a80d0" stroke="#224" stroke-width="0.6"/><path d="M1 13 L13 13 M2 11 L2 14 M12 11 L12 14" stroke="#333" stroke-width="1"/><rect x="5" y="4" width="4" height="4" fill="#cfe0f8"/></svg><svg class="a" style="left:522px;top:403px;" width="14" height="15" viewBox="0 0 14 15"><path d="M2 13 L12 13 L10 8 L4 8 Z" fill="#ccc" stroke="#999" stroke-width="0.6"/><path d="M8 5 C8 1 12 1 12 4 L10 6" stroke="#999" stroke-width="1" fill="none"/></svg><div class="a" style="left:539px;top:404px;width:1px;height:14px;background:#d0d0d0;"></div><svg class="a" style="left:541px;top:403px;" width="12" height="15" viewBox="0 0 12 15"><path d="M3 2 L3 8 C3 11 9 11 9 8 L9 2 M6 8 L6 14" stroke="#b06820" stroke-width="1.4" fill="none"/><path d="M0.5 6 L2 4.5 L2 7.5 Z M11.5 6 L10 4.5 L10 7.5 Z" fill="#888"/></svg><svg class="a" style="left:556px;top:403px;" width="12" height="15" viewBox="0 0 12 15"><path d="M3 2 L3 8 C3 11 9 11 9 8 L9 2 M6 8 L6 14" stroke="#b06820" stroke-width="1.4" fill="none"/></svg><div class="a" style="left:570px;top:404px;width:1px;height:14px;background:#d0d0d0;"></div><svg class="a" style="left:572px;top:403px;" width="14" height="15" viewBox="0 0 14 15"><path d="M2 1 L2 6 L5 6" stroke="#c02020" stroke-width="1" fill="none"/><rect x="4" y="7" width="9" height="7" fill="#f0c040" stroke="#8a6010" stroke-width="0.6"/><rect x="6" y="9" width="5" height="3" fill="#fff"/></svg><svg class="a" style="left:588px;top:403px;" width="14" height="15" viewBox="0 0 14 15"><rect x="1" y="3" width="10" height="9" fill="#f0c040" stroke="#8a6010" stroke-width="0.6"/><circle cx="6" cy="7.5" r="3" fill="#d08020"/><path d="M10 11 L13 14" stroke="#c02020" stroke-width="1.2"/></svg><svg class="a" style="left:604px;top:403px;" width="14" height="15" viewBox="0 0 14 15"><path d="M1 6 L13 6 M4 2 L10 12 M10 2 L4 12" stroke="#2060c0" stroke-width="1" fill="none"/><path d="M7 2 L7 10" stroke="#c02020" stroke-width="1.4"/><text transform="translate(1,14.5) scale(0.86,1)" font-size="3" fill="#222" font-family="Liberation Sans">MIN MAX</text></svg><svg class="a" style="left:619px;top:403px;" width="15" height="15" viewBox="0 0 15 15"><rect x="0.5" y="0.5" width="14" height="14" rx="1.5" fill="#fff" stroke="#aaa" stroke-width="0.6"/><text transform="translate(2,6) scale(0.86,1)" font-size="3.8" fill="#111" font-family="Liberation Sans">MIN</text><text transform="translate(2,11) scale(0.86,1)" font-size="3.8" fill="#111" font-family="Liberation Sans">MAX</text><path d="M10 9 C13 9 13 13 10 13" stroke="#2060c0" stroke-width="0.9" fill="none"/></svg><div class="a" style="left:418px;top:421px;width:450px;height:1px;background:#d8d8d8;"></div><div class="t" style="left:428.0px;top:432.1px;font-size:6.70px;color:#000;letter-spacing:-0.15px;transform:scaleX(0.87);transform-origin:0 50%;">Algorithm:</div><div class="a" style="left:456px;top:428px;width:73px;height:11px;border:1px solid #9a9a9a;border-radius:2px;background:linear-gradient(#f6f6f6,#e8e8e8 50%,#dcdcdc);"></div><div class="t" style="left:459.0px;top:431.6px;font-size:6.70px;color:#000;letter-spacing:-0.15px;transform:scaleX(0.87);transform-origin:0 50%;">Levenberg-Marquardt</div><svg class="a" style="left:520px;top:431.5px" width="6" height="4"><path d="M0.5 0.5 L5.5 0.5 L3 3.5 Z" fill="#000"/></svg><div class="t" style="left:543.0px;top:432.1px;font-size:6.70px;color:#000;letter-spacing:-0.15px;transform:scaleX(0.87);transform-origin:0 50%;">Error:</div><div class="a" style="left:560px;top:428px;width:34px;height:11px;border:1px solid #9a9a9a;border-radius:2px;background:linear-gradient(#f6f6f6,#e8e8e8 50%,#dcdcdc);"></div><div class="t" style="left:563.0px;top:431.6px;font-size:6.70px;color:#000;letter-spacing:-0.15px;transform:scaleX(0.87);transform-origin:0 50%;">Relative</div><svg class="a" style="left:585px;top:431.5px" width="6" height="4"><path d="M0.5 0.5 L5.5 0.5 L3 3.5 Z" fill="#000"/></svg><div class="a" style="left:424px;top:453px;width:436px;height:133px;background:#f4f4f4;border:1px solid #8c8e94;"></div><div class="a" style="left:425px;top:443px;width:25px;height:10px;background:linear-gradient(#f2f2f2,#e3e3e3 50%,#d7d7d7);border:1px solid #8c8e94;border-bottom:none;border-radius:2px 2px 0 0;"></div><div class="t" style="left:237.5px;width:400px;text-align:center;top:446.6px;font-size:6.70px;color:#000;letter-spacing:-0.15px;transform:scaleX(0.87);transform-origin:50% 50%;">Inputs</div><div class="a" style="left:493px;top:443px;width:27px;height:10px;background:linear-gradient(#f2f2f2,#e3e3e3 50%,#d7d7d7);border:1px solid #8c8e94;border-bottom:none;border-radius:2px 2px 0 0;"></div><div class="t" style="left:306.5px;width:400px;text-align:center;top:446.6px;font-size:6.70px;color:#000;letter-spacing:-0.15px;transform:scaleX(0.87);transform-origin:50% 50%;">Options</div><div class="a" style="left:451px;top:441px;width:41px;height:13px;background:#f4f4f4;border:1px solid #8c8e94;border-bottom:none;border-radius:2px 2px 0 0;"></div><div class="t" style="left:271.5px;width:400px;text-align:center;top:445.6px;font-size:6.70px;color:#000;letter-spacing:-0.15px;transform:scaleX(0.87);transform-origin:50% 50%;">Parameters</div><div class="t" style="left:433.0px;top:463.1px;font-size:6.70px;color:#000;letter-spacing:-0.15px;transform:scaleX(0.87);transform-origin:0 50%;">Insert:</div><div class="a" style="left:431px;top:471px;width:88px;height:11px;background:#fff;border:1px solid #c0c0c0;border-radius:1px;"></div><div class="t" style="left:434.0px;top:474.6px;font-size:6.70px;color:#000;letter-spacing:-0.15px;transform:scaleX(0.87);transform-origin:0 50%;">-- Select from list --</div><svg class="a" style="left:512px;top:475px;" width="6" height="4" viewBox="0 0 6 4"><path d="M0.5 0.5 L5.5 0.5 L3 3.5 Z" fill="#000"/></svg><div class="a" style="left:433px;top:486px;width:41px;height:11px;border:1px solid #9a9a9a;border-radius:2px;background:linear-gradient(#f4f4f4,#e6e6e6 50%,#d8d8d8);"></div><div class="t" style="left:253.5px;width:400px;text-align:center;top:489.6px;font-size:6.70px;color:#000;letter-spacing:-0.15px;transform:scaleX(0.87);transform-origin:50% 50%;">Clear Table</div><div class="a" style="left:476px;top:486px;width:41px;height:11px;border:1px solid #9a9a9a;border-radius:2px;background:linear-gradient(#f4f4f4,#e6e6e6 50%,#d8d8d8);"></div><div class="t" style="left:296.5px;width:400px;text-align:center;top:489.6px;font-size:6.70px;color:#000;letter-spacing:-0.15px;transform:scaleX(0.87);transform-origin:50% 50%;">--&gt;</div><div class="a" style="left:431px;top:500px;width:89px;height:79px;background:#fff;border:1px solid #9a9a9a;"></div><svg class="a" style="left:436px;top:503px;" width="5" height="5" viewBox="0 0 5 5"><path d="M4.5 0.5 L4.5 4.5 L0.5 4.5 Z" fill="#333"/></svg><div class="t" style="left:443.0px;top:503.1px;font-size:6.70px;color:#000;letter-spacing:-0.15px;transform:scaleX(0.87);transform-origin:0 50%;">Parameters</div><svg class="a" style="left:446px;top:511.5px;" width="5" height="5" viewBox="0 0 5 5"><path d="M4.5 0.5 L4.5 4.5 L0.5 4.5 Z" fill="#333"/></svg><div class="t" style="left:453.0px;top:511.6px;font-size:6.70px;color:#000;letter-spacing:-0.15px;transform:scaleX(0.87);transform-origin:0 50%;">PSP_Extract Model</div><svg class="a" style="left:456px;top:519.0px;" width="5" height="7" viewBox="0 0 5 7"><path d="M0.8 0.8 L4 3.5 L0.8 6.2 Z" fill="none" stroke="#909090" stroke-width="0.8"/></svg><div class="t" style="left:463.0px;top:520.1px;font-size:6.70px;color:#000;letter-spacing:-0.15px;transform:scaleX(0.87);transform-origin:0 50%;">Model Control Fla</div><svg class="a" style="left:456px;top:527.5px;" width="5" height="7" viewBox="0 0 5 7"><path d="M0.8 0.8 L4 3.5 L0.8 6.2 Z" fill="none" stroke="#909090" stroke-width="0.8"/></svg><div class="t" style="left:463.0px;top:528.6px;font-size:6.70px;color:#000;letter-spacing:-0.15px;transform:scaleX(0.87);transform-origin:0 50%;">Process Parameter</div><svg class="a" style="left:456px;top:536.0px;" width="5" height="7" viewBox="0 0 5 7"><path d="M0.8 0.8 L4 3.5 L0.8 6.2 Z" fill="none" stroke="#909090" stroke-width="0.8"/></svg><div class="t" style="left:463.0px;top:537.1px;font-size:6.70px;color:#000;letter-spacing:-0.15px;transform:scaleX(0.87);transform-origin:0 50%;">DIBL</div><svg class="a" style="left:456px;top:544.5px;" width="5" height="7" viewBox="0 0 5 7"><path d="M0.8 0.8 L4 3.5 L0.8 6.2 Z" fill="none" stroke="#909090" stroke-width="0.8"/></svg><div class="t" style="left:463.0px;top:545.6px;font-size:6.70px;color:#000;letter-spacing:-0.15px;transform:scaleX(0.87);transform-origin:0 50%;">Mobility</div><svg class="a" style="left:456px;top:553.0px;" width="5" height="7" viewBox="0 0 5 7"><path d="M0.8 0.8 L4 3.5 L0.8 6.2 Z" fill="none" stroke="#909090" stroke-width="0.8"/></svg><div class="t" style="left:463.0px;top:554.1px;font-size:6.70px;color:#000;letter-spacing:-0.15px;transform:scaleX(0.87);transform-origin:0 50%;">Resistance</div><svg class="a" style="left:456px;top:561.5px;" width="5" height="7" viewBox="0 0 5 7"><path d="M0.8 0.8 L4 3.5 L0.8 6.2 Z" fill="none" stroke="#909090" stroke-width="0.8"/></svg><div class="t" style="left:463.0px;top:562.6px;font-size:6.70px;color:#000;letter-spacing:-0.15px;transform:scaleX(0.87);transform-origin:0 50%;">Velocity Saturation</div><div class="a" style="left:511.5px;top:501px;width:7.5px;height:70px;background:#f0f0f0;border-left:1px solid #e0e0e0;"></div><svg class="a" style="left:512px;top:502px;" width="6" height="4" viewBox="0 0 6 4"><path d="M0.5 3.5 L3 0.5 L5.5 3.5 Z" fill="#333"/></svg><svg class="a" style="left:512px;top:565px;" width="6" height="4" viewBox="0 0 6 4"><path d="M0.5 0.5 L3 3.5 L5.5 0.5 Z" fill="#333"/></svg><div class="a" style="left:512px;top:509px;width:7px;height:11px;background:linear-gradient(90deg,#f4f4f4,#dcdcdc);border:1px solid #999;border-radius:1px;"></div><div class="a" style="left:432px;top:571px;width:87px;height:7px;background:#f0f0f0;border-top:1px solid #e0e0e0;"></div><div class="a" style="left:440px;top:571.5px;width:34px;height:6.0px;background:linear-gradient(#f4f4f4,#dcdcdc);border:1px solid #999;border-radius:2px;"></div><svg class="a" style="left:433px;top:572px;" width="5" height="6" viewBox="0 0 5 6"><path d="M4 0.5 L1 3 L4 5.5 Z" fill="#333"/></svg><svg class="a" style="left:505px;top:572px;" width="5" height="6" viewBox="0 0 5 6"><path d="M1 0.5 L4 3 L1 5.5 Z" fill="#333"/></svg><div class="a" style="left:525px;top:460px;width:329px;height:118px;background:#ececec;border:1px solid #8a8a8a;"></div><div class="a" style="left:525.5px;top:460.5px;width:15.5px;height:9.5px;background:linear-gradient(#f4f4f4,#e2e2e2);border-right:1px solid #c4c4c4;border-bottom:1px solid #c8c8c8;"></div><div class="t" style="left:527.0px;top:462.9px;font-size:6.70px;color:#1a1a1a;font-family:'Liberation Mono',monospace;letter-spacing:0px;-webkit-text-stroke:0.25px #1a1a1a;">Use</div><div class="a" style="left:541.5px;top:460.5px;width:96.5px;height:9.5px;background:linear-gradient(#f4f4f4,#e2e2e2);border-right:1px solid #c4c4c4;border-bottom:1px solid #c8c8c8;"></div><div class="t" style="left:543.0px;top:462.9px;font-size:6.70px;color:#1a1a1a;font-family:'Liberation Mono',monospace;letter-spacing:0px;-webkit-text-stroke:0.25px #1a1a1a;">Name</div><div class="a" style="left:638.5px;top:460.5px;width:47.5px;height:9.5px;background:linear-gradient(#f4f4f4,#e2e2e2);border-right:1px solid #c4c4c4;border-bottom:1px solid #c8c8c8;"></div><div class="t" style="left:640.0px;top:462.9px;font-size:6.70px;color:#1a1a1a;font-family:'Liberation Mono',monospace;letter-spacing:0px;-webkit-text-stroke:0.25px #1a1a1a;">Min</div><div class="a" style="left:686.5px;top:460.5px;width:44.5px;height:9.5px;background:linear-gradient(#f4f4f4,#e2e2e2);border-right:1px solid #c4c4c4;border-bottom:1px solid #c8c8c8;"></div><div class="t" style="left:688.0px;top:462.9px;font-size:6.70px;color:#1a1a1a;font-family:'Liberation Mono',monospace;letter-spacing:0px;-webkit-text-stroke:0.25px #1a1a1a;">Value</div><div class="a" style="left:731.5px;top:460.5px;width:46.5px;height:9.5px;background:linear-gradient(#f4f4f4,#e2e2e2);border-right:1px solid #c4c4c4;border-bottom:1px solid #c8c8c8;"></div><div class="t" style="left:733.0px;top:462.9px;font-size:6.70px;color:#1a1a1a;font-family:'Liberation Mono',monospace;letter-spacing:0px;-webkit-text-stroke:0.25px #1a1a1a;">Max</div><div class="a" style="left:778.5px;top:460.5px;width:46.5px;height:9.5px;background:linear-gradient(#f4f4f4,#e2e2e2);border-right:1px solid #c4c4c4;border-bottom:1px solid #c8c8c8;"></div><div class="t" style="left:780.0px;top:462.9px;font-size:6.70px;color:#1a1a1a;font-family:'Liberation Mono',monospace;letter-spacing:0px;-webkit-text-stroke:0.25px #1a1a1a;">Stored</div><div class="a" style="left:825.5px;top:460.5px;width:26.5px;height:9.5px;background:linear-gradient(#f4f4f4,#e2e2e2);border-right:1px solid #c4c4c4;border-bottom:1px solid #c8c8c8;"></div><div class="t" style="left:827.0px;top:462.9px;font-size:6.70px;color:#1a1a1a;font-family:'Liberation Mono',monospace;letter-spacing:0px;-webkit-text-stroke:0.25px #1a1a1a;">Tuner</div><div class="a" style="left:525.5px;top:470px;width:15.5px;height:10px;background:#f0f0f0;border-right:1px solid #d4d4d4;border-bottom:1px solid #d4d4d4;"></div><div class="a" style="left:529px;top:471.5px;width:7px;height:7.0px;background:#fff;border:1px solid #8a8a9a;"></div><svg class="a" style="left:529px;top:471px;" width="8" height="8" viewBox="0 0 8 8"><path d="M1.5 4 L3.2 6.2 L6.5 1.5" stroke="#2a3a8a" stroke-width="1.1" fill="none"/></svg><div class="a" style="left:541px;top:470px;width:97px;height:10px;background:#fff;border-right:1px solid #d0d0d0;border-bottom:1px solid #d0d0d0;"></div><div class="t" style="left:545.0px;top:472.7px;font-size:6.70px;color:#1a1a1a;font-family:'Liberation Mono',monospace;letter-spacing:0px;-webkit-text-stroke:0.25px #1a1a1a;">CFL</div><div class="a" style="left:638px;top:470px;width:48px;height:10px;background:#fff;border-right:1px solid #d0d0d0;border-bottom:1px solid #d0d0d0;"></div><div class="t" style="left:644.0px;top:472.7px;font-size:6.70px;color:#1a1a1a;font-family:'Liberation Mono',monospace;letter-spacing:0px;-webkit-text-stroke:0.25px #1a1a1a;">0.0000</div><div class="a" style="left:686px;top:470px;width:45px;height:10px;background:#fff;border-right:1px solid #d0d0d0;border-bottom:1px solid #d0d0d0;"></div><div class="t" style="left:689.5px;top:472.7px;font-size:6.70px;color:#1a1a1a;font-family:'Liberation Mono',monospace;letter-spacing:0px;-webkit-text-stroke:0.25px #1a1a1a;">434.34u</div><div class="a" style="left:731px;top:470px;width:47px;height:10px;background:#fff;border-right:1px solid #d0d0d0;border-bottom:1px solid #d0d0d0;"></div><div class="t" style="left:737.0px;top:472.7px;font-size:6.70px;color:#1a1a1a;font-family:'Liberation Mono',monospace;letter-spacing:0px;-webkit-text-stroke:0.25px #1a1a1a;">2.0000m</div><div class="t" style="left:784.0px;top:472.7px;font-size:6.70px;color:#1a1a1a;font-family:'Liberation Mono',monospace;letter-spacing:0px;-webkit-text-stroke:0.25px #1a1a1a;">0.0000</div><div class="a" style="left:825px;top:470px;width:27px;height:10px;background:#fff;border-right:1px solid #d0d0d0;border-bottom:1px solid #d0d0d0;"></div><div class="t" style="left:829.0px;top:472.7px;font-size:6.70px;color:#1a1a1a;font-family:'Liberation Mono',monospace;letter-spacing:0px;-webkit-text-stroke:0.25px #1a1a1a;">G</div><div class="a" style="left:525.5px;top:480px;width:15.5px;height:10px;background:#f0f0f0;border-right:1px solid #d4d4d4;border-bottom:1px solid #d4d4d4;"></div><div class="a" style="left:529px;top:481.5px;width:7px;height:7.0px;background:#fff;border:1px solid #8a8a9a;"></div><svg class="a" style="left:529px;top:481px;" width="8" height="8" viewBox="0 0 8 8"><path d="M1.5 4 L3.2 6.2 L6.5 1.5" stroke="#2a3a8a" stroke-width="1.1" fill="none"/></svg><div class="a" style="left:541px;top:480px;width:97px;height:10px;background:#fff;border-right:1px solid #d0d0d0;border-bottom:1px solid #d0d0d0;"></div><div class="t" style="left:545.0px;top:482.7px;font-size:6.70px;color:#1a1a1a;font-family:'Liberation Mono',monospace;letter-spacing:0px;-webkit-text-stroke:0.25px #1a1a1a;">CFLEXP</div><div class="a" style="left:638px;top:480px;width:48px;height:10px;background:#fff;border-right:1px solid #d0d0d0;border-bottom:1px solid #d0d0d0;"></div><div class="t" style="left:644.0px;top:482.7px;font-size:6.70px;color:#1a1a1a;font-family:'Liberation Mono',monospace;letter-spacing:0px;-webkit-text-stroke:0.25px #1a1a1a;">1.0000</div><div class="a" style="left:686px;top:480px;width:45px;height:10px;background:#fff;border-right:1px solid #d0d0d0;border-bottom:1px solid #d0d0d0;"></div><div class="t" style="left:689.5px;top:482.7px;font-size:6.70px;color:#1a1a1a;font-family:'Liberation Mono',monospace;letter-spacing:0px;-webkit-text-stroke:0.25px #1a1a1a;">1.7817</div><div class="a" style="left:731px;top:480px;width:47px;height:10px;background:#fff;border-right:1px solid #d0d0d0;border-bottom:1px solid #d0d0d0;"></div><div class="t" style="left:737.0px;top:482.7px;font-size:6.70px;color:#1a1a1a;font-family:'Liberation Mono',monospace;letter-spacing:0px;-webkit-text-stroke:0.25px #1a1a1a;">4.0000</div><div class="t" style="left:784.0px;top:482.7px;font-size:6.70px;color:#1a1a1a;font-family:'Liberation Mono',monospace;letter-spacing:0px;-webkit-text-stroke:0.25px #1a1a1a;">0.0000</div><div class="a" style="left:825px;top:480px;width:27px;height:10px;background:#fff;border-right:1px solid #d0d0d0;border-bottom:1px solid #d0d0d0;"></div><div class="t" style="left:829.0px;top:482.7px;font-size:6.70px;color:#1a1a1a;font-family:'Liberation Mono',monospace;letter-spacing:0px;-webkit-text-stroke:0.25px #1a1a1a;">G</div><div class="a" style="left:525.5px;top:490px;width:15.5px;height:10px;background:#f0f0f0;border-right:1px solid #d4d4d4;border-bottom:1px solid #d4d4d4;"></div><div class="a" style="left:529px;top:491.5px;width:7px;height:7.0px;background:#fff;border:1px solid #8a8a9a;"></div><svg class="a" style="left:529px;top:491px;" width="8" height="8" viewBox="0 0 8 8"><path d="M1.5 4 L3.2 6.2 L6.5 1.5" stroke="#2a3a8a" stroke-width="1.1" fill="none"/></svg><div class="a" style="left:541px;top:490px;width:97px;height:10px;background:#fff;border-right:1px solid #d0d0d0;border-bottom:1px solid #d0d0d0;"></div><div class="t" style="left:545.0px;top:492.7px;font-size:6.70px;color:#1a1a1a;font-family:'Liberation Mono',monospace;letter-spacing:0px;-webkit-text-stroke:0.25px #1a1a1a;">CFW</div><div class="a" style="left:638px;top:490px;width:48px;height:10px;background:#fff;border-right:1px solid #d0d0d0;border-bottom:1px solid #d0d0d0;"></div><div class="t" style="left:640.0px;top:492.7px;font-size:6.70px;color:#1a1a1a;font-family:'Liberation Mono',monospace;letter-spacing:0px;-webkit-text-stroke:0.25px #1a1a1a;">-1.0000</div><div class="a" style="left:686px;top:490px;width:45px;height:10px;background:#fff;border-right:1px solid #d0d0d0;border-bottom:1px solid #d0d0d0;"></div><div class="t" style="left:688.0px;top:492.7px;font-size:6.70px;color:#1a1a1a;font-family:'Liberation Mono',monospace;letter-spacing:0px;-webkit-text-stroke:0.25px #1a1a1a;">-36.384m</div><div class="a" style="left:731px;top:490px;width:47px;height:10px;background:#fff;border-right:1px solid #d0d0d0;border-bottom:1px solid #d0d0d0;"></div><div class="t" style="left:737.0px;top:492.7px;font-size:6.70px;color:#1a1a1a;font-family:'Liberation Mono',monospace;letter-spacing:0px;-webkit-text-stroke:0.25px #1a1a1a;">1.0000</div><div class="t" style="left:784.0px;top:492.7px;font-size:6.70px;color:#1a1a1a;font-family:'Liberation Mono',monospace;letter-spacing:0px;-webkit-text-stroke:0.25px #1a1a1a;">0.0000</div><div class="a" style="left:825px;top:490px;width:27px;height:10px;background:#fff;border-right:1px solid #d0d0d0;border-bottom:1px solid #d0d0d0;"></div><div class="t" style="left:829.0px;top:492.7px;font-size:6.70px;color:#1a1a1a;font-family:'Liberation Mono',monospace;letter-spacing:0px;-webkit-text-stroke:0.25px #1a1a1a;">G</div><div class="a" style="left:525.5px;top:500px;width:15.5px;height:10px;background:#f0f0f0;border-right:1px solid #d4d4d4;border-bottom:1px solid #d4d4d4;"></div><div class="a" style="left:529px;top:501.5px;width:7px;height:7.0px;background:#fff;border:1px solid #8a8a9a;"></div><svg class="a" style="left:529px;top:501px;" width="8" height="8" viewBox="0 0 8 8"><path d="M1.5 4 L3.2 6.2 L6.5 1.5" stroke="#2a3a8a" stroke-width="1.1" fill="none"/></svg><div class="a" style="left:541px;top:500px;width:97px;height:10px;background:#fff;border-right:1px solid #d0d0d0;border-bottom:1px solid #d0d0d0;"></div><div class="t" style="left:545.0px;top:502.7px;font-size:6.70px;color:#1a1a1a;font-family:'Liberation Mono',monospace;letter-spacing:0px;-webkit-text-stroke:0.25px #1a1a1a;"></div><div class="a" style="left:638px;top:500px;width:48px;height:10px;background:#fff;border-right:1px solid #d0d0d0;border-bottom:1px solid #d0d0d0;"></div><div class="t" style="left:644.0px;top:502.7px;font-size:6.70px;color:#1a1a1a;font-family:'Liberation Mono',monospace;letter-spacing:0px;-webkit-text-stroke:0.25px #1a1a1a;">1.0000f</div><div class="a" style="left:731px;top:500px;width:47px;height:10px;background:#fff;border-right:1px solid #d0d0d0;border-bottom:1px solid #d0d0d0;"></div><div class="t" style="left:737.0px;top:502.7px;font-size:6.70px;color:#1a1a1a;font-family:'Liberation Mono',monospace;letter-spacing:0px;-webkit-text-stroke:0.25px #1a1a1a;">1.0000MEG</div><div class="t" style="left:784.0px;top:502.7px;font-size:6.70px;color:#1a1a1a;font-family:'Liberation Mono',monospace;letter-spacing:0px;-webkit-text-stroke:0.25px #1a1a1a;">0.0000</div><div class="a" style="left:825px;top:500px;width:27px;height:10px;background:#fff;border-right:1px solid #d0d0d0;border-bottom:1px solid #d0d0d0;"></div><div class="t" style="left:829.0px;top:502.7px;font-size:6.70px;color:#1a1a1a;font-family:'Liberation Mono',monospace;letter-spacing:0px;-webkit-text-stroke:0.25px #1a1a1a;">G</div>
</body></html>
